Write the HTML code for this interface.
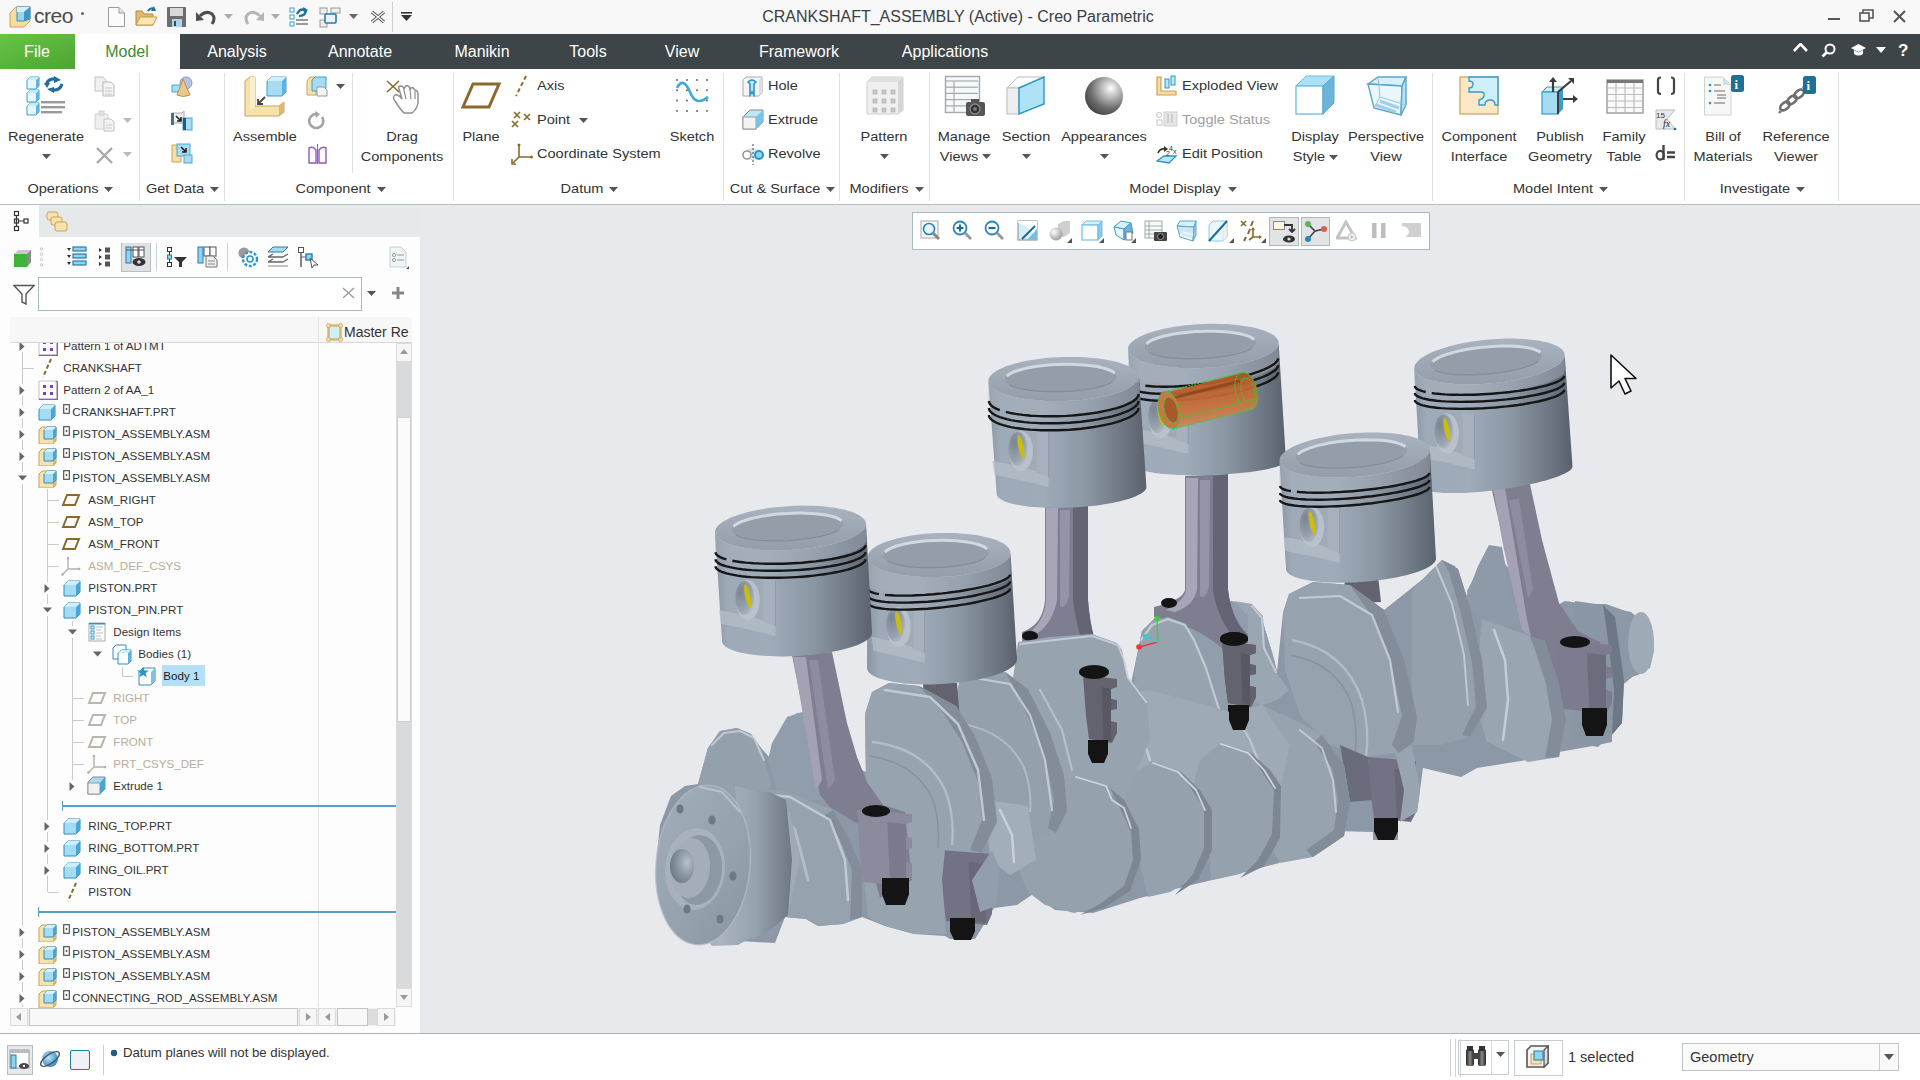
<!DOCTYPE html>
<html><head><meta charset="utf-8"><style>
html,body{margin:0;padding:0;width:1920px;height:1080px;overflow:hidden;background:#e8e9ed;font-family:"Liberation Sans", sans-serif;}
.t{position:absolute;white-space:nowrap;line-height:20px;font-family:"Liberation Sans", sans-serif;}
</style></head><body>
<div style="position:absolute;left:0px;top:0px;width:1920px;height:34px;background:#f8f8f8"></div><div style="position:absolute;left:0px;top:34px;width:1920px;height:35px;background:#3d4548"></div><div style="position:absolute;left:0px;top:34px;width:75px;height:35px;background:linear-gradient(160deg,#65c545,#4ea432)"></div><div style="position:absolute;left:75px;top:34px;width:105px;height:35px;background:#fff"></div><div style="position:absolute;left:0px;top:69px;width:1920px;height:135px;background:#fff"></div><div style="position:absolute;left:0px;top:204px;width:1920px;height:1px;background:#b3bfbf"></div><div style="position:absolute;left:0px;top:205px;width:420px;height:828px;background:#fdfdfd"></div><div style="position:absolute;left:0px;top:205px;width:420px;height:32px;background:#e6e9ea"></div><div style="position:absolute;left:0px;top:205px;width:39px;height:32px;background:#fdfdfd"></div><div style="position:absolute;left:420px;top:205px;width:1500px;height:828px;background:#e8e9ed"></div><div style="position:absolute;left:0px;top:1033px;width:1920px;height:1px;background:#a9b6b8"></div><div style="position:absolute;left:0px;top:1034px;width:1920px;height:46px;background:#fff"></div><svg style="position:absolute;left:9px;top:6px;" width="22" height="22" viewBox="0 0 22 22"><path d="M1,7 L7,1 L21,1 L21,15 L15,21 L1,21Z" fill="#f7dca0" stroke="#c9a25a" stroke-width="1"/><path d="M8,1 L21,1 L21,13 L15,15 L8,15Z" fill="#9bd3ef" stroke="#2f8fc0" stroke-width="1"/><path d="M8,1 L21,1 L15,6 L8,6Z" fill="#d4effa"/><path d="M15,6 L21,1 L21,13 L15,15Z" fill="#3b97c8"/></svg><div class="t" style="left:34px;top:2px;font-size:21px;line-height:28px;color:#4a4a4a;letter-spacing:-0.5px">creo</div><div style="position:absolute;left:81px;top:12px;width:3px;height:3px;border-radius:2px;background:#666"></div><svg style="position:absolute;left:107px;top:6px;" width="19" height="22" viewBox="0 0 19 22"><path d="M1.5,1.5 L12,1.5 L17.5,7 L17.5,20.5 L1.5,20.5Z" fill="#fbfbfb" stroke="#9a9a9a" stroke-width="1"/><path d="M12,1.5 L12,7 L17.5,7" fill="#dfe8ef" stroke="#9a9a9a" stroke-width="1"/></svg><svg style="position:absolute;left:135px;top:5px;" width="23" height="22" viewBox="0 0 23 22"><path d="M1,8 L1,20 L18,20 L18,9 L9,9 L7,6 L1,6Z" fill="#e3b96a" stroke="#b88a3a" stroke-width="1"/><path d="M1,20 L5,12 L22,12 L18,20Z" fill="#fbe6b8" stroke="#c8994a" stroke-width="1"/><path d="M13,6 Q16,2 19,4" fill="none" stroke="#1f6f9a" stroke-width="2"/><path d="M19,1 L21,6 L16,6Z" fill="#1f6f9a"/></svg><svg style="position:absolute;left:166px;top:6px;" width="21" height="22" viewBox="0 0 21 22"><rect x="1" y="1" width="19" height="20" rx="1" fill="#6d6d6d"/><rect x="4" y="2" width="13" height="8" fill="#d8d8d8"/><rect x="6" y="13" width="10" height="8" fill="#a9d6ee"/><rect x="8" y="15" width="2" height="5" fill="#444"/></svg><svg style="position:absolute;left:195px;top:9px;" width="22" height="17" viewBox="0 0 22 17"><path d="M5,7 Q11,1 17,5 Q21,9 17,15" fill="none" stroke="#4d4d4d" stroke-width="3"/><path d="M1,3 L9,11 L1,12Z" fill="#4d4d4d"/></svg><svg style="position:absolute;left:223.5px;top:13.5px;" width="9" height="5" viewBox="0 0 9 5"><path d="M0,0 L9,0 L4.5,5Z" fill="#aaa"/></svg><svg style="position:absolute;left:243px;top:9px;" width="22" height="17" viewBox="0 0 22 17"><path d="M17,7 Q11,1 5,5 Q1,9 5,15" fill="none" stroke="#b5b5b5" stroke-width="3"/><path d="M21,3 L13,11 L21,12Z" fill="#b5b5b5"/></svg><svg style="position:absolute;left:270.5px;top:13.5px;" width="9" height="5" viewBox="0 0 9 5"><path d="M0,0 L9,0 L4.5,5Z" fill="#aaa"/></svg><svg style="position:absolute;left:289px;top:6px;" width="21" height="21" viewBox="0 0 21 21"><rect x="1" y="2" width="4" height="4" fill="#fff" stroke="#3a9cc9"/><rect x="1" y="9" width="4" height="4" fill="#fff" stroke="#3a9cc9"/><rect x="1" y="16" width="4" height="4" fill="#fff" stroke="#3a9cc9"/><rect x="7" y="13" width="12" height="2" fill="#999"/><rect x="7" y="17" width="12" height="2" fill="#999"/><path d="M8,8 Q11,2 16,4" fill="none" stroke="#1f6f9a" stroke-width="2.2"/><path d="M14,1 L19,4 L15,7Z" fill="#1f6f9a"/><path d="M17,5 Q16,10 10,10" fill="none" stroke="#1f6f9a" stroke-width="2.2"/></svg><svg style="position:absolute;left:319px;top:7px;" width="23" height="21" viewBox="0 0 23 21"><rect x="1" y="1" width="7" height="6" fill="#eee" stroke="#999"/><rect x="12" y="1" width="9" height="5" fill="#eee" stroke="#999"/><rect x="1" y="13" width="7" height="7" fill="#eee" stroke="#999"/><rect x="6" y="7" width="11" height="9" rx="1" fill="#e9f2f8" stroke="#2a7aa8" stroke-width="1.6"/></svg><svg style="position:absolute;left:348.5px;top:13.5px;" width="9" height="5" viewBox="0 0 9 5"><path d="M0,0 L9,0 L4.5,5Z" fill="#666"/></svg><svg style="position:absolute;left:370px;top:10px;" width="16" height="14" viewBox="0 0 16 14"><path d="M2,2 L14,12 M14,2 L2,12" stroke="#555" stroke-width="3.2"/><path d="M2,2 L14,12 M14,2 L2,12" stroke="#fff" stroke-width="1.2"/></svg><div style="position:absolute;left:392px;top:2px;width:1px;height:30px;background:#cfcfcf"></div><svg style="position:absolute;left:401px;top:12px;" width="11" height="9" viewBox="0 0 11 9"><rect x="0" y="0" width="11" height="1.6" fill="#333"/><path d="M0,3 L11,3 L5.5,9Z" fill="#333"/></svg><div style="position:absolute;left:1828px;top:18px;width:12px;height:2px;background:#555"></div><svg style="position:absolute;left:1859px;top:9px;" width="15" height="13" viewBox="0 0 15 13"><rect x="1" y="4" width="9" height="8" fill="none" stroke="#555" stroke-width="1.6"/><path d="M4,4 L4,1 L14,1 L14,9 L10,9" fill="none" stroke="#555" stroke-width="1.6"/></svg><svg style="position:absolute;left:1893px;top:10px;" width="13" height="13" viewBox="0 0 13 13"><path d="M1,1 L12,12 M12,1 L1,12" stroke="#555" stroke-width="2"/></svg><svg style="position:absolute;left:1793px;top:43px;" width="15" height="9" viewBox="0 0 15 9"><path d="M1,8 L7.5,1 L14,8" fill="none" stroke="#fff" stroke-width="2.6"/></svg><svg style="position:absolute;left:1821px;top:43px;" width="15" height="15" viewBox="0 0 15 15"><circle cx="9" cy="6" r="4.5" fill="none" stroke="#fff" stroke-width="2"/><path d="M6,9 L1.5,13.5" stroke="#fff" stroke-width="2.6"/></svg><svg style="position:absolute;left:1850px;top:43px;" width="17" height="14" viewBox="0 0 17 14"><path d="M1,5 L8.5,1 L16,5 L8.5,9Z" fill="#fff"/><path d="M4,7 L4,11 Q8.5,14 13,11 L13,7 L8.5,9.5Z" fill="#fff"/></svg><svg style="position:absolute;left:1876.0px;top:47.0px;" width="10" height="6" viewBox="0 0 10 6"><path d="M0,0 L10,0 L5.0,6Z" fill="#fff"/></svg><div class="t" style="left:1898px;top:40px;font-size:17px;line-height:22px;color:#fff;font-weight:bold">?</div><svg style="position:absolute;left:26px;top:76px;" width="14" height="14" viewBox="0 0 14 14"><path d="M4,1 L13,1 L13,10 L10,13 L1,13 L1,4Z" fill="#e6f6fd" stroke="#39a0d0" stroke-width="1"/><path d="M10,4 L13,1 L13,10 L10,13Z" fill="#5eb6e0"/><path d="M1,4 L4,1 L13,1 L10,4Z" fill="#c5ebfa"/></svg><svg style="position:absolute;left:26px;top:89px;" width="14" height="14" viewBox="0 0 14 14"><path d="M4,1 L13,1 L13,10 L10,13 L1,13 L1,4Z" fill="#e6f6fd" stroke="#39a0d0" stroke-width="1"/><path d="M10,4 L13,1 L13,10 L10,13Z" fill="#5eb6e0"/><path d="M1,4 L4,1 L13,1 L10,4Z" fill="#c5ebfa"/></svg><svg style="position:absolute;left:26px;top:102px;" width="14" height="14" viewBox="0 0 14 14"><path d="M4,1 L13,1 L13,10 L10,13 L1,13 L1,4Z" fill="#e6f6fd" stroke="#39a0d0" stroke-width="1"/><path d="M10,4 L13,1 L13,10 L10,13Z" fill="#5eb6e0"/><path d="M1,4 L4,1 L13,1 L10,4Z" fill="#c5ebfa"/></svg><svg style="position:absolute;left:41px;top:100px;" width="25" height="14" viewBox="0 0 25 14"><rect x="0" y="1" width="24" height="2.4" fill="#9a9a9a"/><rect x="0" y="6" width="24" height="2.4" fill="#9a9a9a"/><rect x="0" y="11" width="21" height="2.4" fill="#9a9a9a"/></svg><svg style="position:absolute;left:43px;top:76px;" width="22" height="18" viewBox="0 0 22 18"><path d="M3,9 Q5,2 13,3" fill="none" stroke="#1d6e99" stroke-width="3"/><path d="M11,0 L18,4 L11,7Z" fill="#1d6e99"/><path d="M19,8 Q17,15 9,14" fill="none" stroke="#1d6e99" stroke-width="3"/><path d="M11,11 L4,13 L11,17Z" fill="#1d6e99"/><path d="M1,7 L7,7 L4,12Z" fill="#1d6e99"/></svg><svg style="position:absolute;left:41.5px;top:153.5px;" width="9" height="5" viewBox="0 0 9 5"><path d="M0,0 L9,0 L4.5,5Z" fill="#555"/></svg><svg style="position:absolute;left:94px;top:76px;" width="21" height="21" viewBox="0 0 21 21"><path d="M1,1 L9,1 L12,4 L12,15 L1,15Z" fill="#f0f0f0" stroke="#c2c2c2"/><path d="M9,6 L17,6 L20,9 L20,20 L9,20Z" fill="#f3f3f3" stroke="#b9b9b9"/><path d="M11,12 h7 M11,15 h7 M11,18 h7" stroke="#c9c9c9"/></svg><svg style="position:absolute;left:94px;top:110px;" width="21" height="22" viewBox="0 0 21 22"><rect x="1" y="4" width="13" height="15" rx="1" fill="#efefef" stroke="#cfcfcf"/><rect x="5" y="1" width="5" height="4" fill="#e5e5e5" stroke="#cfcfcf"/><path d="M10,9 L17,9 L20,12 L20,21 L10,21Z" fill="#f4f4f4" stroke="#c2c2c2"/><path d="M12,15 h6 M12,18 h6" stroke="#cbcbcb"/></svg><svg style="position:absolute;left:122.5px;top:117.5px;" width="9" height="5" viewBox="0 0 9 5"><path d="M0,0 L9,0 L4.5,5Z" fill="#bbb"/></svg><svg style="position:absolute;left:95px;top:146px;" width="19" height="19" viewBox="0 0 19 19"><path d="M2,2 L17,17 M17,2 L2,17" stroke="#a9a9a9" stroke-width="2.4"/></svg><svg style="position:absolute;left:122.5px;top:151.5px;" width="9" height="5" viewBox="0 0 9 5"><path d="M0,0 L9,0 L4.5,5Z" fill="#bbb"/></svg><svg style="position:absolute;left:171px;top:76px;" width="22" height="21" viewBox="0 0 22 21"><path d="M1,9 L10,9 L10,16 L1,16Z" fill="#a8dcf2" stroke="#4aa6d2"/><circle cx="15" cy="7" r="6" fill="#b9c2e8" stroke="#8894c8"/><path d="M12,3 L19,19 Q12,22 6,19Z" fill="#e8c98a" stroke="#b8934a"/></svg><svg style="position:absolute;left:171px;top:110px;" width="22" height="21" viewBox="0 0 22 21"><path d="M1,3 L11,3 L13,1 L13,13 L1,13Z" fill="#eeeeee" stroke="#aaa"/><rect x="0" y="3" width="3" height="12" fill="#4a6f86"/><path d="M5,6 L10,11 M10,7 L10,11 L6,11" stroke="#222" stroke-width="1.6" fill="none"/><rect x="12" y="8" width="9" height="12" fill="#a8dcf2" stroke="#4aa6d2"/><rect x="12" y="8" width="3" height="12" fill="#1d5f80"/></svg><svg style="position:absolute;left:171px;top:143px;" width="22" height="21" viewBox="0 0 22 21"><path d="M1,2 L10,2 L10,19 L1,19Z" fill="#f6dfa6" stroke="#c9a25a"/><rect x="6" y="1" width="13" height="12" fill="#a8dcf2" stroke="#4aa6d2"/><path d="M10,4 L15,9 M15,5 L15,9 L11,9" stroke="#222" stroke-width="1.6" fill="none"/><rect x="13" y="12" width="8" height="8" fill="#a8dcf2" stroke="#4aa6d2"/></svg><svg style="position:absolute;left:243px;top:75px;" width="44" height="43" viewBox="0 0 44 43"><path d="M2,6 L7,2 L12,2 L12,31 L36,31 L41,27 L41,37 L36,41 L2,41Z" fill="#f8e2ac" stroke="#c9a25a" stroke-width="1"/><path d="M7,2 L12,2 L12,31 L7,35Z" fill="#fcefcf"/><path d="M36,31 L41,27 L41,37 L36,41Z" fill="#d9b874"/><path d="M24,6 L28,2 L43,2 L43,17 L39,21 L24,21Z" fill="#a6dcf3" stroke="#3a9cc9"/><path d="M39,6 L43,2 L43,17 L39,21Z" fill="#5eb2dc"/><path d="M24,6 L28,2 L43,2 L39,6Z" fill="#d2f0fb"/><path d="M22,22 L15,29 M15,24 L15,29 L20,29" stroke="#444" stroke-width="1.8" fill="none"/></svg><svg style="position:absolute;left:306px;top:76px;" width="23" height="21" viewBox="0 0 23 21"><path d="M1,5 L4,1 L10,1 L10,19 L1,19Z" fill="#f8e2ac" stroke="#c9a25a"/><path d="M6,4 L9,1 L20,1 L20,12 L17,15 L6,15Z" fill="#a6dcf3" stroke="#3a9cc9"/><path d="M11,11 L18,11 L21,14 L21,20 L11,20Z" fill="#f4f4f4" stroke="#999"/></svg><svg style="position:absolute;left:335.5px;top:83.5px;" width="9" height="5" viewBox="0 0 9 5"><path d="M0,0 L9,0 L4.5,5Z" fill="#555"/></svg><svg style="position:absolute;left:308px;top:111px;" width="19" height="19" viewBox="0 0 19 19"><path d="M14,6 A7,7 0 1 1 9,3" fill="none" stroke="#a3a3a3" stroke-width="2.6"/><path d="M7,0 L12,3 L8,7Z" fill="#a3a3a3"/></svg><svg style="position:absolute;left:307px;top:144px;" width="21" height="20" viewBox="0 0 21 20"><path d="M2,19 L2,4 Q6,2 9,6 L9,19Z" fill="#fbf9fd" stroke="#8e5bbd" stroke-width="1.4"/><path d="M19,19 L19,4 Q15,2 12,6 L12,19Z" fill="#fbf9fd" stroke="#8e5bbd" stroke-width="1.4"/><rect x="10" y="0" width="1" height="20" fill="#777"/></svg><div style="position:absolute;left:352px;top:73px;width:1px;height:100px;background:#dde2e2"></div><svg style="position:absolute;left:384px;top:78px;" width="38" height="38" viewBox="0 0 38 38"><path d="M3,3 L15,14 M15,3 L3,14" stroke="#8a6a2a" stroke-width="1.6"/><path d="M11,23 Q8,19 11,17 Q14,16 18,21 L15,11 Q14,8 17,8 Q19,8 20,11 L21,9 Q22,7 24,8 Q26,9 26,11 L27,10 Q29,9 30,11 L31,12 Q33,12 34,15 L34,25 Q33,31 28,35 L20,35 Q16,31 11,23Z" fill="#fff" stroke="#8f8f8f" stroke-width="1.5"/><path d="M20,12 L22,21 M26,11 L27,21 M31,13 L31,21" stroke="#8f8f8f" stroke-width="1.2"/></svg><svg style="position:absolute;left:460px;top:81px;" width="42" height="29" viewBox="0 0 42 29"><path d="M3,26 L13,3 L39,3 L29,26Z" fill="none" stroke="#8a6a2a" stroke-width="3"/></svg><svg style="position:absolute;left:513px;top:75px;" width="16" height="22" viewBox="0 0 16 22"><path d="M13,1 L3,21" stroke="#8a6a2a" stroke-width="2" stroke-dasharray="4,3"/></svg><svg style="position:absolute;left:511px;top:110px;" width="22" height="19" viewBox="0 0 22 19"><path d="M3,2 l6,6 M9,2 l-6,6 M13,4 l6,6 M19,4 l-6,6 M1,11 l6,6 M7,11 l-6,6" stroke="#8a6a2a" stroke-width="1.6"/></svg><svg style="position:absolute;left:511px;top:143px;" width="23" height="22" viewBox="0 0 23 22"><path d="M8,2 L8,14 L20,14 M8,14 L2,20" fill="none" stroke="#8a6a2a" stroke-width="1.6"/><circle cx="8" cy="2" r="1.5" fill="#8a6a2a"/><circle cx="20.5" cy="14" r="1.5" fill="#8a6a2a"/><path d="M1,16 L1,21 L5,21" fill="none" stroke="#8a6a2a" stroke-width="1.6"/></svg><svg style="position:absolute;left:578.5px;top:117.5px;" width="9" height="5" viewBox="0 0 9 5"><path d="M0,0 L9,0 L4.5,5Z" fill="#555"/></svg><svg style="position:absolute;left:675px;top:78px;" width="36" height="35" viewBox="0 0 36 35"><circle cx="2" cy="2.0" r="1" fill="#666"/><circle cx="2" cy="12.3" r="1" fill="#666"/><circle cx="2" cy="22.6" r="1" fill="#666"/><circle cx="2" cy="32.900000000000006" r="1" fill="#666"/><circle cx="12" cy="2.0" r="1" fill="#666"/><circle cx="12" cy="12.3" r="1" fill="#666"/><circle cx="12" cy="22.6" r="1" fill="#666"/><circle cx="12" cy="32.900000000000006" r="1" fill="#666"/><circle cx="22" cy="2.0" r="1" fill="#666"/><circle cx="22" cy="12.3" r="1" fill="#666"/><circle cx="22" cy="22.6" r="1" fill="#666"/><circle cx="22" cy="32.900000000000006" r="1" fill="#666"/><circle cx="32" cy="2.0" r="1" fill="#666"/><circle cx="32" cy="12.3" r="1" fill="#666"/><circle cx="32" cy="22.6" r="1" fill="#666"/><circle cx="32" cy="32.900000000000006" r="1" fill="#666"/><path d="M2,10 Q8,-2 15,14 Q21,29 33,19" fill="none" stroke="#3aaadf" stroke-width="2.6"/></svg><svg style="position:absolute;left:742px;top:76px;" width="22" height="21" viewBox="0 0 22 21"><path d="M1,4 L4,1 L20,1 L20,17 L17,20 L1,20Z" fill="#f5f5f5" stroke="#aaa"/><path d="M17,4 L20,1 L20,17 L17,20Z" fill="#ddd"/><path d="M6,6 Q10,2 14,6 L12,8 L12,19 L10,16 L8,19 L8,8Z" fill="#bfe6f6" stroke="#2a95c8" stroke-width="1.6"/></svg><svg style="position:absolute;left:742px;top:109px;" width="22" height="21" viewBox="0 0 22 21"><path d="M1,8 L8,1 L21,1 L21,13 L14,20 L1,20Z" fill="#bfe6f6" stroke="#888"/><rect x="1" y="8" width="13" height="12" fill="#f3f3f3" stroke="#999"/><path d="M14,8 L21,1 L21,13 L14,20Z" fill="#7cc2e2"/></svg><svg style="position:absolute;left:742px;top:144px;" width="22" height="21" viewBox="0 0 22 21"><ellipse cx="11" cy="10" rx="9" ry="6" fill="#cfe9f6"/><circle cx="5" cy="11" r="4" fill="#fff" stroke="#999" stroke-width="1.6"/><circle cx="17" cy="11" r="4" fill="#8fd3f3" stroke="#2a95c8" stroke-width="2"/><path d="M11,0 L11,21" stroke="#444" stroke-width="1" stroke-dasharray="2,2"/></svg><svg style="position:absolute;left:865px;top:76px;" width="40" height="40" viewBox="0 0 40 40"><path d="M2,6 L7,1 L38,1 L38,34 L33,38 L2,38Z" fill="#efefef" stroke="#cfcfcf"/><path d="M33,6 L38,1 L38,34 L33,38Z" fill="#d6d6d6"/><path d="M2,6 L7,1 L38,1 L33,6Z" fill="#e0e0e0"/><rect x="8" y="14" width="4" height="4" fill="#c8c8c8" stroke="#aaa" stroke-width="0.6"/><rect x="8" y="23" width="4" height="4" fill="#c8c8c8" stroke="#aaa" stroke-width="0.6"/><rect x="8" y="32" width="4" height="4" fill="#c8c8c8" stroke="#aaa" stroke-width="0.6"/><rect x="17" y="14" width="4" height="4" fill="#c8c8c8" stroke="#aaa" stroke-width="0.6"/><rect x="17" y="23" width="4" height="4" fill="#c8c8c8" stroke="#aaa" stroke-width="0.6"/><rect x="17" y="32" width="4" height="4" fill="#c8c8c8" stroke="#aaa" stroke-width="0.6"/><rect x="26" y="14" width="4" height="4" fill="#c8c8c8" stroke="#aaa" stroke-width="0.6"/><rect x="26" y="23" width="4" height="4" fill="#c8c8c8" stroke="#aaa" stroke-width="0.6"/><rect x="26" y="32" width="4" height="4" fill="#c8c8c8" stroke="#aaa" stroke-width="0.6"/></svg><svg style="position:absolute;left:879.5px;top:153.5px;" width="9" height="5" viewBox="0 0 9 5"><path d="M0,0 L9,0 L4.5,5Z" fill="#555"/></svg><svg style="position:absolute;left:944px;top:75px;" width="42" height="42" viewBox="0 0 42 42"><rect x="1.5" y="1.5" width="34" height="36" fill="#f4f9fc" stroke="#a8a8a8" stroke-width="1.4"/><path d="M2,6.0 L34,6.0" stroke="#a8a8a8" stroke-width="1.2"/><path d="M2,12.2 L34,12.2" stroke="#a8a8a8" stroke-width="1.2"/><path d="M2,18.4 L34,18.4" stroke="#a8a8a8" stroke-width="1.2"/><path d="M2,24.6 L34,24.6" stroke="#a8a8a8" stroke-width="1.2"/><path d="M2,30.8 L34,30.8" stroke="#a8a8a8" stroke-width="1.2"/><path d="M10,6 L10,37" stroke="#a8a8a8" stroke-width="1.2"/><rect x="22" y="27" width="19" height="14" rx="2" fill="#555"/><rect x="27" y="24" width="8" height="4" fill="#555"/><circle cx="31" cy="34" r="5" fill="#333" stroke="#888" stroke-width="1.4"/><circle cx="31" cy="34" r="2" fill="#777"/></svg><svg style="position:absolute;left:1006px;top:76px;" width="40" height="40" viewBox="0 0 40 40"><path d="M1,12 L12,1 L38,1 L13,12Z" fill="#fff" stroke="#bbb"/><rect x="1" y="12" width="12" height="26" fill="#eeeeee" stroke="#bbb"/><path d="M13,12 L38,1 L38,28 L13,38Z" fill="#aee3f6" stroke="#2a95c8" stroke-width="1.4"/></svg><svg style="position:absolute;left:1084px;top:76px;" width="40" height="40" viewBox="0 0 40 40"><defs><radialGradient id="sph" cx="0.68" cy="0.3" r="0.75"><stop offset="0" stop-color="#ffffff"/><stop offset="0.25" stop-color="#c9c9c9"/><stop offset="0.7" stop-color="#6e6e6e"/><stop offset="1" stop-color="#474747"/></radialGradient></defs><circle cx="20" cy="20" r="19" fill="url(#sph)"/></svg><svg style="position:absolute;left:981.5px;top:154.0px;" width="9" height="5" viewBox="0 0 9 5"><path d="M0,0 L9,0 L4.5,5Z" fill="#555"/></svg><svg style="position:absolute;left:1021.5px;top:154.0px;" width="9" height="5" viewBox="0 0 9 5"><path d="M0,0 L9,0 L4.5,5Z" fill="#555"/></svg><svg style="position:absolute;left:1099.5px;top:154.0px;" width="9" height="5" viewBox="0 0 9 5"><path d="M0,0 L9,0 L4.5,5Z" fill="#555"/></svg><svg style="position:absolute;left:1156px;top:75px;" width="22" height="22" viewBox="0 0 22 22"><path d="M1,2 L5,2 L5,16 L20,16 L20,20 L1,20Z" fill="#f7dca0" stroke="#c9a25a" stroke-width="1.2"/><rect x="9" y="4" width="4" height="9" fill="#bfe6f6" stroke="#2a95c8"/><rect x="15" y="1" width="4" height="9" fill="#bfe6f6" stroke="#2a95c8"/></svg><svg style="position:absolute;left:1156px;top:111px;" width="22" height="17" viewBox="0 0 22 17"><circle cx="3" cy="4" r="2.5" fill="none" stroke="#c8c8c8"/><rect x="1" y="9" width="5" height="5" fill="none" stroke="#c8c8c8"/><rect x="8" y="1" width="13" height="14" fill="#e6e6e6" stroke="#cfcfcf"/><path d="M12,3 L12,12 M16,3 L16,12" stroke="#c4c4c4" stroke-width="1.4"/></svg><svg style="position:absolute;left:1156px;top:144px;" width="22" height="20" viewBox="0 0 22 20"><path d="M1,17 L8,12 L20,12 L13,19Z" fill="#bfe6f6" stroke="#2a95c8" stroke-width="1.4"/><path d="M2,9 Q4,4 9,5" fill="none" stroke="#333" stroke-width="1.6"/><path d="M8,2 L12,5 L8,8Z" fill="#333"/><text x="13" y="7" font-size="7" fill="#333" font-family="Liberation Sans">4</text><text x="17" y="10" font-size="7" fill="#333" font-family="Liberation Sans">x</text><text x="10" y="12" font-size="7" fill="#333" font-family="Liberation Sans">2</text></svg><svg style="position:absolute;left:1295px;top:75px;" width="40" height="41" viewBox="0 0 40 41"><path d="M1,11 L11,1 L39,1 L28,11Z" fill="#a9e2f6" stroke="#6fc0e2"/><rect x="1" y="11" width="27" height="28" fill="#fff" stroke="#6fc0e2" stroke-width="1.4"/><path d="M28,11 L39,1 L39,28 L28,39Z" fill="#6cb5d9" stroke="#5aa6cc"/></svg><svg style="position:absolute;left:1328.5px;top:154.5px;" width="9" height="5" viewBox="0 0 9 5"><path d="M0,0 L9,0 L4.5,5Z" fill="#555"/></svg><svg style="position:absolute;left:1366px;top:75px;" width="42" height="43" viewBox="0 0 42 43"><path d="M2,9 L12,2 L40,2 L36,11Z" fill="#d8f0fa" stroke="#5aa6cc" stroke-width="1.4"/><path d="M2,9 L36,11 L35,40 L8,33Z" fill="#eaf6fb" stroke="#5aa6cc" stroke-width="1.4"/><path d="M36,11 L40,2 L40,30 L35,40Z" fill="#b9e0f1" stroke="#5aa6cc" stroke-width="1.4"/><path d="M12,2 L14,22 L40,30 M14,22 L8,33" fill="none" stroke="#8cc6e0" stroke-width="1"/><path d="M10,30 L30,37 M14,26 L33,33" stroke="#9fd0e6" stroke-width="3"/></svg><svg style="position:absolute;left:1459px;top:76px;" width="41" height="40" viewBox="0 0 41 40"><rect x="1" y="1" width="38" height="37" fill="#fbe8c4" stroke="#c9a25a" stroke-width="1.2"/><path d="M10,1 L39,1 L39,29 L36,29 Q36,24 31,24 Q26,24 26,29 L20,29 L20,24 Q24,23 25,20 Q26,16 22,16 L11,16 L10,16 L10,12 Q14,12 14,8 Q14,5 10,5Z" fill="#cdeffb" stroke="#3a9cc9" stroke-width="1.4"/></svg><svg style="position:absolute;left:1541px;top:77px;" width="38" height="39" viewBox="0 0 38 39"><path d="M1,15 L6,10 L22,10 L17,15Z" fill="#cdeffb" stroke="#3a9cc9"/><rect x="1" y="15" width="16" height="22" fill="#a6dcf3" stroke="#3a9cc9" stroke-width="1.2"/><path d="M17,15 L22,10 L22,32 L17,37Z" fill="#3a9cc9"/><path d="M12,15 L12,3 M17,15 L30,4 M22,22 L34,22" stroke="#3c3c3c" stroke-width="2.2"/><path d="M8,5 L12,0 L16,5Z M27,1 L33,1 L33,7Z M32,18 L37,22 L32,26Z" fill="#3c3c3c"/><path d="M17,15 L17,37" stroke="#3c3c3c" stroke-width="2"/></svg><svg style="position:absolute;left:1606px;top:79px;" width="38" height="35" viewBox="0 0 38 35"><rect x="1" y="1" width="36" height="33" fill="#fafafa" stroke="#9a9a9a" stroke-width="1.4"/><rect x="1" y="1" width="36" height="3" fill="#777"/><path d="M1,9.0 L36,9.0" stroke="#bcbcbc" stroke-width="1.2"/><path d="M1,15.5 L36,15.5" stroke="#bcbcbc" stroke-width="1.2"/><path d="M1,22.0 L36,22.0" stroke="#bcbcbc" stroke-width="1.2"/><path d="M1,28.5 L36,28.5" stroke="#bcbcbc" stroke-width="1.2"/><path d="M10,4 L10,33" stroke="#bcbcbc" stroke-width="1.2"/><path d="M19,4 L19,33" stroke="#bcbcbc" stroke-width="1.2"/><path d="M28,4 L28,33" stroke="#bcbcbc" stroke-width="1.2"/></svg><svg style="position:absolute;left:1656px;top:76px;" width="20" height="20" viewBox="0 0 20 20"><path d="M5,1.5 Q2,1.5 2,4 L2,15.5 Q2,18 5,18 M15,1.5 Q18,1.5 18,4 L18,15.5 Q18,18 15,18" fill="none" stroke="#444" stroke-width="2.2"/></svg><svg style="position:absolute;left:1655px;top:109px;" width="22" height="22" viewBox="0 0 22 22"><path d="M1,1 L20,1 L12,10 L20,20 L1,20Z" fill="#e9e9e9" stroke="#bbb"/><text x="1" y="9" font-size="8" fill="#333" font-family="Liberation Sans">15</text><text x="8" y="18" font-size="10" font-style="italic" fill="#222" font-family="Liberation Serif">fx</text><circle cx="20" cy="20" r="1.3" fill="#1a6a9a"/></svg><svg style="position:absolute;left:1655px;top:144px;" width="22" height="18" viewBox="0 0 22 18"><path d="M8.5,1 V16" stroke="#444" stroke-width="2.4"/><ellipse cx="5.2" cy="11.2" rx="3.6" ry="4.4" fill="none" stroke="#444" stroke-width="2.2"/><path d="M12,8.5 H20 M12,13 H20" stroke="#444" stroke-width="2.4"/></svg><svg style="position:absolute;left:1703px;top:75px;" width="42" height="42" viewBox="0 0 42 42"><path d="M1.5,2 L20,2 L28,10 L28,40 L1.5,40Z" fill="#f7f7f7" stroke="#d0d0d0"/><path d="M20,2 L20,10 L28,10" fill="#cfe0ea"/><circle cx="7" cy="10" r="1.3" fill="#2a95c8"/><circle cx="7" cy="16" r="1.3" fill="#2a95c8"/><circle cx="7" cy="28" r="1.3" fill="#2a95c8"/><path d="M11,10 h7 M11,16 h11 M14,20 h9 M14,23 h9 M11,28 h11" stroke="#9a9a9a" stroke-width="1.3"/><rect x="28" y="0" width="13" height="17" rx="2.5" fill="#1f6f96"/><text x="31.5" y="14" font-size="13" font-weight="bold" fill="#fff" font-family="Liberation Serif">i</text></svg><svg style="position:absolute;left:1777px;top:76px;" width="41" height="40" viewBox="0 0 41 40"><g fill="none" stroke="#6e6e6e" stroke-width="2.6"><ellipse cx="8" cy="30" rx="5.5" ry="3.4" transform="rotate(-40 8 30)"/><ellipse cx="15" cy="24" rx="5.5" ry="3.4" transform="rotate(-40 15 24)"/><ellipse cx="22" cy="18" rx="5.5" ry="3.4" transform="rotate(-40 22 18)"/></g><path d="M2,37 L4,35 M26,12 Q28,9 30,8" stroke="#6e6e6e" stroke-width="2.4"/><rect x="26" y="0" width="13" height="18" rx="2.5" fill="#1f6f96"/><text x="29.5" y="14" font-size="13" font-weight="bold" fill="#fff" font-family="Liberation Serif">i</text></svg><div class="t" style="left:658px;top:7px;width:600px;text-align:center;font-size:16px;color:#3a4043;">CRANKSHAFT_ASSEMBLY (Active) - Creo Parametric</div><div class="t" style="left:-263px;top:42px;width:600px;text-align:center;font-size:16px;color:#fff;">File</div><div class="t" style="left:-173px;top:42px;width:600px;text-align:center;font-size:16px;color:#3c8c2a;">Model</div><div class="t" style="left:-63px;top:42px;width:600px;text-align:center;font-size:16px;color:#fff;">Analysis</div><div class="t" style="left:60px;top:42px;width:600px;text-align:center;font-size:16px;color:#fff;">Annotate</div><div class="t" style="left:182px;top:42px;width:600px;text-align:center;font-size:16px;color:#fff;">Manikin</div><div class="t" style="left:288px;top:42px;width:600px;text-align:center;font-size:16px;color:#fff;">Tools</div><div class="t" style="left:382px;top:42px;width:600px;text-align:center;font-size:16px;color:#fff;">View</div><div class="t" style="left:499px;top:42px;width:600px;text-align:center;font-size:16px;color:#fff;">Framework</div><div class="t" style="left:645px;top:42px;width:600px;text-align:center;font-size:16px;color:#fff;">Applications</div><div class="t" style="left:-254px;top:127.30000000000001px;width:600px;text-align:center;font-size:13.6px;color:#333;transform:scaleX(1.07);transform-origin:50% 50%">Regenerate</div><div class="t" style="left:-35px;top:127.30000000000001px;width:600px;text-align:center;font-size:13.6px;color:#333;transform:scaleX(1.07);transform-origin:50% 50%">Assemble</div><div class="t" style="left:102px;top:127.30000000000001px;width:600px;text-align:center;font-size:13.6px;color:#333;transform:scaleX(1.07);transform-origin:50% 50%">Drag</div><div class="t" style="left:181px;top:127.30000000000001px;width:600px;text-align:center;font-size:13.6px;color:#333;transform:scaleX(1.07);transform-origin:50% 50%">Plane</div><div class="t" style="left:392px;top:127.30000000000001px;width:600px;text-align:center;font-size:13.6px;color:#333;transform:scaleX(1.07);transform-origin:50% 50%">Sketch</div><div class="t" style="left:584px;top:127.30000000000001px;width:600px;text-align:center;font-size:13.6px;color:#333;transform:scaleX(1.07);transform-origin:50% 50%">Pattern</div><div class="t" style="left:664px;top:127.30000000000001px;width:600px;text-align:center;font-size:13.6px;color:#333;transform:scaleX(1.07);transform-origin:50% 50%">Manage</div><div class="t" style="left:726px;top:127.30000000000001px;width:600px;text-align:center;font-size:13.6px;color:#333;transform:scaleX(1.07);transform-origin:50% 50%">Section</div><div class="t" style="left:804px;top:127.30000000000001px;width:600px;text-align:center;font-size:13.6px;color:#333;transform:scaleX(1.07);transform-origin:50% 50%">Appearances</div><div class="t" style="left:1015px;top:127.30000000000001px;width:600px;text-align:center;font-size:13.6px;color:#333;transform:scaleX(1.07);transform-origin:50% 50%">Display</div><div class="t" style="left:1086px;top:127.30000000000001px;width:600px;text-align:center;font-size:13.6px;color:#333;transform:scaleX(1.07);transform-origin:50% 50%">Perspective</div><div class="t" style="left:1179px;top:127.30000000000001px;width:600px;text-align:center;font-size:13.6px;color:#333;transform:scaleX(1.07);transform-origin:50% 50%">Component</div><div class="t" style="left:1260px;top:127.30000000000001px;width:600px;text-align:center;font-size:13.6px;color:#333;transform:scaleX(1.07);transform-origin:50% 50%">Publish</div><div class="t" style="left:1324px;top:127.30000000000001px;width:600px;text-align:center;font-size:13.6px;color:#333;transform:scaleX(1.07);transform-origin:50% 50%">Family</div><div class="t" style="left:1423px;top:127.30000000000001px;width:600px;text-align:center;font-size:13.6px;color:#333;transform:scaleX(1.07);transform-origin:50% 50%">Bill of</div><div class="t" style="left:1496px;top:127.30000000000001px;width:600px;text-align:center;font-size:13.6px;color:#333;transform:scaleX(1.07);transform-origin:50% 50%">Reference</div><div class="t" style="left:102px;top:147.3px;width:600px;text-align:center;font-size:13.6px;color:#333;transform:scaleX(1.07);transform-origin:50% 50%">Components</div><div class="t" style="left:658.8px;top:147.3px;width:600px;text-align:center;font-size:13.6px;color:#333;transform:scaleX(1.07);transform-origin:50% 50%">Views</div><div class="t" style="left:1009px;top:147.3px;width:600px;text-align:center;font-size:13.6px;color:#333;transform:scaleX(1.07);transform-origin:50% 50%">Style</div><div class="t" style="left:1086px;top:147.3px;width:600px;text-align:center;font-size:13.6px;color:#333;transform:scaleX(1.07);transform-origin:50% 50%">View</div><div class="t" style="left:1179px;top:147.3px;width:600px;text-align:center;font-size:13.6px;color:#333;transform:scaleX(1.07);transform-origin:50% 50%">Interface</div><div class="t" style="left:1260px;top:147.3px;width:600px;text-align:center;font-size:13.6px;color:#333;transform:scaleX(1.07);transform-origin:50% 50%">Geometry</div><div class="t" style="left:1324px;top:147.3px;width:600px;text-align:center;font-size:13.6px;color:#333;transform:scaleX(1.07);transform-origin:50% 50%">Table</div><div class="t" style="left:1423px;top:147.3px;width:600px;text-align:center;font-size:13.6px;color:#333;transform:scaleX(1.07);transform-origin:50% 50%">Materials</div><div class="t" style="left:1496px;top:147.3px;width:600px;text-align:center;font-size:13.6px;color:#333;transform:scaleX(1.07);transform-origin:50% 50%">Viewer</div><div class="t" style="left:537px;top:76.3px;font-size:13.6px;color:#333;transform:scaleX(1.07);transform-origin:0 50%">Axis</div><div class="t" style="left:537px;top:110.3px;font-size:13.6px;color:#333;transform:scaleX(1.07);transform-origin:0 50%">Point</div><div class="t" style="left:537px;top:144.3px;font-size:13.6px;color:#333;transform:scaleX(1.07);transform-origin:0 50%">Coordinate System</div><div class="t" style="left:768px;top:76.3px;font-size:13.6px;color:#333;transform:scaleX(1.07);transform-origin:0 50%">Hole</div><div class="t" style="left:768px;top:110.3px;font-size:13.6px;color:#333;transform:scaleX(1.07);transform-origin:0 50%">Extrude</div><div class="t" style="left:768px;top:144.3px;font-size:13.6px;color:#333;transform:scaleX(1.07);transform-origin:0 50%">Revolve</div><div class="t" style="left:1182px;top:76.3px;font-size:13.6px;color:#333;transform:scaleX(1.07);transform-origin:0 50%">Exploded View</div><div class="t" style="left:1182px;top:110.3px;font-size:13.6px;color:#a0a0a0;transform:scaleX(1.07);transform-origin:0 50%">Toggle Status</div><div class="t" style="left:1182px;top:144.3px;font-size:13.6px;color:#333;transform:scaleX(1.07);transform-origin:0 50%">Edit Position</div><div class="t" style="left:-236.7px;top:178.8px;width:600px;text-align:center;font-size:13.6px;color:#333;transform:scaleX(1.07);transform-origin:50% 50%">Operations</div><svg style="position:absolute;left:103.5px;top:186.5px;" width="9" height="5" viewBox="0 0 9 5"><path d="M0,0 L9,0 L4.5,5Z" fill="#555"/></svg><div class="t" style="left:-124.69999999999999px;top:178.8px;width:600px;text-align:center;font-size:13.6px;color:#333;transform:scaleX(1.07);transform-origin:50% 50%">Get Data</div><svg style="position:absolute;left:209.5px;top:186.5px;" width="9" height="5" viewBox="0 0 9 5"><path d="M0,0 L9,0 L4.5,5Z" fill="#555"/></svg><div class="t" style="left:33px;top:178.8px;width:600px;text-align:center;font-size:13.6px;color:#333;transform:scaleX(1.07);transform-origin:50% 50%">Component</div><svg style="position:absolute;left:376.5px;top:186.5px;" width="9" height="5" viewBox="0 0 9 5"><path d="M0,0 L9,0 L4.5,5Z" fill="#555"/></svg><div class="t" style="left:282.29999999999995px;top:178.8px;width:600px;text-align:center;font-size:13.6px;color:#333;transform:scaleX(1.07);transform-origin:50% 50%">Datum</div><svg style="position:absolute;left:608.5px;top:186.5px;" width="9" height="5" viewBox="0 0 9 5"><path d="M0,0 L9,0 L4.5,5Z" fill="#555"/></svg><div class="t" style="left:475.4px;top:178.8px;width:600px;text-align:center;font-size:13.6px;color:#333;transform:scaleX(1.07);transform-origin:50% 50%">Cut &amp; Surface</div><svg style="position:absolute;left:825.5px;top:186.5px;" width="9" height="5" viewBox="0 0 9 5"><path d="M0,0 L9,0 L4.5,5Z" fill="#555"/></svg><div class="t" style="left:578.8px;top:178.8px;width:600px;text-align:center;font-size:13.6px;color:#333;transform:scaleX(1.07);transform-origin:50% 50%">Modifiers</div><svg style="position:absolute;left:914.5px;top:186.5px;" width="9" height="5" viewBox="0 0 9 5"><path d="M0,0 L9,0 L4.5,5Z" fill="#555"/></svg><div class="t" style="left:874.9000000000001px;top:178.8px;width:600px;text-align:center;font-size:13.6px;color:#333;transform:scaleX(1.07);transform-origin:50% 50%">Model Display</div><svg style="position:absolute;left:1227.5px;top:186.5px;" width="9" height="5" viewBox="0 0 9 5"><path d="M0,0 L9,0 L4.5,5Z" fill="#555"/></svg><div class="t" style="left:1252.6px;top:178.8px;width:600px;text-align:center;font-size:13.6px;color:#333;transform:scaleX(1.07);transform-origin:50% 50%">Model Intent</div><svg style="position:absolute;left:1598.5px;top:186.5px;" width="9" height="5" viewBox="0 0 9 5"><path d="M0,0 L9,0 L4.5,5Z" fill="#555"/></svg><div class="t" style="left:1454.9px;top:178.8px;width:600px;text-align:center;font-size:13.6px;color:#333;transform:scaleX(1.07);transform-origin:50% 50%">Investigate</div><svg style="position:absolute;left:1795.5px;top:186.5px;" width="9" height="5" viewBox="0 0 9 5"><path d="M0,0 L9,0 L4.5,5Z" fill="#555"/></svg><div style="position:absolute;left:139px;top:73px;width:1px;height:128px;background:#dde2e2"></div><div style="position:absolute;left:224px;top:73px;width:1px;height:128px;background:#dde2e2"></div><div style="position:absolute;left:453px;top:73px;width:1px;height:128px;background:#dde2e2"></div><div style="position:absolute;left:723px;top:73px;width:1px;height:128px;background:#dde2e2"></div><div style="position:absolute;left:839px;top:73px;width:1px;height:128px;background:#dde2e2"></div><div style="position:absolute;left:929px;top:73px;width:1px;height:128px;background:#dde2e2"></div><div style="position:absolute;left:1432px;top:73px;width:1px;height:128px;background:#dde2e2"></div><div style="position:absolute;left:1684px;top:73px;width:1px;height:128px;background:#dde2e2"></div><div style="position:absolute;left:1838px;top:73px;width:1px;height:128px;background:#dde2e2"></div><svg style="position:absolute;left:13px;top:210px;" width="17" height="22" viewBox="0 0 17 22"><rect x="1.5" y="1.5" width="4" height="4" fill="#fff" stroke="#333" stroke-width="1.2"/><rect x="1.5" y="9" width="4" height="4" fill="#fff" stroke="#333" stroke-width="1.2"/><rect x="1.5" y="16.5" width="4" height="4" fill="#fff" stroke="#333" stroke-width="1.2"/><rect x="11" y="9" width="4" height="4" fill="#fff" stroke="#333" stroke-width="1.2"/><path d="M3.5,5.5 V16.5 M5.5,11 H11" stroke="#333" stroke-width="1.2"/></svg><svg style="position:absolute;left:46px;top:210px;" width="23" height="22" viewBox="0 0 23 22"><rect x="1" y="2" width="11" height="8" rx="2" fill="#f8e2ac" stroke="#c9a25a"/><rect x="5" y="7" width="11" height="8" rx="2" fill="#f8e2ac" stroke="#c9a25a"/><rect x="9" y="12" width="12" height="9" rx="2" fill="#f8e2ac" stroke="#c9a25a"/></svg><svg style="position:absolute;left:13px;top:249px;" width="19" height="19" viewBox="0 0 19 19"><path d="M1,5 L5,1 L18,1 L18,13 L14,18 L1,18Z" fill="#c8c8c8"/><rect x="1" y="5" width="13" height="13" fill="#3db33a"/><path d="M14,5 L18,1 L18,13 L14,18Z" fill="#8a8a8a"/></svg><svg style="position:absolute;left:39px;top:247px;" width="5" height="21" viewBox="0 0 5 21"><circle cx="2.5" cy="2.0" r="1.2" fill="none" stroke="#bbb" stroke-width="0.8"/><circle cx="2.5" cy="7.3" r="1.2" fill="none" stroke="#bbb" stroke-width="0.8"/><circle cx="2.5" cy="12.6" r="1.2" fill="none" stroke="#bbb" stroke-width="0.8"/><circle cx="2.5" cy="17.9" r="1.2" fill="none" stroke="#bbb" stroke-width="0.8"/></svg><svg style="position:absolute;left:66px;top:246px;" width="21" height="21" viewBox="0 0 21 21"><path d="M1,2 L5,2 L3,5Z M1,9 L5,9 L3,12Z M1,16 L5,16 L3,19Z" fill="#333"/><rect x="7" y="1" width="13" height="4" fill="#8fd3f3" stroke="#2a7aa8" stroke-width="1.2"/><rect x="7" y="8" width="13" height="4" fill="#8fd3f3" stroke="#2a7aa8" stroke-width="1.2"/><rect x="7" y="15" width="13" height="4" fill="#8fd3f3" stroke="#2a7aa8" stroke-width="1.2"/></svg><svg style="position:absolute;left:98px;top:246px;" width="14" height="21" viewBox="0 0 14 21"><path d="M1,2 L4,4 L1,6Z M1,9 L4,11 L1,13Z M1,16 L4,18 L1,20Z" fill="#333"/><rect x="7" y="1.5" width="5" height="5" fill="#555"/><rect x="7" y="8.5" width="5" height="5" fill="#555"/><rect x="7" y="15.5" width="5" height="5" fill="#555"/></svg><div style="position:absolute;left:121px;top:242px;width:30px;height:30px;background:#dfe2e5;border:1px solid #b8bec2;box-sizing:border-box"></div><svg style="position:absolute;left:125px;top:246px;" width="22" height="22" viewBox="0 0 22 22"><rect x="1" y="1" width="5" height="16" fill="#8fd3f3" stroke="#2a7aa8"/><rect x="8" y="1" width="5" height="10" fill="#fff" stroke="#555"/><rect x="14" y="1" width="5" height="10" fill="#fff" stroke="#555"/><path d="M1,4 H19" stroke="#555"/><ellipse cx="14" cy="16" rx="6.5" ry="4" fill="#333"/><circle cx="14" cy="16" r="1.8" fill="#ddd"/></svg><div style="position:absolute;left:156px;top:243px;width:1px;height:28px;background:#c9cfd2"></div><svg style="position:absolute;left:166px;top:246px;" width="22" height="22" viewBox="0 0 22 22"><rect x="1.5" y="1.5" width="4" height="4" fill="#fff" stroke="#333"/><rect x="1.5" y="9" width="4" height="4" fill="#8fd3f3" stroke="#2a7aa8"/><rect x="1.5" y="16.5" width="4" height="4" fill="#fff" stroke="#333"/><path d="M3.5,5.5 V9 M3.5,13 V16.5" stroke="#333"/><path d="M8,11 L21,11 L16,16 L16,21 L13,21 L13,16Z" fill="#333"/></svg><svg style="position:absolute;left:197px;top:246px;" width="21" height="22" viewBox="0 0 21 22"><rect x="1" y="1" width="5" height="16" fill="#8fd3f3" stroke="#2a7aa8"/><rect x="7" y="1" width="6" height="9" fill="#fff" stroke="#555"/><rect x="13" y="1" width="6" height="9" fill="#fff" stroke="#555"/><path d="M9,10 L16,10 L20,14 L20,21 L9,21Z" fill="#eee" stroke="#777"/><path d="M11,15 h7 M11,18 h7" stroke="#888"/></svg><div style="position:absolute;left:227px;top:243px;width:1px;height:28px;background:#c9cfd2"></div><svg style="position:absolute;left:237px;top:246px;" width="22" height="22" viewBox="0 0 22 22"><circle cx="7" cy="7" r="5.5" fill="#9a9a9a"/><circle cx="13" cy="13" r="7" fill="#fff" stroke="#2a95c8" stroke-width="2.4" stroke-dasharray="3,1.6"/><circle cx="13" cy="13" r="3" fill="#fff" stroke="#2a95c8" stroke-width="1.6"/></svg><svg style="position:absolute;left:267px;top:246px;" width="22" height="22" viewBox="0 0 22 22"><path d="M1,6 L6,1 L21,1 L16,6Z" fill="#a6dcf3" stroke="#2a7aa8"/><path d="M1,11 L6,8 M16,11 L21,8 M1,11 H16" fill="none" stroke="#666" stroke-width="1.4"/><path d="M1,16 L6,13 M16,16 L21,13 M1,16 H16" fill="none" stroke="#666" stroke-width="1.4"/><path d="M1,20 L21,20" stroke="#888"/></svg><svg style="position:absolute;left:297px;top:246px;" width="22" height="23" viewBox="0 0 22 23"><rect x="1.5" y="1.5" width="5" height="5" fill="#fff" stroke="#555"/><path d="M4,6.5 V21" stroke="#666" stroke-width="1.6"/><path d="M4,11 H9" stroke="#666"/><rect x="9" y="8" width="6" height="6" fill="#8fd3f3" stroke="#2a7aa8" stroke-width="1.4"/><path d="M13,12 L21,19 L17,19 L15,22Z" fill="#fff" stroke="#555"/></svg><svg style="position:absolute;left:389px;top:246px;" width="21" height="24" viewBox="0 0 21 24"><path d="M1,1 L12,1 L17,6 L17,21 L1,21Z" fill="#f1f4f6" stroke="#c6cfd4"/><circle cx="5" cy="9" r="1.6" fill="none" stroke="#999"/><circle cx="5" cy="14" r="1.6" fill="none" stroke="#999"/><path d="M8,9 h7 M8,14 h7" stroke="#999"/><path d="M17,23 L20,20 L20,23Z" fill="#555"/></svg><svg style="position:absolute;left:13px;top:284px;" width="22" height="21" viewBox="0 0 22 21"><path d="M1,1.5 H21 L13,10 V20 L9,18 V10Z" fill="none" stroke="#555" stroke-width="1.4"/></svg><div style="position:absolute;left:38px;top:277px;width:324px;height:34px;background:#fff;border:1px solid #a9babd;box-sizing:border-box"></div><svg style="position:absolute;left:342px;top:287px;" width="13" height="12" viewBox="0 0 13 12"><path d="M1,1 L12,11 M12,1 L1,11" stroke="#999" stroke-width="1.3"/></svg><svg style="position:absolute;left:366.5px;top:290.5px;" width="9" height="5" viewBox="0 0 9 5"><path d="M0,0 L9,0 L4.5,5Z" fill="#555"/></svg><svg style="position:absolute;left:391px;top:286px;" width="14" height="14" viewBox="0 0 14 14"><path d="M7,1 V13 M1,7 H13" stroke="#888" stroke-width="3"/></svg><div style="position:absolute;left:10px;top:317px;width:402px;height:26px;background:#f7f7f7"></div><div style="position:absolute;left:10px;top:342px;width:402px;height:1px;background:#d5d9dc"></div><div style="position:absolute;left:318px;top:317px;width:1px;height:690px;background:#e3e6e8"></div><svg style="position:absolute;left:326px;top:323px;" width="17" height="19" viewBox="0 0 17 19"><rect x="2.5" y="2.5" width="12" height="14" fill="#cfeff9" stroke="#d9b46a" stroke-width="2.4"/><circle cx="2.5" cy="2.5" r="2" fill="#f6dfa6" stroke="#c9a25a" stroke-width="0.8"/><circle cx="14.5" cy="2.5" r="2" fill="#f6dfa6" stroke="#c9a25a" stroke-width="0.8"/><circle cx="2.5" cy="16.5" r="2" fill="#f6dfa6" stroke="#c9a25a" stroke-width="0.8"/><circle cx="14.5" cy="16.5" r="2" fill="#f6dfa6" stroke="#c9a25a" stroke-width="0.8"/></svg><div style="position:absolute;left:396px;top:343px;width:16px;height:664px;background:#d9dadc"></div><div style="position:absolute;left:396px;top:343px;width:16px;height:19px;background:#f6f6f6;border:1px solid #dcdcdc;box-sizing:border-box"></div><svg style="position:absolute;left:400px;top:349px;" width="8" height="5" viewBox="0 0 8 5"><path d="M0,5 L8,5 L4,0Z" fill="#999"/></svg><div style="position:absolute;left:397px;top:417px;width:14px;height:305px;background:#fafafa;border:1px solid #d0d0d0;box-sizing:border-box"></div><div style="position:absolute;left:396px;top:988px;width:16px;height:19px;background:#f6f6f6;border:1px solid #dcdcdc;box-sizing:border-box"></div><svg style="position:absolute;left:400px;top:995px;" width="8" height="5" viewBox="0 0 8 5"><path d="M0,0 L8,0 L4,5Z" fill="#999"/></svg><div style="position:absolute;left:10px;top:1008px;width:386px;height:18px;background:#f0f0f0"></div><div style="position:absolute;left:10px;top:1008px;width:18px;height:18px;background:#f6f6f6;border:1px solid #dadada;box-sizing:border-box"></div><div style="position:absolute;left:299px;top:1008px;width:18px;height:18px;background:#f6f6f6;border:1px solid #dadada;box-sizing:border-box"></div><div style="position:absolute;left:318px;top:1008px;width:18px;height:18px;background:#f6f6f6;border:1px solid #dadada;box-sizing:border-box"></div><div style="position:absolute;left:377px;top:1008px;width:18px;height:18px;background:#f6f6f6;border:1px solid #dadada;box-sizing:border-box"></div><div style="position:absolute;left:29px;top:1008px;width:269px;height:18px;background:#f8f8f8;border:1px solid #c4c4c4;box-sizing:border-box"></div><div style="position:absolute;left:337px;top:1008px;width:31px;height:18px;background:#f8f8f8;border:1px solid #c4c4c4;box-sizing:border-box"></div><div style="position:absolute;left:368px;top:1009px;width:9px;height:16px;background:#dcdcdc"></div><svg style="position:absolute;left:16px;top:1013px;" width="5" height="8" viewBox="0 0 5 8"><path d="M5,0 L5,8 L0,4Z" fill="#999"/></svg><svg style="position:absolute;left:306px;top:1013px;" width="5" height="8" viewBox="0 0 5 8"><path d="M0,0 L0,8 L5,4Z" fill="#999"/></svg><svg style="position:absolute;left:325px;top:1013px;" width="5" height="8" viewBox="0 0 5 8"><path d="M5,0 L5,8 L0,4Z" fill="#999"/></svg><svg style="position:absolute;left:384px;top:1013px;" width="5" height="8" viewBox="0 0 5 8"><path d="M0,0 L0,8 L5,4Z" fill="#999"/></svg><div style="position:absolute;left:22px;top:343px;width:1px;height:664px;background:#cbcbcb"></div><div style="position:absolute;left:47px;top:489px;width:1px;height:403px;background:#cbcbcb"></div><div style="position:absolute;left:72px;top:621px;width:1px;height:165px;background:#cbcbcb"></div><div style="position:absolute;left:23px;top:368px;width:11px;height:1px;background:#cbcbcb"></div><div style="position:absolute;left:48px;top:500px;width:11px;height:1px;background:#cbcbcb"></div><div style="position:absolute;left:48px;top:522px;width:11px;height:1px;background:#cbcbcb"></div><div style="position:absolute;left:48px;top:544px;width:11px;height:1px;background:#cbcbcb"></div><div style="position:absolute;left:48px;top:566px;width:11px;height:1px;background:#cbcbcb"></div><div style="position:absolute;left:48px;top:892px;width:11px;height:1px;background:#cbcbcb"></div><div style="position:absolute;left:73px;top:698px;width:11px;height:1px;background:#cbcbcb"></div><div style="position:absolute;left:73px;top:720px;width:11px;height:1px;background:#cbcbcb"></div><div style="position:absolute;left:73px;top:742px;width:11px;height:1px;background:#cbcbcb"></div><div style="position:absolute;left:73px;top:764px;width:11px;height:1px;background:#cbcbcb"></div><div style="position:absolute;left:122px;top:667px;width:1px;height:9px;background:#cbcbcb"></div><div style="position:absolute;left:122px;top:676px;width:11px;height:1px;background:#cbcbcb"></div><div style="position:absolute;left:17px;top:340px;width:11px;height:12px;background:#fdfdfd"></div><svg style="position:absolute;left:19px;top:341.5px;" width="6" height="9" viewBox="0 0 6 9"><path d="M0.5,0 L5.5,4.5 L0.5,9Z" fill="#666"/></svg><svg style="position:absolute;left:38px;top:336px;" width="20" height="20" viewBox="0 0 20 20"><path d="M1,1 L18,1 L19,19 L1,19Z" fill="#fff" stroke="#c4c4c4"/><path d="M18,1 L19.5,2 L19.5,19.5 L1.5,19.5 L1,19" fill="none" stroke="#8e5bbd" stroke-width="1.4"/><rect x="5" y="5" width="3" height="3" fill="#7b3fb8"/><rect x="12" y="5" width="3" height="3" fill="#7b3fb8"/><rect x="5" y="12" width="3" height="3" fill="#7b3fb8"/><rect x="12" y="12" width="3" height="3" fill="#7b3fb8"/></svg><svg style="position:absolute;left:41px;top:358px;" width="12" height="20" viewBox="0 0 12 20"><path d="M10,1 L2,19" stroke="#8a6a2a" stroke-width="2" stroke-dasharray="4,2.5"/></svg><div style="position:absolute;left:17px;top:384px;width:11px;height:12px;background:#fdfdfd"></div><svg style="position:absolute;left:19px;top:385.5px;" width="6" height="9" viewBox="0 0 6 9"><path d="M0.5,0 L5.5,4.5 L0.5,9Z" fill="#666"/></svg><svg style="position:absolute;left:38px;top:380px;" width="20" height="20" viewBox="0 0 20 20"><path d="M1,1 L18,1 L19,19 L1,19Z" fill="#fff" stroke="#c4c4c4"/><path d="M18,1 L19.5,2 L19.5,19.5 L1.5,19.5 L1,19" fill="none" stroke="#8e5bbd" stroke-width="1.4"/><rect x="5" y="5" width="3" height="3" fill="#7b3fb8"/><rect x="12" y="5" width="3" height="3" fill="#7b3fb8"/><rect x="5" y="12" width="3" height="3" fill="#7b3fb8"/><rect x="12" y="12" width="3" height="3" fill="#7b3fb8"/></svg><div style="position:absolute;left:17px;top:406px;width:11px;height:12px;background:#fdfdfd"></div><svg style="position:absolute;left:19px;top:407.5px;" width="6" height="9" viewBox="0 0 6 9"><path d="M0.5,0 L5.5,4.5 L0.5,9Z" fill="#666"/></svg><svg style="position:absolute;left:38px;top:404px;" width="18" height="17" viewBox="0 0 18 17"><path d="M1,5 L5,1 L17,1 L17,12 L13,16 L1,16Z" fill="#a6dcf3" stroke="#2a8fc4"/><path d="M13,5 L17,1 L17,12 L13,16Z" fill="#4aa6d2"/><path d="M1,5 L5,1 L17,1 L13,5Z" fill="#cdeffb"/></svg><svg style="position:absolute;left:63px;top:404px;" width="7" height="10" viewBox="0 0 7 10"><rect x="0.7" y="0.7" width="5.6" height="8.6" fill="#fff" stroke="#444" stroke-width="1.1"/><circle cx="3.5" cy="5" r="0.9" fill="#444"/></svg><div style="position:absolute;left:17px;top:428px;width:11px;height:12px;background:#fdfdfd"></div><svg style="position:absolute;left:19px;top:429.5px;" width="6" height="9" viewBox="0 0 6 9"><path d="M0.5,0 L5.5,4.5 L0.5,9Z" fill="#666"/></svg><svg style="position:absolute;left:38px;top:425px;" width="19" height="19" viewBox="0 0 19 19"><path d="M1,5 L4,2 L18,2 L18,16 L15,19 L1,19Z" fill="#f8e2ac" stroke="#c9a25a"/><path d="M15,5 L18,2 L18,16 L15,19Z" fill="#d9b874"/><path d="M6,5 L9,2 L18,2 L18,11 L15,14 L6,14Z" fill="#a6dcf3" stroke="#2a8fc4"/><path d="M15,5 L18,2 L18,11 L15,14Z" fill="#4aa6d2"/><path d="M6,5 L9,2 L18,2 L15,5Z" fill="#d5f1fb"/></svg><svg style="position:absolute;left:63px;top:426px;" width="7" height="10" viewBox="0 0 7 10"><rect x="0.7" y="0.7" width="5.6" height="8.6" fill="#fff" stroke="#444" stroke-width="1.1"/><circle cx="3.5" cy="5" r="0.9" fill="#444"/></svg><div style="position:absolute;left:17px;top:450px;width:11px;height:12px;background:#fdfdfd"></div><svg style="position:absolute;left:19px;top:451.5px;" width="6" height="9" viewBox="0 0 6 9"><path d="M0.5,0 L5.5,4.5 L0.5,9Z" fill="#666"/></svg><svg style="position:absolute;left:38px;top:447px;" width="19" height="19" viewBox="0 0 19 19"><path d="M1,5 L4,2 L18,2 L18,16 L15,19 L1,19Z" fill="#f8e2ac" stroke="#c9a25a"/><path d="M15,5 L18,2 L18,16 L15,19Z" fill="#d9b874"/><path d="M6,5 L9,2 L18,2 L18,11 L15,14 L6,14Z" fill="#a6dcf3" stroke="#2a8fc4"/><path d="M15,5 L18,2 L18,11 L15,14Z" fill="#4aa6d2"/><path d="M6,5 L9,2 L18,2 L15,5Z" fill="#d5f1fb"/></svg><svg style="position:absolute;left:63px;top:448px;" width="7" height="10" viewBox="0 0 7 10"><rect x="0.7" y="0.7" width="5.6" height="8.6" fill="#fff" stroke="#444" stroke-width="1.1"/><circle cx="3.5" cy="5" r="0.9" fill="#444"/></svg><div style="position:absolute;left:17px;top:472px;width:11px;height:12px;background:#fdfdfd"></div><svg style="position:absolute;left:17.5px;top:475px;" width="10" height="6" viewBox="0 0 10 6"><path d="M0,0.5 L9,0.5 L4.5,5.5Z" fill="#666"/></svg><svg style="position:absolute;left:38px;top:469px;" width="19" height="19" viewBox="0 0 19 19"><path d="M1,5 L4,2 L18,2 L18,16 L15,19 L1,19Z" fill="#f8e2ac" stroke="#c9a25a"/><path d="M15,5 L18,2 L18,16 L15,19Z" fill="#d9b874"/><path d="M6,5 L9,2 L18,2 L18,11 L15,14 L6,14Z" fill="#a6dcf3" stroke="#2a8fc4"/><path d="M15,5 L18,2 L18,11 L15,14Z" fill="#4aa6d2"/><path d="M6,5 L9,2 L18,2 L15,5Z" fill="#d5f1fb"/></svg><svg style="position:absolute;left:63px;top:470px;" width="7" height="10" viewBox="0 0 7 10"><rect x="0.7" y="0.7" width="5.6" height="8.6" fill="#fff" stroke="#444" stroke-width="1.1"/><circle cx="3.5" cy="5" r="0.9" fill="#444"/></svg><svg style="position:absolute;left:61px;top:493px;" width="20" height="14" viewBox="0 0 20 14"><path d="M2,12 L6,2 L18,2 L14,12Z" fill="none" stroke="#8a6a2a" stroke-width="2"/></svg><svg style="position:absolute;left:61px;top:515px;" width="20" height="14" viewBox="0 0 20 14"><path d="M2,12 L6,2 L18,2 L14,12Z" fill="none" stroke="#8a6a2a" stroke-width="2"/></svg><svg style="position:absolute;left:61px;top:537px;" width="20" height="14" viewBox="0 0 20 14"><path d="M2,12 L6,2 L18,2 L14,12Z" fill="none" stroke="#8a6a2a" stroke-width="2"/></svg><svg style="position:absolute;left:61px;top:556px;" width="20" height="20" viewBox="0 0 20 20"><path d="M7,2 L7,13 L18,13 M7,13 L1,19" fill="none" stroke="#b5b0a8" stroke-width="1.4"/><circle cx="7" cy="2" r="1.3" fill="#b5b0a8"/><circle cx="18" cy="13" r="1.3" fill="#b5b0a8"/><circle cx="1.5" cy="18.5" r="1.3" fill="#b5b0a8"/></svg><div style="position:absolute;left:42px;top:582px;width:11px;height:12px;background:#fdfdfd"></div><svg style="position:absolute;left:44px;top:583.5px;" width="6" height="9" viewBox="0 0 6 9"><path d="M0.5,0 L5.5,4.5 L0.5,9Z" fill="#666"/></svg><svg style="position:absolute;left:63px;top:580px;" width="18" height="17" viewBox="0 0 18 17"><path d="M1,5 L5,1 L17,1 L17,12 L13,16 L1,16Z" fill="#a6dcf3" stroke="#2a8fc4"/><path d="M13,5 L17,1 L17,12 L13,16Z" fill="#4aa6d2"/><path d="M1,5 L5,1 L17,1 L13,5Z" fill="#cdeffb"/></svg><div style="position:absolute;left:42px;top:604px;width:11px;height:12px;background:#fdfdfd"></div><svg style="position:absolute;left:42.5px;top:607px;" width="10" height="6" viewBox="0 0 10 6"><path d="M0,0.5 L9,0.5 L4.5,5.5Z" fill="#666"/></svg><svg style="position:absolute;left:63px;top:602px;" width="18" height="17" viewBox="0 0 18 17"><path d="M1,5 L5,1 L17,1 L17,12 L13,16 L1,16Z" fill="#a6dcf3" stroke="#2a8fc4"/><path d="M13,5 L17,1 L17,12 L13,16Z" fill="#4aa6d2"/><path d="M1,5 L5,1 L17,1 L13,5Z" fill="#cdeffb"/></svg><div style="position:absolute;left:67px;top:626px;width:11px;height:12px;background:#fdfdfd"></div><svg style="position:absolute;left:67.5px;top:629px;" width="10" height="6" viewBox="0 0 10 6"><path d="M0,0.5 L9,0.5 L4.5,5.5Z" fill="#666"/></svg><svg style="position:absolute;left:88px;top:622px;" width="18" height="20" viewBox="0 0 18 20"><rect x="1" y="1" width="16" height="18" fill="#fff" stroke="#aaa"/><rect x="1" y="1" width="16" height="1.5" fill="#2a95c8"/><rect x="3" y="4" width="3" height="3" fill="#fff" stroke="#2a95c8"/><rect x="3" y="9" width="3" height="3" fill="#fff" stroke="#2a95c8"/><rect x="3" y="14" width="3" height="3" fill="#fff" stroke="#2a95c8"/><path d="M8,5 h7 M8,8 h5 M8,11 h7 M8,14 h5 M8,17 h6" stroke="#bbb"/></svg><div style="position:absolute;left:92px;top:648px;width:11px;height:12px;background:#fdfdfd"></div><svg style="position:absolute;left:92.5px;top:651px;" width="10" height="6" viewBox="0 0 10 6"><path d="M0,0.5 L9,0.5 L4.5,5.5Z" fill="#666"/></svg><svg style="position:absolute;left:112px;top:644px;" width="21" height="21" viewBox="0 0 21 21"><path d="M1,4 L4,1 L14,1 L14,12 L11,15 L1,15Z" fill="#fff" stroke="#2a8fc4"/><path d="M6,9 L9,6 L19,6 L19,17 L16,20 L6,20Z" fill="#fff" stroke="#2a8fc4"/><path d="M16,9 L19,6 L19,17 L16,20Z" fill="#5eb2dc"/><path d="M6,9 L9,6 L19,6 L16,9Z" fill="#cdeffb"/></svg><svg style="position:absolute;left:137px;top:666px;" width="19" height="20" viewBox="0 0 19 20"><path d="M2,6 L6,2 L18,2 L18,15 L14,19 L2,19Z" fill="#fff" stroke="#2a8fc4"/><path d="M14,6 L18,2 L18,15 L14,19Z" fill="#7cc2e2"/><path d="M6,0.5 L7.6,4.5 L11.8,4.6 L8.5,7.2 L9.8,11.3 L6,9 L2.2,11.3 L3.5,7.2 L0.2,4.6 L4.4,4.5Z" fill="#2a95c8"/></svg><svg style="position:absolute;left:87px;top:691px;" width="20" height="14" viewBox="0 0 20 14"><path d="M2,12 L6,2 L18,2 L14,12Z" fill="none" stroke="#b9b4ac" stroke-width="2"/></svg><svg style="position:absolute;left:87px;top:713px;" width="20" height="14" viewBox="0 0 20 14"><path d="M2,12 L6,2 L18,2 L14,12Z" fill="none" stroke="#b9b4ac" stroke-width="2"/></svg><svg style="position:absolute;left:87px;top:735px;" width="20" height="14" viewBox="0 0 20 14"><path d="M2,12 L6,2 L18,2 L14,12Z" fill="none" stroke="#b9b4ac" stroke-width="2"/></svg><svg style="position:absolute;left:87px;top:754px;" width="20" height="20" viewBox="0 0 20 20"><path d="M7,2 L7,13 L18,13 M7,13 L1,19" fill="none" stroke="#b5b0a8" stroke-width="1.4"/><circle cx="7" cy="2" r="1.3" fill="#b5b0a8"/><circle cx="18" cy="13" r="1.3" fill="#b5b0a8"/><circle cx="1.5" cy="18.5" r="1.3" fill="#b5b0a8"/></svg><div style="position:absolute;left:67px;top:780px;width:11px;height:12px;background:#fdfdfd"></div><svg style="position:absolute;left:69px;top:781.5px;" width="6" height="9" viewBox="0 0 6 9"><path d="M0.5,0 L5.5,4.5 L0.5,9Z" fill="#666"/></svg><svg style="position:absolute;left:87px;top:776px;" width="19" height="20" viewBox="0 0 19 20"><path d="M1,6 L6,1 L18,1 L18,13 L13,18 L1,18Z" fill="#a6dcf3" stroke="#888"/><rect x="1" y="7" width="12" height="11" fill="#f1f1f1" stroke="#999"/><path d="M13,7 L18,1 L18,13 L13,18Z" fill="#4aa6d2"/></svg><div style="position:absolute;left:42px;top:820px;width:11px;height:12px;background:#fdfdfd"></div><svg style="position:absolute;left:44px;top:821.5px;" width="6" height="9" viewBox="0 0 6 9"><path d="M0.5,0 L5.5,4.5 L0.5,9Z" fill="#666"/></svg><svg style="position:absolute;left:63px;top:818px;" width="18" height="17" viewBox="0 0 18 17"><path d="M1,5 L5,1 L17,1 L17,12 L13,16 L1,16Z" fill="#a6dcf3" stroke="#2a8fc4"/><path d="M13,5 L17,1 L17,12 L13,16Z" fill="#4aa6d2"/><path d="M1,5 L5,1 L17,1 L13,5Z" fill="#cdeffb"/></svg><div style="position:absolute;left:42px;top:842px;width:11px;height:12px;background:#fdfdfd"></div><svg style="position:absolute;left:44px;top:843.5px;" width="6" height="9" viewBox="0 0 6 9"><path d="M0.5,0 L5.5,4.5 L0.5,9Z" fill="#666"/></svg><svg style="position:absolute;left:63px;top:840px;" width="18" height="17" viewBox="0 0 18 17"><path d="M1,5 L5,1 L17,1 L17,12 L13,16 L1,16Z" fill="#a6dcf3" stroke="#2a8fc4"/><path d="M13,5 L17,1 L17,12 L13,16Z" fill="#4aa6d2"/><path d="M1,5 L5,1 L17,1 L13,5Z" fill="#cdeffb"/></svg><div style="position:absolute;left:42px;top:864px;width:11px;height:12px;background:#fdfdfd"></div><svg style="position:absolute;left:44px;top:865.5px;" width="6" height="9" viewBox="0 0 6 9"><path d="M0.5,0 L5.5,4.5 L0.5,9Z" fill="#666"/></svg><svg style="position:absolute;left:63px;top:862px;" width="18" height="17" viewBox="0 0 18 17"><path d="M1,5 L5,1 L17,1 L17,12 L13,16 L1,16Z" fill="#a6dcf3" stroke="#2a8fc4"/><path d="M13,5 L17,1 L17,12 L13,16Z" fill="#4aa6d2"/><path d="M1,5 L5,1 L17,1 L13,5Z" fill="#cdeffb"/></svg><svg style="position:absolute;left:66px;top:882px;" width="12" height="20" viewBox="0 0 12 20"><path d="M10,1 L2,19" stroke="#8a6a2a" stroke-width="2" stroke-dasharray="4,2.5"/></svg><div style="position:absolute;left:17px;top:926px;width:11px;height:12px;background:#fdfdfd"></div><svg style="position:absolute;left:19px;top:927.5px;" width="6" height="9" viewBox="0 0 6 9"><path d="M0.5,0 L5.5,4.5 L0.5,9Z" fill="#666"/></svg><svg style="position:absolute;left:38px;top:923px;" width="19" height="19" viewBox="0 0 19 19"><path d="M1,5 L4,2 L18,2 L18,16 L15,19 L1,19Z" fill="#f8e2ac" stroke="#c9a25a"/><path d="M15,5 L18,2 L18,16 L15,19Z" fill="#d9b874"/><path d="M6,5 L9,2 L18,2 L18,11 L15,14 L6,14Z" fill="#a6dcf3" stroke="#2a8fc4"/><path d="M15,5 L18,2 L18,11 L15,14Z" fill="#4aa6d2"/><path d="M6,5 L9,2 L18,2 L15,5Z" fill="#d5f1fb"/></svg><svg style="position:absolute;left:63px;top:924px;" width="7" height="10" viewBox="0 0 7 10"><rect x="0.7" y="0.7" width="5.6" height="8.6" fill="#fff" stroke="#444" stroke-width="1.1"/><circle cx="3.5" cy="5" r="0.9" fill="#444"/></svg><div style="position:absolute;left:17px;top:948px;width:11px;height:12px;background:#fdfdfd"></div><svg style="position:absolute;left:19px;top:949.5px;" width="6" height="9" viewBox="0 0 6 9"><path d="M0.5,0 L5.5,4.5 L0.5,9Z" fill="#666"/></svg><svg style="position:absolute;left:38px;top:945px;" width="19" height="19" viewBox="0 0 19 19"><path d="M1,5 L4,2 L18,2 L18,16 L15,19 L1,19Z" fill="#f8e2ac" stroke="#c9a25a"/><path d="M15,5 L18,2 L18,16 L15,19Z" fill="#d9b874"/><path d="M6,5 L9,2 L18,2 L18,11 L15,14 L6,14Z" fill="#a6dcf3" stroke="#2a8fc4"/><path d="M15,5 L18,2 L18,11 L15,14Z" fill="#4aa6d2"/><path d="M6,5 L9,2 L18,2 L15,5Z" fill="#d5f1fb"/></svg><svg style="position:absolute;left:63px;top:946px;" width="7" height="10" viewBox="0 0 7 10"><rect x="0.7" y="0.7" width="5.6" height="8.6" fill="#fff" stroke="#444" stroke-width="1.1"/><circle cx="3.5" cy="5" r="0.9" fill="#444"/></svg><div style="position:absolute;left:17px;top:970px;width:11px;height:12px;background:#fdfdfd"></div><svg style="position:absolute;left:19px;top:971.5px;" width="6" height="9" viewBox="0 0 6 9"><path d="M0.5,0 L5.5,4.5 L0.5,9Z" fill="#666"/></svg><svg style="position:absolute;left:38px;top:967px;" width="19" height="19" viewBox="0 0 19 19"><path d="M1,5 L4,2 L18,2 L18,16 L15,19 L1,19Z" fill="#f8e2ac" stroke="#c9a25a"/><path d="M15,5 L18,2 L18,16 L15,19Z" fill="#d9b874"/><path d="M6,5 L9,2 L18,2 L18,11 L15,14 L6,14Z" fill="#a6dcf3" stroke="#2a8fc4"/><path d="M15,5 L18,2 L18,11 L15,14Z" fill="#4aa6d2"/><path d="M6,5 L9,2 L18,2 L15,5Z" fill="#d5f1fb"/></svg><svg style="position:absolute;left:63px;top:968px;" width="7" height="10" viewBox="0 0 7 10"><rect x="0.7" y="0.7" width="5.6" height="8.6" fill="#fff" stroke="#444" stroke-width="1.1"/><circle cx="3.5" cy="5" r="0.9" fill="#444"/></svg><div style="position:absolute;left:17px;top:992px;width:11px;height:12px;background:#fdfdfd"></div><svg style="position:absolute;left:19px;top:993.5px;" width="6" height="9" viewBox="0 0 6 9"><path d="M0.5,0 L5.5,4.5 L0.5,9Z" fill="#666"/></svg><svg style="position:absolute;left:38px;top:989px;" width="19" height="19" viewBox="0 0 19 19"><path d="M1,5 L4,2 L18,2 L18,16 L15,19 L1,19Z" fill="#f8e2ac" stroke="#c9a25a"/><path d="M15,5 L18,2 L18,16 L15,19Z" fill="#d9b874"/><path d="M6,5 L9,2 L18,2 L18,11 L15,14 L6,14Z" fill="#a6dcf3" stroke="#2a8fc4"/><path d="M15,5 L18,2 L18,11 L15,14Z" fill="#4aa6d2"/><path d="M6,5 L9,2 L18,2 L15,5Z" fill="#d5f1fb"/></svg><svg style="position:absolute;left:63px;top:990px;" width="7" height="10" viewBox="0 0 7 10"><rect x="0.7" y="0.7" width="5.6" height="8.6" fill="#fff" stroke="#444" stroke-width="1.1"/><circle cx="3.5" cy="5" r="0.9" fill="#444"/></svg><div style="position:absolute;left:162px;top:665px;width:43px;height:21px;background:#b3e0f7"></div><div style="position:absolute;left:62px;top:805px;width:334px;height:1.6px;background:#5aa0c2"></div><div style="position:absolute;left:62px;top:801px;width:1px;height:10px;background:#5aa0c2"></div><div style="position:absolute;left:38px;top:911px;width:358px;height:1.6px;background:#5aa0c2"></div><div style="position:absolute;left:38px;top:907px;width:1px;height:10px;background:#5aa0c2"></div><div style="position:absolute;left:10px;top:317px;width:386px;height:26px;background:#f7f7f7"></div><div style="position:absolute;left:10px;top:342px;width:386px;height:1px;background:#d5d9dc"></div><div style="position:absolute;left:318px;top:317px;width:1px;height:26px;background:#e3e6e8"></div><div style="position:absolute;left:912px;top:212px;width:518px;height:38px;background:#fff;border:1px solid #a9bcbf;box-sizing:border-box"></div><svg style="position:absolute;left:920px;top:220px;" width="22" height="22" viewBox="0 0 22 22"><rect x="1" y="1" width="17" height="17" fill="#f5f5f5" stroke="#b8b8b8" stroke-width="1.2"/><circle cx="9" cy="9" r="5.5" fill="#e8f6fc" stroke="#2a85b8" stroke-width="1.6"/><path d="M13,13 L19,19" stroke="#888" stroke-width="3"/></svg><svg style="position:absolute;left:952px;top:220px;" width="22" height="22" viewBox="0 0 22 22"><circle cx="8" cy="8" r="6.5" fill="#fff" stroke="#2a85b8" stroke-width="1.8"/><path d="M8,4.5 V11.5 M4.5,8 H11.5" stroke="#1a6a9a" stroke-width="2.2"/><path d="M13,13 L19,19" stroke="#999" stroke-width="3"/></svg><svg style="position:absolute;left:984px;top:220px;" width="22" height="22" viewBox="0 0 22 22"><circle cx="8" cy="8" r="6.5" fill="#fff" stroke="#2a85b8" stroke-width="1.8"/><path d="M4.5,8 H11.5" stroke="#1a6a9a" stroke-width="2.2"/><path d="M13,13 L19,19" stroke="#999" stroke-width="3"/></svg><svg style="position:absolute;left:1017px;top:220px;" width="21" height="22" viewBox="0 0 21 22"><rect x="1" y="1" width="19" height="19" fill="#d7eef8" stroke="#999" stroke-width="1.2"/><path d="M1,1 H20 V20 Q12,5 1,3Z" fill="#fff"/><path d="M5,19 Q9,15 18,6" stroke="#1a6a9a" stroke-width="2"/><path d="M10,20 L20,9 L20,20Z" fill="#7cbcdc"/></svg><svg style="position:absolute;left:1048px;top:220px;" width="26" height="24" viewBox="0 0 26 24"><defs><radialGradient id="vs1" cx="0.35" cy="0.35" r="0.7"><stop offset="0" stop-color="#fff"/><stop offset="1" stop-color="#9a9a9a"/></radialGradient></defs><path d="M10,4 L16,1 L22,1 L22,13 L16,17 L10,17Z" fill="#cfcfcf"/><circle cx="8" cy="14" r="6.5" fill="url(#vs1)"/></svg><svg style="position:absolute;left:1067px;top:238px;" width="5" height="5" viewBox="0 0 5 5"><path d="M5,0 L5,5 L0,5Z" fill="#555"/></svg><svg style="position:absolute;left:1081px;top:220px;" width="24" height="22" viewBox="0 0 24 22"><path d="M1,5 L5,1 L21,1 L17,5Z" fill="#d8f0fa" stroke="#6fc0e2"/><rect x="1" y="5" width="16" height="15" fill="#fff" stroke="#6fc0e2" stroke-width="1.2"/><path d="M17,5 L21,1 L21,16 L17,20Z" fill="#8fcbe6" stroke="#6fc0e2"/></svg><svg style="position:absolute;left:1099px;top:238px;" width="5" height="5" viewBox="0 0 5 5"><path d="M5,0 L5,5 L0,5Z" fill="#555"/></svg><svg style="position:absolute;left:1113px;top:220px;" width="24" height="22" viewBox="0 0 24 22"><path d="M1,7 L8,1 L18,3 L11,9Z" fill="#d8f0fa" stroke="#3a9cc9"/><path d="M1,7 L11,9 L11,20 L3,15Z" fill="#e9f7fc" stroke="#3a9cc9"/><path d="M11,9 L18,3 L20,13 L11,20Z" fill="#6cb5d9" stroke="#3a9cc9"/><rect x="13" y="12" width="6" height="8" fill="#fff" stroke="#777"/></svg><svg style="position:absolute;left:1131px;top:238px;" width="5" height="5" viewBox="0 0 5 5"><path d="M5,0 L5,5 L0,5Z" fill="#555"/></svg><svg style="position:absolute;left:1144px;top:220px;" width="24" height="22" viewBox="0 0 24 22"><rect x="1" y="1" width="17" height="17" fill="#f4f9fc" stroke="#aaa"/><path d="M1,6 H18 M1,10 H18 M1,14 H18 M5,1 V18" stroke="#aaa"/><rect x="10" y="12" width="13" height="9" rx="1" fill="#444"/><circle cx="16.5" cy="16.5" r="3" fill="#222" stroke="#999"/></svg><svg style="position:absolute;left:1176px;top:220px;" width="22" height="22" viewBox="0 0 22 22"><path d="M1,6 L4,1 L20,1 L18,7Z" fill="#d8f0fa" stroke="#5aa6cc"/><path d="M1,6 L18,7 L17,21 L4,17Z" fill="#c9e8f4" stroke="#5aa6cc"/><path d="M18,7 L20,1 L20,15 L17,21Z" fill="#9fd0e6" stroke="#5aa6cc"/><path d="M4,15 L16,19 M6,12 L17,15" stroke="#e9f7fc" stroke-width="2"/></svg><svg style="position:absolute;left:1208px;top:220px;" width="24" height="22" viewBox="0 0 24 22"><path d="M1,5 L5,1 L19,1 L19,17 L15,21 L1,21Z" fill="#e9f7fc" stroke="#8fcbe6"/><path d="M15,5 L19,1 L19,17 L15,21Z" fill="#f0f0f0" stroke="#ccc" stroke-dasharray="1,1"/><path d="M1,21 L19,1" stroke="#1a6a9a" stroke-width="2"/></svg><svg style="position:absolute;left:1229px;top:238px;" width="5" height="5" viewBox="0 0 5 5"><path d="M5,0 L5,5 L0,5Z" fill="#555"/></svg><svg style="position:absolute;left:1240px;top:220px;" width="24" height="22" viewBox="0 0 24 22"><path d="M1,1 L6,6 M6,1 L1,6" stroke="#8a6a2a" stroke-width="1.6"/><path d="M13,1 L11,6 M10,9 L8,14 M6,17 L4,21" stroke="#8a6a2a" stroke-width="2"/><path d="M13,9 L13,17 L20,17 M13,17 L9,20" fill="none" stroke="#8a6a2a" stroke-width="1.6"/><path d="M11,10 L13,7 L15,10Z M19,15 L22,17 L19,19Z" fill="#8a6a2a"/></svg><svg style="position:absolute;left:1261px;top:238px;" width="5" height="5" viewBox="0 0 5 5"><path d="M5,0 L5,5 L0,5Z" fill="#555"/></svg><div style="position:absolute;left:1269px;top:217px;width:30px;height:29px;background:#e1e3e5;border:1px solid #b5b8bb;box-sizing:border-box"></div><svg style="position:absolute;left:1272px;top:220px;" width="24" height="24" viewBox="0 0 24 24"><rect x="1.5" y="1.5" width="11" height="8" fill="#fdf6dc" stroke="#888"/><path d="M12,5 H20 V12 M17,9 L20,12 L23,9" fill="none" stroke="#333" stroke-width="1.8"/><ellipse cx="17" cy="19" rx="6" ry="3.6" fill="#333"/><circle cx="17" cy="19" r="1.6" fill="#ddd"/></svg><div style="position:absolute;left:1301px;top:217px;width:29px;height:29px;background:#e1e3e5;border:1px solid #b5b8bb;box-sizing:border-box"></div><svg style="position:absolute;left:1304px;top:220px;" width="24" height="24" viewBox="0 0 24 24"><path d="M4,4 L11,11 L20,9 M11,11 L4,19" stroke="#444" stroke-width="1.6" fill="none"/><circle cx="4" cy="4" r="3" fill="#5fb35f"/><circle cx="20" cy="9" r="3" fill="#e05a5a"/><circle cx="4" cy="19" r="3" fill="#2a85b8"/></svg><svg style="position:absolute;left:1336px;top:220px;" width="22" height="22" viewBox="0 0 22 22"><path d="M10,2 L19,18 L1,18Z" fill="none" stroke="#c4c4c4" stroke-width="3"/><circle cx="16" cy="17" r="4" fill="#ededed" stroke="#c8c8c8"/><path d="M14.5,15 L18,17 L14.5,19Z" fill="#c4c4c4"/></svg><svg style="position:absolute;left:1371px;top:222px;" width="16" height="17" viewBox="0 0 16 17"><rect x="1" y="1" width="4.5" height="15" fill="#bdbdbd"/><rect x="10" y="1" width="4.5" height="15" fill="#bdbdbd"/></svg><svg style="position:absolute;left:1401px;top:222px;" width="21" height="17" viewBox="0 0 21 17"><path d="M1,1 H20 V15 H4 Q10,11 7,7 Q5,4 1,4Z" fill="#d0d0d0"/></svg><div style="position:absolute;left:7px;top:1045px;width:26px;height:30px;background:#e6e8ea;border:1px solid #b8bec2;box-sizing:border-box"></div><svg style="position:absolute;left:9px;top:1049px;" width="22" height="22" viewBox="0 0 22 22"><rect x="1" y="1" width="19" height="18" fill="#fff" stroke="#999"/><rect x="1" y="1" width="19" height="3" fill="#bbb"/><rect x="2" y="6" width="5" height="13" fill="#8fd3f3" stroke="#2a7aa8"/><ellipse cx="15" cy="17" rx="5" ry="3" fill="#444"/><circle cx="15" cy="17" r="1.3" fill="#ddd"/></svg><svg style="position:absolute;left:39px;top:1049px;" width="22" height="21" viewBox="0 0 22 21"><defs><radialGradient id="gl" cx="0.4" cy="0.4" r="0.7"><stop offset="0" stop-color="#bfe6fb"/><stop offset="1" stop-color="#1f7fc0"/></radialGradient></defs><circle cx="11" cy="10" r="8" fill="url(#gl)"/><ellipse cx="11" cy="10" rx="11" ry="4.5" fill="none" stroke="#555" stroke-width="1.4" transform="rotate(-35 11 10)"/></svg><div style="position:absolute;left:70px;top:1050px;width:20px;height:20px;background:#eef2f4;border:1.5px solid #2a7aa8;box-sizing:border-box;border-radius:2px"></div><div style="position:absolute;left:103px;top:1045px;width:1px;height:30px;background:#c8cdd0"></div><svg style="position:absolute;left:110px;top:1049px;" width="8" height="8" viewBox="0 0 8 8"><circle cx="4" cy="4" r="3.2" fill="#1f5f86"/></svg><div style="position:absolute;left:1450px;top:1039px;width:1px;height:38px;background:#d0d3d5"></div><div style="position:absolute;left:1455px;top:1039px;width:1px;height:38px;background:#d0d3d5"></div><div style="position:absolute;left:1458px;top:1040px;width:51px;height:35px;background:#fff;border:1px solid #c8ccce;box-sizing:border-box"></div><div style="position:absolute;left:1491px;top:1041px;width:1px;height:33px;background:#d6d9db"></div><svg style="position:absolute;left:1464px;top:1045px;" width="24" height="22" viewBox="0 0 24 22"><defs><linearGradient id="bn" x1="0" y1="0" x2="1" y2="0"><stop offset="0" stop-color="#222"/><stop offset="0.5" stop-color="#888"/><stop offset="1" stop-color="#222"/></linearGradient></defs><rect x="2" y="4" width="8" height="17" rx="2" fill="url(#bn)"/><rect x="14" y="4" width="8" height="17" rx="2" fill="url(#bn)"/><rect x="3" y="1" width="6" height="5" fill="#333"/><rect x="15" y="1" width="6" height="5" fill="#333"/><rect x="9" y="8" width="6" height="6" fill="#444"/></svg><svg style="position:absolute;left:1495.5px;top:1051.5px;" width="9" height="5" viewBox="0 0 9 5"><path d="M0,0 L9,0 L4.5,5Z" fill="#555"/></svg><div style="position:absolute;left:1460px;top:1039px;width:1px;height:38px;background:#d0d3d5"></div><div style="position:absolute;left:1514px;top:1040px;width:49px;height:36px;background:#fff;border:1px solid #c8ccce;box-sizing:border-box"></div><svg style="position:absolute;left:1526px;top:1045px;" width="24" height="25" viewBox="0 0 24 25"><path d="M1,5 L5,1 L22,1 L22,18 L18,22 L1,22Z" fill="#f4f4f4" stroke="#555" stroke-width="1.6"/><path d="M18,5 L22,1 L22,18 L18,22Z" fill="#ddd" stroke="#555" stroke-width="1.2"/><rect x="5" y="9" width="10" height="10" fill="#f8e2ac" stroke="#c9a25a"/><rect x="8" y="6" width="9" height="9" fill="#8fd3f3" stroke="#2a7aa8"/></svg><div style="position:absolute;left:1682px;top:1043px;width:217px;height:28px;background:#fafafa;border:1px solid #bfc4c6;box-sizing:border-box"></div><div style="position:absolute;left:1879px;top:1044px;width:1px;height:26px;background:#c8ccce"></div><svg style="position:absolute;left:1884.0px;top:1054.0px;" width="10" height="6" viewBox="0 0 10 6"><path d="M0,0 L10,0 L5.0,6Z" fill="#555"/></svg><div class="t" style="left:63.3px;top:336px;font-size:11.6px;color:#333;">Pattern 1 of ADTMT</div><div class="t" style="left:63.3px;top:358px;font-size:11.6px;color:#333;">CRANKSHAFT</div><div class="t" style="left:63.3px;top:380px;font-size:11.6px;color:#333;">Pattern 2 of AA_1</div><div class="t" style="left:72.3px;top:402px;font-size:11.6px;color:#333;">CRANKSHAFT.PRT</div><div class="t" style="left:72.3px;top:424px;font-size:11.6px;color:#333;">PISTON_ASSEMBLY.ASM</div><div class="t" style="left:72.3px;top:446px;font-size:11.6px;color:#333;">PISTON_ASSEMBLY.ASM</div><div class="t" style="left:72.3px;top:468px;font-size:11.6px;color:#333;">PISTON_ASSEMBLY.ASM</div><div class="t" style="left:88.3px;top:490px;font-size:11.6px;color:#333;">ASM_RIGHT</div><div class="t" style="left:88.3px;top:512px;font-size:11.6px;color:#333;">ASM_TOP</div><div class="t" style="left:88.3px;top:534px;font-size:11.6px;color:#333;">ASM_FRONT</div><div class="t" style="left:88.3px;top:556px;font-size:11.6px;color:#b8ae98;">ASM_DEF_CSYS</div><div class="t" style="left:88.3px;top:578px;font-size:11.6px;color:#333;">PISTON.PRT</div><div class="t" style="left:88.3px;top:600px;font-size:11.6px;color:#333;">PISTON_PIN.PRT</div><div class="t" style="left:113.3px;top:622px;font-size:11.6px;color:#333;">Design Items</div><div class="t" style="left:138.3px;top:644px;font-size:11.6px;color:#333;">Bodies (1)</div><div class="t" style="left:163.3px;top:666px;font-size:11.6px;color:#1a1a1a;">Body 1</div><div class="t" style="left:113.3px;top:688px;font-size:11.6px;color:#b8ae98;">RIGHT</div><div class="t" style="left:113.3px;top:710px;font-size:11.6px;color:#b8ae98;">TOP</div><div class="t" style="left:113.3px;top:732px;font-size:11.6px;color:#b8ae98;">FRONT</div><div class="t" style="left:113.3px;top:754px;font-size:11.6px;color:#b8ae98;">PRT_CSYS_DEF</div><div class="t" style="left:113.3px;top:776px;font-size:11.6px;color:#333;">Extrude 1</div><div class="t" style="left:88.3px;top:816px;font-size:11.6px;color:#333;">RING_TOP.PRT</div><div class="t" style="left:88.3px;top:838px;font-size:11.6px;color:#333;">RING_BOTTOM.PRT</div><div class="t" style="left:88.3px;top:860px;font-size:11.6px;color:#333;">RING_OIL.PRT</div><div class="t" style="left:88.3px;top:882px;font-size:11.6px;color:#333;">PISTON</div><div class="t" style="left:72.3px;top:922px;font-size:11.6px;color:#333;">PISTON_ASSEMBLY.ASM</div><div class="t" style="left:72.3px;top:944px;font-size:11.6px;color:#333;">PISTON_ASSEMBLY.ASM</div><div class="t" style="left:72.3px;top:966px;font-size:11.6px;color:#333;">PISTON_ASSEMBLY.ASM</div><div class="t" style="left:72.3px;top:988px;font-size:11.6px;color:#333;">CONNECTING_ROD_ASSEMBLY.ASM</div><div class="t" style="left:1568px;top:1047px;font-size:14.5px;color:#333;">1 selected</div><div class="t" style="left:123px;top:1043px;font-size:13.2px;color:#333;">Datum planes will not be displayed.</div><div class="t" style="left:1690px;top:1047px;font-size:14.5px;color:#333;">Geometry</div><div style="position:absolute;left:10px;top:317px;width:386px;height:26px;background:#f7f7f7"></div><div style="position:absolute;left:10px;top:342px;width:386px;height:1px;background:#d5d9dc"></div><div style="position:absolute;left:318px;top:317px;width:1px;height:26px;background:#e3e6e8"></div><svg style="position:absolute;left:326px;top:323px;" width="17" height="19" viewBox="0 0 17 19"><rect x="2.5" y="2.5" width="12" height="14" fill="#cfeff9" stroke="#d9b46a" stroke-width="2.4"/><circle cx="2.5" cy="2.5" r="2" fill="#f6dfa6" stroke="#c9a25a" stroke-width="0.8"/><circle cx="14.5" cy="2.5" r="2" fill="#f6dfa6" stroke="#c9a25a" stroke-width="0.8"/><circle cx="2.5" cy="16.5" r="2" fill="#f6dfa6" stroke="#c9a25a" stroke-width="0.8"/><circle cx="14.5" cy="16.5" r="2" fill="#f6dfa6" stroke="#c9a25a" stroke-width="0.8"/></svg><div style="position:absolute;left:343px;top:317px;width:68px;height:26px;overflow:hidden"><div class="t" style="left:1px;top:5px;font-size:14px;color:#333">Master Re</div></div><div style="position:absolute;left:10px;top:237px;width:402px;height:6px;background:#fdfdfd"></div><svg style="position:absolute;left:0;top:0" width="1920" height="1080"><defs><linearGradient id="flF" x1="0" y1="0" x2="1" y2="1"><stop offset="0" stop-color="#a2adba"/><stop offset="0.6" stop-color="#96a1ae"/><stop offset="1" stop-color="#8a95a2"/></linearGradient><radialGradient id="flH" cx="0.7" cy="0.4" r="0.7"><stop offset="0" stop-color="#b9c3ce"/><stop offset="0.5" stop-color="#8f9aa7"/><stop offset="1" stop-color="#6f7a87"/></radialGradient><linearGradient id="flR" x1="720" y1="0" x2="790" y2="0" gradientUnits="userSpaceOnUse"><stop offset="0" stop-color="#a9b4c0"/><stop offset="0.5" stop-color="#97a2af"/><stop offset="1" stop-color="#707a86"/></linearGradient><linearGradient id="ps1" x1="1414" y1="0" x2="1571" y2="0" gradientUnits="userSpaceOnUse"><stop offset="0" stop-color="#8c97a4"/><stop offset="0.08" stop-color="#9eaab7"/><stop offset="0.35" stop-color="#9fabb8"/><stop offset="0.62" stop-color="#8c97a4"/><stop offset="0.85" stop-color="#6f7986"/><stop offset="1" stop-color="#5a626d"/></linearGradient><linearGradient id="pt1" x1="0" y1="340" x2="0" y2="384" gradientUnits="userSpaceOnUse"><stop offset="0" stop-color="#a9b3bf"/><stop offset="0.5" stop-color="#9ea8b4"/><stop offset="1" stop-color="#949eaa"/></linearGradient><radialGradient id="hole" cx="0.3" cy="0.3" r="0.8"><stop offset="0" stop-color="#7b8592"/><stop offset="0.7" stop-color="#9aa4b0"/><stop offset="1" stop-color="#b3bcc7"/></radialGradient><linearGradient id="ps2" x1="1128" y1="0" x2="1285" y2="0" gradientUnits="userSpaceOnUse"><stop offset="0" stop-color="#8c97a4"/><stop offset="0.08" stop-color="#9eaab7"/><stop offset="0.35" stop-color="#9fabb8"/><stop offset="0.62" stop-color="#8c97a4"/><stop offset="0.85" stop-color="#6f7986"/><stop offset="1" stop-color="#5a626d"/></linearGradient><linearGradient id="pt2" x1="0" y1="324" x2="0" y2="368" gradientUnits="userSpaceOnUse"><stop offset="0" stop-color="#a9b3bf"/><stop offset="0.5" stop-color="#9ea8b4"/><stop offset="1" stop-color="#949eaa"/></linearGradient><linearGradient id="ps3" x1="868" y1="0" x2="1016" y2="0" gradientUnits="userSpaceOnUse"><stop offset="0" stop-color="#8c97a4"/><stop offset="0.08" stop-color="#9eaab7"/><stop offset="0.35" stop-color="#9fabb8"/><stop offset="0.62" stop-color="#8c97a4"/><stop offset="0.85" stop-color="#6f7986"/><stop offset="1" stop-color="#5a626d"/></linearGradient><linearGradient id="pt3" x1="0" y1="533" x2="0" y2="577" gradientUnits="userSpaceOnUse"><stop offset="0" stop-color="#a9b3bf"/><stop offset="0.5" stop-color="#9ea8b4"/><stop offset="1" stop-color="#949eaa"/></linearGradient><linearGradient id="ps4" x1="1280" y1="0" x2="1436" y2="0" gradientUnits="userSpaceOnUse"><stop offset="0" stop-color="#8c97a4"/><stop offset="0.08" stop-color="#9eaab7"/><stop offset="0.35" stop-color="#9fabb8"/><stop offset="0.62" stop-color="#8c97a4"/><stop offset="0.85" stop-color="#6f7986"/><stop offset="1" stop-color="#5a626d"/></linearGradient><linearGradient id="pt4" x1="0" y1="433" x2="0" y2="477" gradientUnits="userSpaceOnUse"><stop offset="0" stop-color="#a9b3bf"/><stop offset="0.5" stop-color="#9ea8b4"/><stop offset="1" stop-color="#949eaa"/></linearGradient><linearGradient id="ps5" x1="988" y1="0" x2="1145" y2="0" gradientUnits="userSpaceOnUse"><stop offset="0" stop-color="#8c97a4"/><stop offset="0.08" stop-color="#9eaab7"/><stop offset="0.35" stop-color="#9fabb8"/><stop offset="0.62" stop-color="#8c97a4"/><stop offset="0.85" stop-color="#6f7986"/><stop offset="1" stop-color="#5a626d"/></linearGradient><linearGradient id="pt5" x1="0" y1="357" x2="0" y2="401" gradientUnits="userSpaceOnUse"><stop offset="0" stop-color="#a9b3bf"/><stop offset="0.5" stop-color="#9ea8b4"/><stop offset="1" stop-color="#949eaa"/></linearGradient><linearGradient id="ps6" x1="715" y1="0" x2="872" y2="0" gradientUnits="userSpaceOnUse"><stop offset="0" stop-color="#8c97a4"/><stop offset="0.08" stop-color="#9eaab7"/><stop offset="0.35" stop-color="#9fabb8"/><stop offset="0.62" stop-color="#8c97a4"/><stop offset="0.85" stop-color="#6f7986"/><stop offset="1" stop-color="#5a626d"/></linearGradient><linearGradient id="pt6" x1="0" y1="506" x2="0" y2="550" gradientUnits="userSpaceOnUse"><stop offset="0" stop-color="#a9b3bf"/><stop offset="0.5" stop-color="#9ea8b4"/><stop offset="1" stop-color="#949eaa"/></linearGradient></defs><path d="M657,854 L660,825 L671,796 L685,786 L698,784 L708,748 L720,731 L737,728 L751,734 L761,748 L770,758 L785,724 L797,713 L809,714 L835,745 L855,767 L866,772 L865,714 L872,692 L889,683 L919,686 L955,705 L961,675 L1005,672 L1028,689 L1042,656 L1052,634 L1074,633 L1112,648 L1131,683 L1135,665 L1142,631 L1157,616 L1188,613 L1231,601 L1252,607 L1261,616 L1274,659 L1277,671 L1283,613 L1289,594 L1313,582 L1350,585 L1384,610 L1423,579 L1442,560 L1455,566 L1470,604 L1467,591 L1480,566 L1502,560 L1543,613 L1565,601 L1587,604 L1606,604 L1631,613 L1648,630 L1654,650 L1650,668 L1637,673 L1625,683 L1612,692 L1612,742 L1593,746 L1559,752 L1521,761 L1477,768 L1461,777 L1423,768 L1417,812 L1398,821 L1398,840 L1373,840 L1373,832 L1335,831 L1310,837 L1279,863 L1234,875 L1191,885 L1140,898 L1093,913 L1055,910 L1033,894 L1017,905 L994,908 L975,939 L950,939 L945,936 L914,934 L885,926 L862,917 L843,924 L818,926 L806,919 L785,917 L775,943 L739,941 L722,943 L681,917 L660,883Z" fill="#8d98a6" /><path d="M1575,601 L1603,605 L1615,617 L1624,680 L1622,723 L1598,747 L1572,742Z" fill="#8a96a3" /><path d="M1600,606 L1631,612 L1645,624 L1653,645 L1650,667 L1638,675 L1622,680 L1612,660Z" fill="#8d98a6" /><ellipse cx="1641" cy="643" rx="13" ry="31" fill="#9eaab6"/><path d="M1603,605 L1615,617 L1624,680 L1622,723 L1612,735 L1614,690 L1608,640Z" fill="#6e7884" /><path d="M1465,600 L1478,566 L1489,545 L1502,547 L1512,600 L1525,625 L1482,625Z" fill="#8f9aa8" /><path d="M1491,486 L1530,484 L1542,540 L1559,603 L1578,631 L1600,642 L1596,700 L1560,700 L1530,636 L1523,619 L1503,540Z" fill="#7f7e90" /><path d="M1493,488 L1505,488 L1527,619 L1531,637 L1522,630 L1503,545Z" fill="#a3a1b3" /><path d="M1509,500 L1519,499 L1533,590 L1528,598Z" fill="#8e8ca0" /><path d="M1556,641 L1612,645 L1612,653 L1606,655 L1606,666.2 L1612,667.64 L1612,677.0 L1606,678.44 L1606,689.96 L1612,691.4 L1612,702.2 L1607,713 L1562,709 L1559,684.2Z" fill="#7d7c8f" /><path d="M1586.8,653 L1606,655 L1606,711 L1589.6,709Z" fill="#5d5e6d" opacity="0.55"/><ellipse cx="1575" cy="642" rx="15" ry="6" fill="#141414"/><path d="M1582,708 h25 v16.8 l-4,11.200000000000001 h-17 l-4,-11.200000000000001Z" fill="#141414"/><path d="M1482,619 L1530,636 L1555,690 L1566,720 L1559,757 L1528,762 L1487,742 L1474,700Z" fill="#9aa5b2" /><path d="M1494,630 L1505,660 L1508,700 L1503,740" fill="none" stroke="#c9d2dc" stroke-width="2.5" stroke-linejoin="round" stroke-linecap="round" opacity="0.9"/><path d="M1530,636 L1545,641 L1559,684 L1566,720 L1559,757 L1545,758 L1552,720 L1546,684 L1535,650Z" fill="#838d9a" /><path d="M1412,590 L1423,579 L1442,560 L1458,569 L1470,607 L1482,660 L1487,708 L1470,737 L1440,745 L1412,745Z" fill="#95a0ad" /><path d="M1442,560 L1458,569 L1470,607 L1482,660 L1487,708 L1470,737 L1462,735 L1476,706 L1472,662 L1460,610 L1449,572Z" fill="#838d9a" /><path d="M1436,566 L1452,604 L1464,655 L1468,705" fill="none" stroke="#c9d2dc" stroke-width="2" stroke-linejoin="round" stroke-linecap="round" opacity="0.8"/><path d="M1345,578 L1378,576 L1381,602 L1343,604Z" fill="#62636f" /><path d="M1368,757 L1416,761 L1416,769 L1410,771 L1410,779.75 L1416,781.05 L1416,789.5 L1410,790.8 L1410,801.2 L1416,802.5 L1416,812.25 L1411,822 L1374,818 L1371,796.0Z" fill="#737284" /><path d="M1394.4,769 L1410,771 L1410,820 L1396.8,818Z" fill="#5d5e6d" opacity="0.55"/><path d="M1374,818 h24 v13.2 l-4,8.8 h-16 l-4,-8.8Z" fill="#141414"/><path d="M1395,752 L1412,745 L1420,790 L1417,812 L1400,822 L1404,790Z" fill="#99a4b1" /><path d="M1283,613 L1289,594 L1313,582 L1350,585 L1384,610 L1405,662 L1417,717 L1414,741 L1399,753 L1365,757 L1330,745 L1300,715 L1285,670Z" fill="#97a2af" /><path d="M1350,585 L1384,610 L1405,662 L1417,717 L1414,741 L1399,753 L1392,745 L1402,716 L1391,664 L1371,615Z" fill="#838d9a" /><path d="M1300,598 L1340,596 L1372,615 L1390,660 L1398,712" fill="none" stroke="#c9d2dc" stroke-width="2.2" stroke-linejoin="round" stroke-linecap="round" opacity="0.85"/><path d="M1292,640 Q1345,650 1362,700 Q1370,730 1366,757" fill="none" stroke="#b9c3ce" stroke-width="2.4" opacity="0.8"/><path d="M1290,655 Q1338,664 1352,705 Q1358,730 1355,757" fill="none" stroke="#7f8996" stroke-width="1.5" opacity="0.6"/><path d="M1340,745 L1368,757 L1372,800 L1350,802Z" fill="#6a6b7b" /><path d="M1262,705 L1301,723 L1322,735 L1344,765 L1350,802 L1344,836 L1313,857 L1280,863 L1262,830Z" fill="#98a3b0" /><path d="M1322,735 L1344,765 L1350,802 L1344,836 L1313,857 L1306,850 L1334,830 L1338,800 L1332,768 L1314,742Z" fill="#838d9a" /><path d="M1300,730 L1322,748 L1333,780 L1336,812" fill="none" stroke="#c9d2dc" stroke-width="2" stroke-linejoin="round" stroke-linecap="round" opacity="0.8"/><path d="M1134,700 L1135,665 L1142,631 L1157,616 L1188,613 L1231,601 L1252,607 L1261,616 L1274,659 L1277,690 L1262,705 L1262,830 L1246,753 L1200,760 L1150,760Z" fill="#929dab" /><path d="M1185,476 L1228,474 L1228,590 Q1232,625 1256,641 L1222,648 Q1195,625 1154,617 L1154,607 Q1183,600 1185,590Z" fill="#7f7e90"/><path d="M1186,478 L1198,478 L1197,590 Q1193,606 1175,612 L1166,610 Q1185,600 1186,590Z" fill="#a7a5b7"/><path d="M1200,480 L1210,480 L1209,586 Q1206,600 1200,596Z" fill="#9593a6"/><path d="M1213,476 L1228,474 L1228,590 Q1232,622 1250,638 L1238,642 Q1218,622 1213,590Z" fill="#636474"/><ellipse cx="1169" cy="603" rx="8" ry="5" fill="#141414"/><path d="M1134.6,669 L1141,638 L1150,623 L1167,617 L1184,623 L1191,634 L1200,656 L1210,680 L1219,712 L1226,732 L1234,745 L1200,760 L1150,760 L1134,720Z" fill="#98a3b0" /><path d="M1141,640 L1152,625 L1168,619 L1185,625 L1194,640 L1206,668 L1216,700 L1226,730" fill="none" stroke="#c9d2dc" stroke-width="2.2" stroke-linejoin="round" stroke-linecap="round" opacity="0.85"/><path d="M1234,601 L1252,604 L1263,616 L1265,649 L1278,675 L1289,690 L1277,700 L1262,705 L1248,700 L1248,616Z" fill="#9ba6b3" /><path d="M1252,606 L1262,618 L1264,648 L1276,672" fill="none" stroke="#c9d2dc" stroke-width="2" stroke-linejoin="round" stroke-linecap="round" opacity="0.8"/><path d="M1222,641 L1256,645 L1256,653 L1250,655 L1250,664.1 L1256,665.42 L1256,674.0 L1250,675.32 L1250,685.88 L1256,687.2 L1256,697.1 L1251,707 L1228,703 L1225,680.6Z" fill="#62636f" /><path d="M1240.7,653 L1250,655 L1250,705 L1242.4,703Z" fill="#50515c" opacity="0.55"/><ellipse cx="1234" cy="639" rx="14" ry="7" fill="#141414"/><path d="M1228,705 h20 v15.0 l-4,10.0 h-12 l-4,-10.0Z" fill="#141414"/><path d="M1090,700 L1150,690 L1230,712 L1262,705 L1290,745 L1281,786 L1192,790 L1124,800 L1100,790 L1080,760Z" fill="#9eaab6" /><path d="M1120,700 L1140,730 L1150,760" fill="none" stroke="#c9d2dc" stroke-width="2.5" stroke-linejoin="round" stroke-linecap="round" opacity="0.8"/><path d="M1236,716 L1250,740 L1258,760" fill="none" stroke="#c9d2dc" stroke-width="2.2" stroke-linejoin="round" stroke-linecap="round" opacity="0.7"/><path d="M1222,641 L1256,645 L1256,653 L1250,655 L1250,664.1 L1256,665.42 L1256,674.0 L1250,675.32 L1250,685.88 L1256,687.2 L1256,697.1 L1251,707 L1228,703 L1225,680.6Z" fill="#62636f" /><path d="M1240.7,653 L1250,655 L1250,705 L1242.4,703Z" fill="#50515c" opacity="0.55"/><ellipse cx="1234" cy="639" rx="14" ry="7" fill="#141414"/><path d="M1229,705 h20 v15.0 l-4,10.0 h-12 l-4,-10.0Z" fill="#141414"/><path d="M1192,790 L1200,760 L1221,743 L1250,752 L1266,768 L1279,786 L1277,836 L1262,862 L1240,874 L1211,880 L1209,848 L1209,805Z" fill="#96a1ae" /><path d="M1250,752 L1270,770 L1281,786 L1280,838 L1264,866 L1240,878 L1258,860 L1272,834 L1274,790 L1262,772Z" fill="#7d8794" /><path d="M1221,744 L1248,753 L1264,770 L1275,788" fill="none" stroke="#d3dbe4" stroke-width="1.8" stroke-linejoin="round" stroke-linecap="round" opacity="0.9"/><path d="M1124,800 L1130,775 L1153,762 L1180,771 L1195,785 L1209,805 L1209,848 L1196,877 L1170,892 L1148,897 L1139,860 L1138,829Z" fill="#96a1ae" /><path d="M1180,771 L1200,790 L1212,810 L1212,850 L1198,880 L1175,895 L1193,874 L1204,848 L1204,808 L1192,790Z" fill="#7d8794" /><path d="M1153,763 L1178,772 L1196,790 L1205,810" fill="none" stroke="#d3dbe4" stroke-width="1.8" stroke-linejoin="round" stroke-linecap="round" opacity="0.9"/><path d="M1045,506 L1088,504 L1088,600 Q1092,650 1110,668 L1083,682 Q1060,655 1022,641 L1022,632 Q1043,625 1045,600Z" fill="#7f7e90"/><path d="M1046,508 L1058,508 L1057,600 Q1053,622 1038,633 L1029,633 Q1045,620 1046,600Z" fill="#a7a5b7"/><path d="M1060,510 L1070,510 L1069,596 Q1066,610 1060,606Z" fill="#9593a6"/><path d="M1073,506 L1088,504 L1088,600 Q1091,642 1106,666 L1094,670 Q1078,640 1073,600Z" fill="#636474"/><ellipse cx="1030" cy="636" rx="8" ry="5" fill="#141414"/><path d="M1018,642 L1050,637 L1092,634 L1117,643 L1122,650 L1127,677 L1147,703 L1150,740 L1124,800 L1076,776 L1040,790 L1018,820 L1010,700Z" fill="#98a3b0" /><path d="M1020,644 L1055,640 L1092,636 L1118,645 L1124,660 L1128,678 L1146,702" fill="none" stroke="#c9d2dc" stroke-width="2" stroke-linejoin="round" stroke-linecap="round" opacity="0.85"/><path d="M1040,690 L1062,730 L1072,770" fill="none" stroke="#c9d2dc" stroke-width="2.2" stroke-linejoin="round" stroke-linecap="round" opacity="0.6"/><path d="M1018,868 L1022,820 L1040,790 L1076,776 L1106,786 L1112,800 L1128,810 L1137,829 L1139,860 L1128,889 L1100,906 L1074,913 L1045,905 L1028,892Z" fill="#96a1ae" /><path d="M1110,788 L1124,800 L1139,829 L1141,860 L1130,891 L1104,908 L1080,915 L1100,904 L1124,886 L1133,860 L1131,832 L1120,808Z" fill="#7d8794" /><path d="M1076,777 L1106,786 L1112,800 L1124,808 L1131,828" fill="none" stroke="#d3dbe4" stroke-width="1.8" stroke-linejoin="round" stroke-linecap="round" opacity="0.9"/><path d="M1083,675 L1117,679 L1117,687 L1111,689 L1111,698.8 L1117,700.16 L1117,709.0 L1111,710.36 L1111,721.24 L1117,722.6 L1117,732.8 L1112,743 L1089,739 L1086,715.8Z" fill="#62636f" /><path d="M1101.7,687 L1111,689 L1111,741 L1103.4,739Z" fill="#50515c" opacity="0.55"/><ellipse cx="1094" cy="672" rx="15" ry="7" fill="#141414"/><path d="M1088,740 h20 v13.799999999999999 l-4,9.200000000000001 h-12 l-4,-9.200000000000001Z" fill="#141414"/><path d="M955,700 L961,675 L1005,672 L1028,689 L1050,733 L1064,775 L1067,811 L1056,833 L1033,839 L1000,830 L970,780Z" fill="#95a0ad" /><path d="M1005,672 L1028,689 L1050,733 L1064,775 L1067,811 L1056,833 L1048,828 L1054,800 L1048,770 L1036,735 L1018,695Z" fill="#838d9a" /><path d="M975,678 L1010,684 L1030,715 L1045,760 L1052,810" fill="none" stroke="#c9d2dc" stroke-width="2.2" stroke-linejoin="round" stroke-linecap="round" opacity="0.85"/><path d="M968,725 Q1010,735 1025,770 Q1032,792 1030,812" fill="none" stroke="#b9c3ce" stroke-width="2.2" opacity="0.7"/><path d="M985,800 L1028,806 L1036,860 L1010,875 L990,860Z" fill="#a3aebb" /><path d="M1000,810 L1012,835 L1014,862" fill="none" stroke="#cdd4dd" stroke-width="2.5" stroke-linejoin="round" stroke-linecap="round" opacity="0.9"/><path d="M923,683 L957,683 L960,720 L925,720Z" fill="#62636f" /><path d="M940,850 L992,854 L992,862 L986,864 L986,876.25 L992,877.75 L992,887.5 L986,889.0 L986,901.0 L992,902.5 L992,913.75 L987,925 L946,921 L943,895.0Z" fill="#737284" /><path d="M968.6,862 L986,864 L986,923 L971.2,921Z" fill="#5d5e6d" opacity="0.55"/><path d="M950,918 h25 v13.2 l-4,8.8 h-17 l-4,-8.8Z" fill="#141414"/><path d="M865,714 L872,692 L889,683 L919,686 L956,706 L975,736 L992,778 L997,822 L981,853 L945,850 L942,880 L946,934 L914,934 L885,926 L868,917 L862,860 L866,790Z" fill="#98a3b0" /><path d="M919,686 L956,706 L975,736 L992,778 L997,822 L981,853 L970,850 L982,820 L978,782 L962,742 L944,714Z" fill="#838d9a" /><path d="M885,690 L930,697 L958,724 L978,770 L984,820" fill="none" stroke="#c9d2dc" stroke-width="2.5" stroke-linejoin="round" stroke-linecap="round" opacity="0.85"/><path d="M872,742 Q925,748 945,790 Q955,815 952,845" fill="none" stroke="#b9c3ce" stroke-width="2.4" opacity="0.8"/><path d="M870,756 Q916,763 933,800 Q940,822 938,848" fill="none" stroke="#7f8996" stroke-width="1.5" opacity="0.6"/><path d="M992,850 L1000,870 L996,906 L980,912 L972,880Z" fill="#939eac" /><path d="M768,760 L772,743 L787,717 L802,712 L830,720 L858,762 L866,780 L850,800 L780,800Z" fill="#929dab" /><path d="M792,655 L832,652 L847,723 L857,757 L867,782 L883,805 L905,812 L912,880 L880,898 L860,825 L830,807 L820,795Z" fill="#7f7e90" /><path d="M793,657 L806,657 L822,780 L816,790Z" fill="#a3a1b3" /><path d="M809,660 L818,660 L835,780 L828,790Z" fill="#8e8ca0" /><path d="M857,810 L912,814 L912,822 L906,824 L906,836.6 L912,838.12 L912,848.0 L906,849.52 L906,861.6800000000001 L912,863.2 L912,874.6 L907,886 L863,882 L860,855.6Z" fill="#8c8b9d" /><path d="M887.25,822 L906,824 L906,884 L890.0,882Z" fill="#6e6e80" opacity="0.55"/><ellipse cx="876" cy="811" rx="14" ry="6" fill="#141414"/><path d="M882,878 h27 v16.2 l-4,10.8 h-19 l-4,-10.8Z" fill="#141414"/><path d="M734,787 L785,791 L833,810 L847,835 L862,868 L862,917 L843,924 L818,926 L806,919 L785,917 L765,929 L745,900 L730,830Z" fill="#97a2af" /><path d="M833,810 L847,835 L862,868 L862,917 L850,920 L852,870 L840,840 L825,815Z" fill="#838d9a" /><path d="M742,792 L790,797 L830,820 L845,860 L848,900" fill="none" stroke="#c9d2dc" stroke-width="2.5" stroke-linejoin="round" stroke-linecap="round" opacity="0.85"/><path d="M770,800 L795,830 L808,880" fill="none" stroke="#c0c8d2" stroke-width="3" stroke-linejoin="round" stroke-linecap="round" opacity="0.7"/><path d="M698,784 L708,748 L720,731 L737,728 L751,734 L761,748 L772,787 L740,800Z" fill="#95a0ad" /><path d="M712,745 L724,733 L740,731 L754,738 L764,760" fill="none" stroke="#c9d2dc" stroke-width="2" stroke-linejoin="round" stroke-linecap="round" opacity="0.8"/><path d="M739,925 L775,935 L785,917 L760,905Z" fill="#8f9aa8" /><path d="M745,800 L790,812 L800,860 L790,905 L760,915 L748,860Z" fill="#9eaab6" /><path d="M735,786 L752,790 L762,815 L767,860 L766,905 L756,935 L738,945 L712,946 L700,930 L740,850Z" fill="url(#flR)" /><path d="M745,790 L770,792 L786,800 L792,860 L788,915 L770,930 L752,940 L760,860Z" fill="url(#flR)" /><ellipse cx="703" cy="865" rx="47" ry="80" fill="url(#flF)" transform="rotate(5 703 865)"/><ellipse cx="703" cy="865" rx="47" ry="80" fill="none" stroke="#b3bdc8" stroke-width="1.5" opacity="0.7" transform="rotate(5 703 865)"/><ellipse cx="695" cy="869" rx="30" ry="41" fill="#a7b2be" transform="rotate(5 695 869)"/><ellipse cx="698" cy="870" rx="24" ry="35" fill="#8d98a5" transform="rotate(5 698 870)"/><ellipse cx="690" cy="868" rx="20" ry="30" fill="#a3aeba" transform="rotate(5 690 868)"/><ellipse cx="682" cy="866" rx="12" ry="17" fill="url(#flH)"/><ellipse cx="680" cy="809" rx="3.6" ry="4.6" fill="#6f7985"/><ellipse cx="712" cy="820" rx="3.6" ry="4.6" fill="#6f7985"/><ellipse cx="733" cy="876" rx="3.6" ry="4.6" fill="#6f7985"/><ellipse cx="720" cy="919" rx="3.6" ry="4.6" fill="#6f7985"/><ellipse cx="687" cy="909" rx="3.6" ry="4.6" fill="#6f7985"/><path d="M700,787 L722,792 L740,812" fill="none" stroke="#c9d2dc" stroke-width="2" stroke-linejoin="round" stroke-linecap="round" opacity="0.6"/><path d="M1414.3,368.0 L1420.8,486.0 L1421.0,487.0 L1421.7,488.0 L1422.9,488.9 L1424.5,489.8 L1426.6,490.5 L1429.1,491.2 L1432.0,491.7 L1435.3,492.2 L1439.0,492.6 L1443.0,492.9 L1447.4,493.0 L1452.1,493.1 L1457.0,493.1 L1462.2,492.9 L1467.6,492.7 L1473.2,492.3 L1478.9,491.9 L1484.8,491.4 L1490.7,490.7 L1496.7,490.0 L1502.6,489.2 L1508.5,488.3 L1514.4,487.3 L1520.1,486.3 L1525.7,485.2 L1531.1,484.1 L1536.3,482.9 L1541.2,481.6 L1545.9,480.4 L1550.3,479.1 L1554.3,477.8 L1558.0,476.4 L1561.3,475.1 L1564.2,473.8 L1566.7,472.5 L1568.8,471.2 L1570.4,470.0 L1571.6,468.8 L1572.3,467.6 L1572.5,466.5 L1564.7,355.0 L1564.5,356.8 L1563.8,358.6 L1562.6,360.3 L1561.0,362.1 L1559.0,363.9 L1556.5,365.7 L1553.6,367.5 L1550.3,369.2 L1546.7,370.9 L1542.7,372.5 L1538.3,374.0 L1533.7,375.5 L1528.8,376.9 L1523.6,378.2 L1518.3,379.4 L1512.7,380.4 L1507.1,381.4 L1501.3,382.2 L1495.4,382.9 L1489.5,383.5 L1483.6,383.9 L1477.7,384.2 L1471.9,384.4 L1466.3,384.4 L1460.7,384.3 L1455.4,384.0 L1450.2,383.6 L1445.3,383.1 L1440.7,382.4 L1436.3,381.6 L1432.3,380.7 L1428.7,379.7 L1425.4,378.5 L1422.5,377.3 L1420.0,375.9 L1418.0,374.4 L1416.4,372.9 L1415.2,371.3 L1414.5,369.7 L1414.3,368.0Z" fill="url(#ps1)"/><path d="M1564.7,355.0 L1564.5,356.8 L1563.8,358.6 L1562.6,360.3 L1561.0,362.1 L1559.0,363.9 L1556.5,365.7 L1553.6,367.5 L1550.3,369.2 L1546.7,370.9 L1542.7,372.5 L1538.3,374.0 L1533.7,375.5 L1528.8,376.9 L1523.6,378.2 L1518.3,379.4 L1512.7,380.4 L1507.1,381.4 L1501.3,382.2 L1495.4,382.9 L1489.5,383.5 L1483.6,383.9 L1477.7,384.2 L1471.9,384.4 L1466.3,384.4 L1460.7,384.3 L1455.4,384.0 L1450.2,383.6 L1445.3,383.1 L1440.7,382.4 L1436.3,381.6 L1432.3,380.7 L1428.7,379.7 L1425.4,378.5 L1422.5,377.3 L1420.0,375.9 L1418.0,374.4 L1416.4,372.9 L1415.2,371.3 L1414.5,369.7 L1414.3,368.0 L1414.3,386.9 L1414.5,388.0 L1415.2,389.1 L1416.4,390.2 L1418.0,391.1 L1420.0,392.0 L1422.5,392.8 L1425.4,393.5 L1428.7,394.2 L1432.3,394.7 L1436.3,395.1 L1440.7,395.5 L1445.3,395.7 L1450.2,395.9 L1455.4,395.9 L1460.7,395.8 L1466.3,395.6 L1471.9,395.3 L1477.7,395.0 L1483.6,394.5 L1489.5,393.9 L1495.4,393.2 L1501.3,392.5 L1507.1,391.6 L1512.7,390.7 L1518.3,389.7 L1523.6,388.6 L1528.8,387.5 L1533.7,386.3 L1538.3,385.1 L1542.7,383.9 L1546.7,382.6 L1550.3,381.3 L1553.6,379.9 L1556.5,378.6 L1559.0,377.3 L1561.0,376.0 L1562.6,374.7 L1563.8,373.4 L1564.5,372.1 L1564.7,370.9Z" fill="#a9b2bd" opacity="0.45"/><path d="M1418.3,443.5 Q1455.7,449.5 1474.5,459.5 L1474.5,469.5 Q1451.9,463.5 1420.3,457.5Z" fill="#b4bdc8" opacity="0.75"/><path d="M1462.4,412.5 L1474.5,414.5 L1474.5,459.5 L1462.4,455.5Z" fill="#a7b1bd"/><path d="M1474.5,414.5 L1474.5,459.5" stroke="#8a94a0" stroke-width="1" opacity="0.7"/><ellipse cx="1446.9" cy="433.5" rx="12" ry="20" fill="#b9c2cc"/><ellipse cx="1443.9" cy="431.5" rx="9.5" ry="17" fill="url(#hole)"/><ellipse cx="1446.9" cy="429.5" rx="2.6" ry="12" fill="#c8bd10" transform="rotate(-12 1446.9 429.5)"/><path d="M1564.7,355.0 L1564.5,356.8 L1563.8,358.6 L1562.6,360.3 L1561.0,362.1 L1559.0,363.9 L1556.5,365.7 L1553.6,367.5 L1550.3,369.2 L1546.7,370.9 L1542.7,372.5 L1538.3,374.0 L1533.7,375.5 L1528.8,376.9 L1523.6,378.2 L1518.3,379.4 L1512.7,380.4 L1507.1,381.4 L1501.3,382.2 L1495.4,382.9 L1489.5,383.5 L1483.6,383.9 L1477.7,384.2 L1471.9,384.4 L1466.3,384.4 L1460.7,384.3 L1455.4,384.0 L1450.2,383.6 L1445.3,383.1 L1440.7,382.4 L1436.3,381.6 L1432.3,380.7 L1428.7,379.7 L1425.4,378.5 L1422.5,377.3 L1420.0,375.9 L1418.0,374.4 L1416.4,372.9 L1415.2,371.3 L1414.5,369.7 L1414.3,368.0 L1414.5,366.2 L1415.2,364.4 L1416.4,362.7 L1418.0,360.9 L1420.0,359.1 L1422.5,357.3 L1425.4,355.5 L1428.7,353.8 L1432.3,352.1 L1436.3,350.5 L1440.7,349.0 L1445.3,347.5 L1450.2,346.1 L1455.4,344.8 L1460.7,343.6 L1466.3,342.6 L1471.9,341.6 L1477.7,340.8 L1483.6,340.1 L1489.5,339.5 L1495.4,339.1 L1501.3,338.8 L1507.1,338.6 L1512.7,338.6 L1518.3,338.7 L1523.6,339.0 L1528.8,339.4 L1533.7,339.9 L1538.3,340.6 L1542.7,341.4 L1546.7,342.3 L1550.3,343.3 L1553.6,344.5 L1556.5,345.7 L1559.0,347.1 L1561.0,348.6 L1562.6,350.1 L1563.8,351.7 L1564.5,353.3 L1564.7,355.0Z" fill="url(#pt1)"/><path d="M1542.1,355.7 L1541.8,357.2 L1540.9,358.7 L1539.4,360.2 L1537.3,361.7 L1534.7,363.2 L1531.5,364.6 L1527.9,366.1 L1523.7,367.4 L1519.2,368.7 L1514.3,369.9 L1509.1,371.0 L1503.7,372.0 L1498.1,372.8 L1492.3,373.6 L1486.5,374.1 L1480.7,374.6 L1474.9,374.8 L1469.3,375.0 L1463.9,374.9 L1458.7,374.7 L1453.8,374.3 L1449.3,373.8 L1445.1,373.2 L1441.5,372.4 L1438.3,371.5 L1435.7,370.4 L1433.6,369.3 L1432.1,368.0 L1431.2,366.7 L1430.9,365.3 L1431.2,363.8 L1432.1,362.3 L1433.6,360.8 L1435.7,359.3 L1438.3,357.8 L1441.5,356.4 L1445.1,354.9 L1449.3,353.6 L1453.8,352.3 L1458.7,351.1 L1463.9,350.0 L1469.3,349.0 L1474.9,348.2 L1480.7,347.4 L1486.5,346.9 L1492.3,346.4 L1498.1,346.2 L1503.7,346.0 L1509.1,346.1 L1514.3,346.3 L1519.2,346.7 L1523.7,347.2 L1527.9,347.8 L1531.5,348.6 L1534.7,349.5 L1537.3,350.6 L1539.4,351.7 L1540.9,353.0 L1541.8,354.3 L1542.1,355.7Z" fill="#949eaa"/><path d="M1432.6,361.7 L1434.0,360.5 L1435.9,359.2 L1438.1,357.9 L1440.7,356.7 L1443.6,355.5 L1446.9,354.3 L1450.5,353.2 L1454.4,352.1 L1458.5,351.1 L1462.8,350.2 L1467.3,349.3 L1472.0,348.6 L1476.8,347.9 L1481.6,347.3 L1486.5,346.9 L1491.4,346.5 L1496.2,346.2 L1501.0,346.1 L1505.7,346.0 L1510.2,346.1 L1514.5,346.3 L1518.6,346.6 L1522.5,347.0 L1526.1,347.5 L1529.4,348.1 L1532.3,348.8 L1534.9,349.6 L1537.1,350.5 L1539.0,351.4 L1540.4,352.5" fill="none" stroke="#d0d8e1" stroke-width="3"/><path d="M1538.0,361.3 L1536.4,362.4 L1534.5,363.5 L1532.2,364.6 L1529.6,365.6 L1526.7,366.6 L1523.6,367.6 L1520.1,368.6 L1516.5,369.5 L1512.6,370.4 L1508.5,371.2 L1504.3,371.9 L1500.0,372.6 L1495.5,373.2 L1491.0,373.7 L1486.5,374.1 L1482.0,374.4 L1477.5,374.7 L1473.0,374.9 L1468.7,375.0 L1464.5,374.9 L1460.4,374.8 L1456.5,374.7 L1452.9,374.4 L1449.4,374.0 L1446.3,373.6 L1443.4,373.0 L1440.8,372.4 L1438.5,371.7 L1436.6,371.0 L1435.0,370.2" fill="none" stroke="#7b8490" stroke-width="1.2" opacity="0.7"/><path d="M1414.8,386.0 L1415.0,386.9 L1415.5,387.7 L1416.4,388.5 L1417.6,389.3 L1419.1,390.0 L1421.0,390.7 L1423.2,391.4 L1425.7,392.0" fill="none" stroke="#161616" stroke-width="2.4"/><path d="M1431.7,393.1 L1434.7,393.5 L1437.9,393.8 L1441.3,394.1 L1444.9,394.4 L1448.7,394.6 L1452.6,394.7 L1456.7,394.8 L1460.8,394.9 L1465.1,394.8 L1469.5,394.8 L1474.0,394.7 L1478.5,394.5 L1483.0,394.3 L1487.6,394.0 L1492.2,393.7 L1496.8,393.3 L1501.3,392.9 L1505.8,392.5 L1510.3,392.0 L1514.6,391.4 L1518.9,390.9 L1523.0,390.2 L1527.1,389.6 L1531.0,388.9 L1534.7,388.2 L1538.3,387.4 L1541.6,386.7 L1544.8,385.9 L1547.8,385.1 L1550.6,384.2 L1553.1,383.4 L1555.4,382.6 L1557.4,381.7 L1559.2,380.8 L1560.7,380.0 L1562.0,379.1 L1562.9,378.3 L1563.6,377.5 L1564.1,376.6 L1564.2,375.8" fill="none" stroke="#161616" stroke-width="2.4"/><path d="M1414.8,393.0 L1415.0,394.0 L1415.7,395.0 L1416.9,395.9 L1418.5,396.7 L1420.5,397.6 L1422.9,398.3 L1425.8,399.0 L1429.1,399.7 L1432.7,400.2 L1436.7,400.7 L1441.0,401.1 L1445.6,401.4 L1450.5,401.6 L1455.6,401.8 L1460.9,401.9 L1466.4,401.8 L1472.1,401.7 L1477.8,401.5 L1483.6,401.3 L1489.5,400.9 L1495.4,400.5 L1501.2,399.9 L1506.9,399.4 L1512.6,398.7 L1518.1,398.0 L1523.4,397.2 L1528.5,396.3 L1533.4,395.4 L1538.0,394.5 L1542.3,393.5 L1546.3,392.5 L1549.9,391.4 L1553.2,390.4 L1556.1,389.3 L1558.5,388.2 L1560.5,387.1 L1562.1,386.0 L1563.3,384.9 L1564.0,383.9 L1564.2,382.8" fill="none" stroke="#161616" stroke-width="2.4"/><path d="M1414.8,400.0 L1415.0,401.0 L1415.7,402.0 L1416.9,402.9 L1418.5,403.7 L1420.5,404.6 L1422.9,405.3 L1425.8,406.0 L1429.1,406.7 L1432.7,407.2 L1436.7,407.7 L1441.0,408.1 L1445.6,408.4 L1450.5,408.6 L1455.6,408.8 L1460.9,408.9 L1466.4,408.8 L1472.1,408.7 L1477.8,408.5 L1483.6,408.3 L1489.5,407.9 L1495.4,407.5 L1501.2,406.9 L1506.9,406.4 L1512.6,405.7 L1518.1,405.0 L1523.4,404.2 L1528.5,403.3 L1533.4,402.4 L1538.0,401.5 L1542.3,400.5 L1546.3,399.5 L1549.9,398.4 L1553.2,397.4 L1556.1,396.3 L1558.5,395.2 L1560.5,394.1 L1562.1,393.0 L1563.3,391.9 L1564.0,390.9 L1564.2,389.8" fill="none" stroke="#161616" stroke-width="2.4"/><path d="M1128.0,349.0 L1137.0,466.0 L1137.2,466.9 L1137.9,467.8 L1139.1,468.6 L1140.6,469.5 L1142.7,470.2 L1145.1,471.0 L1148.0,471.7 L1151.2,472.3 L1154.8,472.9 L1158.8,473.4 L1163.1,473.9 L1167.7,474.3 L1172.6,474.6 L1177.7,474.9 L1183.0,475.1 L1188.5,475.2 L1194.1,475.3 L1199.8,475.3 L1205.7,475.2 L1211.5,475.0 L1217.3,474.8 L1223.2,474.5 L1228.9,474.1 L1234.5,473.6 L1240.0,473.1 L1245.3,472.6 L1250.4,471.9 L1255.3,471.3 L1259.9,470.5 L1264.2,469.8 L1268.2,469.0 L1271.8,468.1 L1275.0,467.2 L1277.9,466.3 L1280.3,465.4 L1282.4,464.5 L1283.9,463.6 L1285.1,462.6 L1285.8,461.7 L1286.0,460.8 L1278.6,343.0 L1278.4,344.7 L1277.7,346.5 L1276.5,348.2 L1274.9,349.9 L1272.9,351.6 L1270.4,353.3 L1267.5,354.9 L1264.2,356.5 L1260.6,358.0 L1256.5,359.4 L1252.2,360.8 L1247.6,362.0 L1242.6,363.2 L1237.5,364.2 L1232.1,365.2 L1226.6,366.0 L1220.9,366.7 L1215.1,367.3 L1209.2,367.7 L1203.3,368.0 L1197.4,368.2 L1191.5,368.2 L1185.7,368.1 L1180.0,367.9 L1174.5,367.5 L1169.1,367.0 L1164.0,366.3 L1159.0,365.6 L1154.4,364.7 L1150.1,363.7 L1146.0,362.6 L1142.4,361.4 L1139.1,360.1 L1136.2,358.7 L1133.7,357.2 L1131.7,355.7 L1130.1,354.1 L1128.9,352.4 L1128.2,350.7 L1128.0,349.0Z" fill="url(#ps2)"/><path d="M1278.6,343.0 L1278.4,344.7 L1277.7,346.5 L1276.5,348.2 L1274.9,349.9 L1272.9,351.6 L1270.4,353.3 L1267.5,354.9 L1264.2,356.5 L1260.6,358.0 L1256.5,359.4 L1252.2,360.8 L1247.6,362.0 L1242.6,363.2 L1237.5,364.2 L1232.1,365.2 L1226.6,366.0 L1220.9,366.7 L1215.1,367.3 L1209.2,367.7 L1203.3,368.0 L1197.4,368.2 L1191.5,368.2 L1185.7,368.1 L1180.0,367.9 L1174.5,367.5 L1169.1,367.0 L1164.0,366.3 L1159.0,365.6 L1154.4,364.7 L1150.1,363.7 L1146.0,362.6 L1142.4,361.4 L1139.1,360.1 L1136.2,358.7 L1133.7,357.2 L1131.7,355.7 L1130.1,354.1 L1128.9,352.4 L1128.2,350.7 L1128.0,349.0 L1128.0,370.5 L1128.2,371.9 L1128.9,373.3 L1130.1,374.6 L1131.7,375.9 L1133.7,377.1 L1136.2,378.2 L1139.1,379.3 L1142.4,380.2 L1146.0,381.1 L1150.1,381.9 L1154.4,382.6 L1159.0,383.2 L1164.0,383.7 L1169.1,384.1 L1174.5,384.4 L1180.0,384.5 L1185.7,384.6 L1191.5,384.5 L1197.4,384.3 L1203.3,384.0 L1209.2,383.6 L1215.1,383.1 L1220.9,382.4 L1226.6,381.7 L1232.1,380.9 L1237.5,380.0 L1242.6,379.0 L1247.6,377.9 L1252.2,376.8 L1256.5,375.5 L1260.6,374.3 L1264.2,372.9 L1267.5,371.6 L1270.4,370.1 L1272.9,368.7 L1274.9,367.3 L1276.5,365.8 L1277.7,364.4 L1278.4,362.9 L1278.6,361.5Z" fill="#a9b2bd" opacity="0.45"/><path d="M1132.0,428.0 Q1169.4,434.0 1188.2,444.0 L1188.2,454.0 Q1165.6,448.0 1134.0,442.0Z" fill="#b4bdc8" opacity="0.75"/><path d="M1176.2,397.0 L1188.2,399.0 L1188.2,444.0 L1176.2,440.0Z" fill="#a7b1bd"/><path d="M1188.2,399.0 L1188.2,444.0" stroke="#8a94a0" stroke-width="1" opacity="0.7"/><ellipse cx="1160.6" cy="418.0" rx="12" ry="20" fill="#b9c2cc"/><ellipse cx="1157.6" cy="416.0" rx="9.5" ry="17" fill="url(#hole)"/><ellipse cx="1160.6" cy="414.0" rx="2.6" ry="12" fill="#c8bd10" transform="rotate(-12 1160.6 414.0)"/><path d="M1278.6,343.0 L1278.4,344.7 L1277.7,346.5 L1276.5,348.2 L1274.9,349.9 L1272.9,351.6 L1270.4,353.3 L1267.5,354.9 L1264.2,356.5 L1260.6,358.0 L1256.5,359.4 L1252.2,360.8 L1247.6,362.0 L1242.6,363.2 L1237.5,364.2 L1232.1,365.2 L1226.6,366.0 L1220.9,366.7 L1215.1,367.3 L1209.2,367.7 L1203.3,368.0 L1197.4,368.2 L1191.5,368.2 L1185.7,368.1 L1180.0,367.9 L1174.5,367.5 L1169.1,367.0 L1164.0,366.3 L1159.0,365.6 L1154.4,364.7 L1150.1,363.7 L1146.0,362.6 L1142.4,361.4 L1139.1,360.1 L1136.2,358.7 L1133.7,357.2 L1131.7,355.7 L1130.1,354.1 L1128.9,352.4 L1128.2,350.7 L1128.0,349.0 L1128.2,347.3 L1128.9,345.5 L1130.1,343.8 L1131.7,342.1 L1133.7,340.4 L1136.2,338.7 L1139.1,337.1 L1142.4,335.5 L1146.0,334.0 L1150.1,332.6 L1154.4,331.2 L1159.0,330.0 L1164.0,328.8 L1169.1,327.8 L1174.5,326.8 L1180.0,326.0 L1185.7,325.3 L1191.5,324.7 L1197.4,324.3 L1203.3,324.0 L1209.2,323.8 L1215.1,323.8 L1220.9,323.9 L1226.6,324.1 L1232.1,324.5 L1237.5,325.0 L1242.6,325.7 L1247.6,326.4 L1252.2,327.3 L1256.5,328.3 L1260.6,329.4 L1264.2,330.6 L1267.5,331.9 L1270.4,333.3 L1272.9,334.8 L1274.9,336.3 L1276.5,337.9 L1277.7,339.6 L1278.4,341.3 L1278.6,343.0Z" fill="url(#pt2)"/><path d="M1256.0,342.8 L1255.7,344.2 L1254.8,345.7 L1253.3,347.1 L1251.2,348.5 L1248.6,349.9 L1245.4,351.2 L1241.7,352.5 L1237.6,353.6 L1233.1,354.7 L1228.2,355.7 L1223.0,356.6 L1217.5,357.3 L1211.9,357.9 L1206.1,358.3 L1200.3,358.6 L1194.5,358.8 L1188.7,358.8 L1183.1,358.7 L1177.6,358.4 L1172.4,357.9 L1167.5,357.3 L1163.0,356.6 L1158.9,355.8 L1155.2,354.8 L1152.0,353.8 L1149.4,352.6 L1147.3,351.3 L1145.8,350.0 L1144.9,348.6 L1144.6,347.2 L1144.9,345.8 L1145.8,344.3 L1147.3,342.9 L1149.4,341.5 L1152.0,340.1 L1155.2,338.8 L1158.9,337.5 L1163.0,336.4 L1167.5,335.3 L1172.4,334.3 L1177.6,333.4 L1183.1,332.7 L1188.7,332.1 L1194.5,331.7 L1200.3,331.4 L1206.1,331.2 L1211.9,331.2 L1217.5,331.3 L1223.0,331.6 L1228.2,332.1 L1233.1,332.7 L1237.6,333.4 L1241.7,334.2 L1245.4,335.2 L1248.6,336.2 L1251.2,337.4 L1253.3,338.7 L1254.8,340.0 L1255.7,341.4 L1256.0,342.8Z" fill="#949eaa"/><path d="M1146.3,343.8 L1147.8,342.6 L1149.6,341.4 L1151.8,340.2 L1154.4,339.1 L1157.4,338.0 L1160.7,337.0 L1164.2,336.0 L1168.1,335.2 L1172.2,334.3 L1176.6,333.6 L1181.1,333.0 L1185.8,332.4 L1190.5,332.0 L1195.4,331.6 L1200.3,331.4 L1205.2,331.2 L1210.1,331.2 L1214.8,331.3 L1219.5,331.4 L1224.0,331.7 L1228.4,332.1 L1232.5,332.6 L1236.4,333.2 L1239.9,333.8 L1243.2,334.6 L1246.2,335.4 L1248.8,336.3 L1251.0,337.3 L1252.8,338.4 L1254.3,339.4" fill="none" stroke="#d0d8e1" stroke-width="3"/><path d="M1251.9,348.2 L1250.3,349.2 L1248.3,350.2 L1246.1,351.2 L1243.5,352.1 L1240.6,353.0 L1237.4,353.8 L1234.0,354.6 L1230.3,355.4 L1226.4,356.1 L1222.4,356.7 L1218.1,357.2 L1213.8,357.7 L1209.3,358.1 L1204.8,358.4 L1200.3,358.6 L1195.8,358.7 L1191.3,358.8 L1186.8,358.8 L1182.5,358.6 L1178.2,358.4 L1174.2,358.1 L1170.3,357.8 L1166.6,357.3 L1163.2,356.8 L1160.0,356.2 L1157.1,355.5 L1154.5,354.8 L1152.3,354.0 L1150.3,353.2 L1148.7,352.3" fill="none" stroke="#7b8490" stroke-width="1.2" opacity="0.7"/><path d="M1128.5,377.7 L1128.7,378.8 L1129.2,379.8 L1130.1,380.8 L1131.3,381.7 L1132.8,382.5 L1134.7,383.3 L1136.9,384.0 L1139.4,384.6" fill="none" stroke="#161616" stroke-width="2.4"/><path d="M1145.4,385.7 L1148.4,386.0 L1151.6,386.3 L1155.0,386.5 L1158.6,386.6 L1162.4,386.7 L1166.3,386.7 L1170.4,386.6 L1174.6,386.5 L1178.9,386.3 L1183.2,386.0 L1187.7,385.7 L1192.2,385.3 L1196.8,384.8 L1201.4,384.2 L1206.0,383.6 L1210.5,383.0 L1215.1,382.3 L1219.6,381.5 L1224.1,380.7 L1228.4,379.8 L1232.7,378.9 L1236.9,377.9 L1240.9,376.9 L1244.8,375.9 L1248.5,374.9 L1252.1,373.8 L1255.5,372.7 L1258.7,371.6 L1261.7,370.4 L1264.4,369.3 L1267.0,368.1 L1269.3,367.0 L1271.3,365.8 L1273.1,364.7 L1274.6,363.6 L1275.9,362.5 L1276.8,361.4 L1277.5,360.3 L1278.0,359.3 L1278.1,358.3" fill="none" stroke="#161616" stroke-width="2.4"/><path d="M1128.5,384.7 L1128.7,385.9 L1129.4,387.1 L1130.6,388.2 L1132.2,389.2 L1134.2,390.1 L1136.7,390.9 L1139.5,391.7 L1142.8,392.3 L1146.4,392.8 L1150.4,393.2 L1154.7,393.5 L1159.3,393.7 L1164.2,393.7 L1169.3,393.7 L1174.7,393.5 L1180.2,393.2 L1185.8,392.8 L1191.6,392.3 L1197.4,391.7 L1203.3,391.0 L1209.2,390.2 L1215.0,389.3 L1220.8,388.3 L1226.4,387.2 L1231.9,386.1 L1237.3,384.8 L1242.4,383.6 L1247.3,382.2 L1251.9,380.9 L1256.2,379.4 L1260.2,378.0 L1263.8,376.5 L1267.1,375.1 L1269.9,373.6 L1272.4,372.1 L1274.4,370.7 L1276.0,369.3 L1277.2,367.9 L1277.9,366.6 L1278.1,365.3" fill="none" stroke="#161616" stroke-width="2.4"/><path d="M1128.5,391.7 L1128.7,392.9 L1129.4,394.1 L1130.6,395.2 L1132.2,396.2 L1134.2,397.1 L1136.7,397.9 L1139.5,398.7 L1142.8,399.3 L1146.4,399.8 L1150.4,400.2 L1154.7,400.5 L1159.3,400.7 L1164.2,400.7 L1169.3,400.7 L1174.7,400.5 L1180.2,400.2 L1185.8,399.8 L1191.6,399.3 L1197.4,398.7 L1203.3,398.0 L1209.2,397.2 L1215.0,396.3 L1220.8,395.3 L1226.4,394.2 L1231.9,393.1 L1237.3,391.8 L1242.4,390.6 L1247.3,389.2 L1251.9,387.9 L1256.2,386.4 L1260.2,385.0 L1263.8,383.5 L1267.1,382.1 L1269.9,380.6 L1272.4,379.1 L1274.4,377.7 L1276.0,376.3 L1277.2,374.9 L1277.9,373.6 L1278.1,372.3" fill="none" stroke="#161616" stroke-width="2.4"/><path d="M867.5,557.1 L867.0,668.0 L867.2,669.6 L867.9,671.1 L869.1,672.6 L870.7,674.0 L872.7,675.4 L875.2,676.7 L878.1,678.0 L881.3,679.1 L885.0,680.1 L889.0,681.1 L893.3,681.9 L897.9,682.6 L902.8,683.2 L908.0,683.7 L913.3,684.1 L918.8,684.3 L924.5,684.4 L930.3,684.4 L936.1,684.3 L942.0,684.0 L947.9,683.6 L953.7,683.1 L959.5,682.4 L965.2,681.7 L970.7,680.8 L976.0,679.9 L981.2,678.8 L986.1,677.6 L990.7,676.4 L995.0,675.1 L999.0,673.7 L1002.7,672.2 L1005.9,670.7 L1008.8,669.2 L1011.3,667.6 L1013.3,666.0 L1014.9,664.3 L1016.1,662.7 L1016.8,661.1 L1017.0,659.5 L1010.5,552.9 L1010.3,554.6 L1009.6,556.3 L1008.5,558.1 L1007.0,559.8 L1005.1,561.4 L1002.7,563.1 L1000.0,564.7 L996.8,566.2 L993.4,567.7 L989.6,569.0 L985.4,570.3 L981.0,571.5 L976.4,572.6 L971.5,573.6 L966.4,574.5 L961.1,575.3 L955.7,575.9 L950.2,576.4 L944.6,576.8 L939.0,577.0 L933.4,577.1 L927.8,577.1 L922.3,576.9 L916.9,576.6 L911.6,576.1 L906.5,575.6 L901.6,574.9 L897.0,574.1 L892.6,573.1 L888.4,572.1 L884.6,570.9 L881.2,569.7 L878.0,568.3 L875.3,566.9 L872.9,565.4 L871.0,563.8 L869.5,562.2 L868.4,560.6 L867.7,558.9 L867.5,557.1Z" fill="url(#ps3)"/><path d="M1010.5,552.9 L1010.3,554.6 L1009.6,556.3 L1008.5,558.1 L1007.0,559.8 L1005.1,561.4 L1002.7,563.1 L1000.0,564.7 L996.8,566.2 L993.4,567.7 L989.6,569.0 L985.4,570.3 L981.0,571.5 L976.4,572.6 L971.5,573.6 L966.4,574.5 L961.1,575.3 L955.7,575.9 L950.2,576.4 L944.6,576.8 L939.0,577.0 L933.4,577.1 L927.8,577.1 L922.3,576.9 L916.9,576.6 L911.6,576.1 L906.5,575.6 L901.6,574.9 L897.0,574.1 L892.6,573.1 L888.4,572.1 L884.6,570.9 L881.2,569.7 L878.0,568.3 L875.3,566.9 L872.9,565.4 L871.0,563.8 L869.5,562.2 L868.4,560.6 L867.7,558.9 L867.5,557.1 L867.5,583.3 L867.7,584.4 L868.4,585.4 L869.5,586.4 L871.0,587.4 L872.9,588.4 L875.3,589.2 L878.0,590.1 L881.2,590.8 L884.6,591.5 L888.4,592.1 L892.6,592.7 L897.0,593.1 L901.6,593.5 L906.5,593.8 L911.6,594.0 L916.9,594.1 L922.3,594.1 L927.8,594.1 L933.4,593.9 L939.0,593.7 L944.6,593.4 L950.2,593.0 L955.7,592.5 L961.1,591.9 L966.4,591.3 L971.5,590.6 L976.4,589.8 L981.0,588.9 L985.4,588.0 L989.6,587.1 L993.4,586.1 L996.8,585.0 L1000.0,584.0 L1002.7,582.9 L1005.1,581.8 L1007.0,580.6 L1008.5,579.5 L1009.6,578.4 L1010.3,577.2 L1010.5,576.1Z" fill="#a9b2bd" opacity="0.45"/><path d="M871.5,637.0 Q906.8,643.0 924.7,653.0 L924.7,663.0 Q903.2,657.0 873.5,651.0Z" fill="#b4bdc8" opacity="0.75"/><path d="M913.3,606.0 L924.7,608.0 L924.7,653.0 L913.3,649.0Z" fill="#a7b1bd"/><path d="M924.7,608.0 L924.7,653.0" stroke="#8a94a0" stroke-width="1" opacity="0.7"/><ellipse cx="898.7" cy="627.0" rx="12" ry="20" fill="#b9c2cc"/><ellipse cx="895.7" cy="625.0" rx="9.5" ry="17" fill="url(#hole)"/><ellipse cx="898.7" cy="623.0" rx="2.6" ry="12" fill="#c8bd10" transform="rotate(-12 898.7 623.0)"/><path d="M1010.5,552.9 L1010.3,554.6 L1009.6,556.3 L1008.5,558.1 L1007.0,559.8 L1005.1,561.4 L1002.7,563.1 L1000.0,564.7 L996.8,566.2 L993.4,567.7 L989.6,569.0 L985.4,570.3 L981.0,571.5 L976.4,572.6 L971.5,573.6 L966.4,574.5 L961.1,575.3 L955.7,575.9 L950.2,576.4 L944.6,576.8 L939.0,577.0 L933.4,577.1 L927.8,577.1 L922.3,576.9 L916.9,576.6 L911.6,576.1 L906.5,575.6 L901.6,574.9 L897.0,574.1 L892.6,573.1 L888.4,572.1 L884.6,570.9 L881.2,569.7 L878.0,568.3 L875.3,566.9 L872.9,565.4 L871.0,563.8 L869.5,562.2 L868.4,560.6 L867.7,558.9 L867.5,557.1 L867.7,555.4 L868.4,553.7 L869.5,551.9 L871.0,550.2 L872.9,548.6 L875.3,546.9 L878.0,545.3 L881.2,543.8 L884.6,542.3 L888.4,541.0 L892.6,539.7 L897.0,538.5 L901.6,537.4 L906.5,536.4 L911.6,535.5 L916.9,534.7 L922.3,534.1 L927.8,533.6 L933.4,533.2 L939.0,533.0 L944.6,532.9 L950.2,532.9 L955.7,533.1 L961.1,533.4 L966.4,533.9 L971.5,534.4 L976.4,535.1 L981.0,535.9 L985.4,536.9 L989.6,537.9 L993.4,539.1 L996.8,540.3 L1000.0,541.7 L1002.7,543.1 L1005.1,544.6 L1007.0,546.2 L1008.5,547.8 L1009.6,549.4 L1010.3,551.1 L1010.5,552.9Z" fill="url(#pt3)"/><path d="M988.9,552.4 L988.6,553.8 L987.8,555.3 L986.3,556.7 L984.3,558.1 L981.8,559.4 L978.8,560.7 L975.3,561.9 L971.4,563.1 L967.1,564.1 L962.5,565.0 L957.5,565.8 L952.4,566.5 L947.0,567.0 L941.5,567.4 L936.0,567.6 L930.5,567.7 L925.0,567.7 L919.6,567.5 L914.5,567.1 L909.5,566.6 L904.9,566.0 L900.6,565.2 L896.7,564.3 L893.2,563.3 L890.2,562.2 L887.7,561.0 L885.7,559.7 L884.2,558.4 L883.4,557.0 L883.1,555.6 L883.4,554.2 L884.2,552.7 L885.7,551.3 L887.7,549.9 L890.2,548.6 L893.2,547.3 L896.7,546.1 L900.6,544.9 L904.9,543.9 L909.5,543.0 L914.5,542.2 L919.6,541.5 L925.0,541.0 L930.5,540.6 L936.0,540.4 L941.5,540.3 L947.0,540.3 L952.4,540.5 L957.5,540.9 L962.5,541.4 L967.1,542.0 L971.4,542.8 L975.3,543.7 L978.8,544.7 L981.8,545.8 L984.3,547.0 L986.3,548.3 L987.8,549.6 L988.6,551.0 L988.9,552.4Z" fill="#949eaa"/><path d="M884.8,552.1 L886.1,551.0 L887.8,549.8 L890.0,548.7 L892.4,547.6 L895.2,546.5 L898.4,545.5 L901.8,544.6 L905.4,543.8 L909.4,543.0 L913.5,542.3 L917.8,541.7 L922.2,541.2 L926.7,540.8 L931.4,540.6 L936.0,540.4 L940.6,540.3 L945.3,540.3 L949.8,540.4 L954.2,540.6 L958.5,541.0 L962.6,541.4 L966.6,541.9 L970.2,542.6 L973.6,543.3 L976.8,544.1 L979.6,545.0 L982.0,545.9 L984.2,546.9 L985.9,548.0 L987.2,549.1" fill="none" stroke="#d0d8e1" stroke-width="3"/><path d="M985.0,557.8 L983.5,558.8 L981.6,559.7 L979.5,560.7 L977.0,561.6 L974.3,562.4 L971.2,563.3 L968.0,564.0 L964.5,564.7 L960.8,565.4 L956.9,565.9 L952.9,566.4 L948.8,566.8 L944.6,567.2 L940.3,567.4 L936.0,567.6 L931.7,567.7 L927.4,567.7 L923.2,567.6 L919.1,567.4 L915.1,567.2 L911.2,566.8 L907.5,566.4 L904.0,565.9 L900.8,565.4 L897.7,564.7 L895.0,564.0 L892.5,563.3 L890.4,562.5 L888.5,561.6 L887.0,560.7" fill="none" stroke="#7b8490" stroke-width="1.2" opacity="0.7"/><path d="M868.0,588.8 L868.2,589.6 L868.7,590.4 L869.6,591.2 L870.8,591.8 L872.3,592.5 L874.2,593.1 L876.4,593.6 L878.9,594.1" fill="none" stroke="#161616" stroke-width="2.4"/><path d="M884.9,594.9 L887.8,595.1 L890.9,595.3 L894.1,595.5 L897.6,595.6 L901.2,595.6 L904.9,595.6 L908.7,595.6 L912.7,595.5 L916.8,595.3 L920.9,595.1 L925.1,594.9 L929.4,594.5 L933.7,594.2 L938.0,593.8 L942.4,593.4 L946.7,592.9 L951.0,592.3 L955.2,591.8 L959.4,591.2 L963.5,590.5 L967.5,589.8 L971.4,589.1 L975.2,588.4 L978.8,587.6 L982.3,586.9 L985.7,586.1 L988.9,585.3 L991.8,584.4 L994.6,583.6 L997.2,582.7 L999.6,581.9 L1001.7,581.0 L1003.6,580.2 L1005.3,579.4 L1006.7,578.5 L1007.9,577.7 L1008.8,576.9 L1009.5,576.1 L1009.9,575.3 L1010.0,574.6" fill="none" stroke="#161616" stroke-width="2.4"/><path d="M868.0,595.8 L868.2,596.7 L868.9,597.6 L870.0,598.4 L871.5,599.2 L873.4,599.9 L875.7,600.5 L878.5,601.0 L881.6,601.5 L885.0,601.9 L888.8,602.2 L892.9,602.4 L897.3,602.6 L901.9,602.6 L906.8,602.6 L911.8,602.5 L917.1,602.3 L922.4,602.0 L927.9,601.7 L933.4,601.2 L939.0,600.7 L944.6,600.1 L950.1,599.4 L955.6,598.7 L960.9,597.9 L966.2,597.1 L971.2,596.2 L976.1,595.2 L980.7,594.2 L985.1,593.2 L989.2,592.2 L993.0,591.1 L996.4,590.0 L999.5,588.9 L1002.3,587.8 L1004.6,586.7 L1006.5,585.7 L1008.0,584.6 L1009.1,583.6 L1009.8,582.6 L1010.0,581.6" fill="none" stroke="#161616" stroke-width="2.4"/><path d="M868.0,602.8 L868.2,603.7 L868.9,604.6 L870.0,605.4 L871.5,606.2 L873.4,606.9 L875.7,607.5 L878.5,608.0 L881.6,608.5 L885.0,608.9 L888.8,609.2 L892.9,609.4 L897.3,609.6 L901.9,609.6 L906.8,609.6 L911.8,609.5 L917.1,609.3 L922.4,609.0 L927.9,608.7 L933.4,608.2 L939.0,607.7 L944.6,607.1 L950.1,606.4 L955.6,605.7 L960.9,604.9 L966.2,604.1 L971.2,603.2 L976.1,602.2 L980.7,601.2 L985.1,600.2 L989.2,599.2 L993.0,598.1 L996.4,597.0 L999.5,595.9 L1002.3,594.8 L1004.6,593.7 L1006.5,592.7 L1008.0,591.6 L1009.1,590.6 L1009.8,589.6 L1010.0,588.6" fill="none" stroke="#161616" stroke-width="2.4"/><path d="M1279.5,460.3 L1286.0,569.0 L1286.2,570.4 L1286.9,571.8 L1288.1,573.1 L1289.7,574.4 L1291.7,575.6 L1294.2,576.7 L1297.1,577.7 L1300.3,578.7 L1304.0,579.6 L1308.0,580.3 L1312.3,581.0 L1316.9,581.6 L1321.8,582.0 L1327.0,582.4 L1332.3,582.6 L1337.8,582.7 L1343.5,582.7 L1349.3,582.6 L1355.1,582.4 L1361.0,582.0 L1366.9,581.5 L1372.7,581.0 L1378.5,580.3 L1384.2,579.5 L1389.7,578.6 L1395.0,577.7 L1400.2,576.6 L1405.1,575.5 L1409.7,574.3 L1414.0,573.0 L1418.0,571.7 L1421.7,570.3 L1424.9,568.9 L1427.8,567.4 L1430.3,566.0 L1432.3,564.5 L1433.9,563.0 L1435.1,561.5 L1435.8,560.0 L1436.0,558.6 L1429.9,449.7 L1429.7,451.5 L1429.0,453.2 L1427.8,455.0 L1426.2,456.8 L1424.2,458.6 L1421.7,460.3 L1418.8,462.0 L1415.5,463.7 L1411.9,465.3 L1407.9,466.8 L1403.5,468.3 L1398.9,469.7 L1394.0,471.0 L1388.8,472.2 L1383.5,473.3 L1377.9,474.3 L1372.3,475.2 L1366.5,475.9 L1360.6,476.5 L1354.7,477.0 L1348.8,477.3 L1342.9,477.6 L1337.1,477.6 L1331.5,477.5 L1325.9,477.3 L1320.6,477.0 L1315.4,476.5 L1310.5,475.9 L1305.9,475.1 L1301.5,474.3 L1297.5,473.3 L1293.9,472.2 L1290.6,471.0 L1287.7,469.7 L1285.2,468.3 L1283.2,466.8 L1281.6,465.3 L1280.4,463.6 L1279.7,462.0 L1279.5,460.3Z" fill="url(#ps4)"/><path d="M1429.9,449.7 L1429.7,451.5 L1429.0,453.2 L1427.8,455.0 L1426.2,456.8 L1424.2,458.6 L1421.7,460.3 L1418.8,462.0 L1415.5,463.7 L1411.9,465.3 L1407.9,466.8 L1403.5,468.3 L1398.9,469.7 L1394.0,471.0 L1388.8,472.2 L1383.5,473.3 L1377.9,474.3 L1372.3,475.2 L1366.5,475.9 L1360.6,476.5 L1354.7,477.0 L1348.8,477.3 L1342.9,477.6 L1337.1,477.6 L1331.5,477.5 L1325.9,477.3 L1320.6,477.0 L1315.4,476.5 L1310.5,475.9 L1305.9,475.1 L1301.5,474.3 L1297.5,473.3 L1293.9,472.2 L1290.6,471.0 L1287.7,469.7 L1285.2,468.3 L1283.2,466.8 L1281.6,465.3 L1280.4,463.6 L1279.7,462.0 L1279.5,460.3 L1279.5,484.3 L1279.7,485.3 L1280.4,486.3 L1281.6,487.2 L1283.2,488.1 L1285.2,488.9 L1287.7,489.7 L1290.6,490.3 L1293.9,490.9 L1297.5,491.4 L1301.5,491.8 L1305.9,492.2 L1310.5,492.4 L1315.4,492.5 L1320.6,492.6 L1325.9,492.6 L1331.5,492.4 L1337.1,492.2 L1342.9,491.9 L1348.8,491.5 L1354.7,491.0 L1360.6,490.4 L1366.5,489.8 L1372.3,489.0 L1377.9,488.2 L1383.5,487.4 L1388.8,486.5 L1394.0,485.5 L1398.9,484.4 L1403.5,483.4 L1407.9,482.3 L1411.9,481.1 L1415.5,480.0 L1418.8,478.8 L1421.7,477.6 L1424.2,476.4 L1426.2,475.2 L1427.8,474.1 L1429.0,472.9 L1429.7,471.8 L1429.9,470.7Z" fill="#a9b2bd" opacity="0.45"/><path d="M1283.5,537.0 Q1320.9,543.0 1339.7,553.0 L1339.7,563.0 Q1317.1,557.0 1285.5,551.0Z" fill="#b4bdc8" opacity="0.75"/><path d="M1327.6,506.0 L1339.7,508.0 L1339.7,553.0 L1327.6,549.0Z" fill="#a7b1bd"/><path d="M1339.7,508.0 L1339.7,553.0" stroke="#8a94a0" stroke-width="1" opacity="0.7"/><ellipse cx="1312.1" cy="527.0" rx="12" ry="20" fill="#b9c2cc"/><ellipse cx="1309.1" cy="525.0" rx="9.5" ry="17" fill="url(#hole)"/><ellipse cx="1312.1" cy="523.0" rx="2.6" ry="12" fill="#c8bd10" transform="rotate(-12 1312.1 523.0)"/><path d="M1429.9,449.7 L1429.7,451.5 L1429.0,453.2 L1427.8,455.0 L1426.2,456.8 L1424.2,458.6 L1421.7,460.3 L1418.8,462.0 L1415.5,463.7 L1411.9,465.3 L1407.9,466.8 L1403.5,468.3 L1398.9,469.7 L1394.0,471.0 L1388.8,472.2 L1383.5,473.3 L1377.9,474.3 L1372.3,475.2 L1366.5,475.9 L1360.6,476.5 L1354.7,477.0 L1348.8,477.3 L1342.9,477.6 L1337.1,477.6 L1331.5,477.5 L1325.9,477.3 L1320.6,477.0 L1315.4,476.5 L1310.5,475.9 L1305.9,475.1 L1301.5,474.3 L1297.5,473.3 L1293.9,472.2 L1290.6,471.0 L1287.7,469.7 L1285.2,468.3 L1283.2,466.8 L1281.6,465.3 L1280.4,463.6 L1279.7,462.0 L1279.5,460.3 L1279.7,458.5 L1280.4,456.8 L1281.6,455.0 L1283.2,453.2 L1285.2,451.4 L1287.7,449.7 L1290.6,448.0 L1293.9,446.3 L1297.5,444.7 L1301.5,443.2 L1305.9,441.7 L1310.5,440.3 L1315.4,439.0 L1320.6,437.8 L1325.9,436.7 L1331.5,435.7 L1337.1,434.8 L1342.9,434.1 L1348.8,433.5 L1354.7,433.0 L1360.6,432.7 L1366.5,432.4 L1372.3,432.4 L1377.9,432.5 L1383.5,432.7 L1388.8,433.0 L1394.0,433.5 L1398.9,434.1 L1403.5,434.9 L1407.9,435.7 L1411.9,436.7 L1415.5,437.8 L1418.8,439.0 L1421.7,440.3 L1424.2,441.7 L1426.2,443.2 L1427.8,444.7 L1429.0,446.4 L1429.7,448.0 L1429.9,449.7Z" fill="url(#pt4)"/><path d="M1407.3,450.1 L1407.0,451.6 L1406.1,453.0 L1404.6,454.5 L1402.5,456.0 L1399.9,457.4 L1396.7,458.9 L1393.1,460.2 L1388.9,461.5 L1384.4,462.7 L1379.5,463.9 L1374.3,464.9 L1368.9,465.8 L1363.3,466.5 L1357.5,467.2 L1351.7,467.6 L1345.9,468.0 L1340.1,468.2 L1334.5,468.2 L1329.1,468.0 L1323.9,467.8 L1319.0,467.3 L1314.5,466.7 L1310.3,466.0 L1306.7,465.2 L1303.5,464.2 L1300.9,463.1 L1298.8,461.9 L1297.3,460.6 L1296.4,459.3 L1296.1,457.9 L1296.4,456.4 L1297.3,455.0 L1298.8,453.5 L1300.9,452.0 L1303.5,450.6 L1306.7,449.1 L1310.3,447.8 L1314.5,446.5 L1319.0,445.3 L1323.9,444.1 L1329.1,443.1 L1334.5,442.2 L1340.1,441.5 L1345.9,440.8 L1351.7,440.4 L1357.5,440.0 L1363.3,439.8 L1368.9,439.8 L1374.3,440.0 L1379.5,440.2 L1384.4,440.7 L1388.9,441.3 L1393.1,442.0 L1396.7,442.8 L1399.9,443.8 L1402.5,444.9 L1404.6,446.1 L1406.1,447.4 L1407.0,448.7 L1407.3,450.1Z" fill="#949eaa"/><path d="M1297.8,454.4 L1299.2,453.1 L1301.1,451.9 L1303.3,450.7 L1305.9,449.5 L1308.8,448.3 L1312.1,447.2 L1315.7,446.1 L1319.6,445.1 L1323.7,444.2 L1328.0,443.3 L1332.5,442.5 L1337.2,441.8 L1342.0,441.3 L1346.8,440.8 L1351.7,440.4 L1356.6,440.1 L1361.4,439.9 L1366.2,439.8 L1370.9,439.9 L1375.4,440.0 L1379.7,440.3 L1383.8,440.6 L1387.7,441.1 L1391.3,441.6 L1394.6,442.3 L1397.5,443.1 L1400.1,443.9 L1402.3,444.8 L1404.2,445.8 L1405.6,446.8" fill="none" stroke="#d0d8e1" stroke-width="3"/><path d="M1403.2,455.6 L1401.6,456.7 L1399.7,457.7 L1397.4,458.8 L1394.8,459.8 L1391.9,460.8 L1388.8,461.7 L1385.3,462.6 L1381.7,463.5 L1377.8,464.3 L1373.7,465.0 L1369.5,465.7 L1365.2,466.3 L1360.7,466.8 L1356.2,467.2 L1351.7,467.6 L1347.2,467.9 L1342.7,468.1 L1338.2,468.2 L1333.9,468.2 L1329.7,468.1 L1325.6,467.9 L1321.7,467.7 L1318.1,467.3 L1314.6,466.9 L1311.5,466.4 L1308.6,465.8 L1306.0,465.2 L1303.7,464.5 L1301.8,463.7 L1300.2,462.8" fill="none" stroke="#7b8490" stroke-width="1.2" opacity="0.7"/><path d="M1280.0,486.0 L1280.2,486.8 L1280.7,487.5 L1281.6,488.2 L1282.8,488.9 L1284.3,489.5 L1286.2,490.1 L1288.4,490.6 L1290.9,491.0" fill="none" stroke="#161616" stroke-width="2.4"/><path d="M1296.9,491.8 L1299.9,492.1 L1303.1,492.3 L1306.5,492.5 L1310.1,492.6 L1313.9,492.7 L1317.8,492.7 L1321.9,492.7 L1326.0,492.6 L1330.3,492.5 L1334.7,492.3 L1339.2,492.1 L1343.7,491.8 L1348.2,491.5 L1352.8,491.2 L1357.4,490.8 L1362.0,490.3 L1366.5,489.8 L1371.0,489.3 L1375.5,488.7 L1379.8,488.1 L1384.1,487.5 L1388.2,486.9 L1392.3,486.2 L1396.2,485.5 L1399.9,484.7 L1403.5,484.0 L1406.8,483.2 L1410.0,482.4 L1413.0,481.6 L1415.8,480.8 L1418.3,480.0 L1420.6,479.2 L1422.6,478.4 L1424.4,477.6 L1425.9,476.8 L1427.2,476.0 L1428.1,475.2 L1428.8,474.5 L1429.3,473.7 L1429.4,473.0" fill="none" stroke="#161616" stroke-width="2.4"/><path d="M1280.0,493.0 L1280.2,493.9 L1280.9,494.7 L1282.1,495.5 L1283.7,496.2 L1285.7,496.9 L1288.1,497.5 L1291.0,498.0 L1294.3,498.5 L1297.9,498.9 L1301.9,499.2 L1306.2,499.5 L1310.8,499.6 L1315.7,499.7 L1320.8,499.7 L1326.1,499.6 L1331.6,499.4 L1337.3,499.2 L1343.0,498.9 L1348.8,498.5 L1354.7,498.0 L1360.6,497.5 L1366.4,496.8 L1372.1,496.2 L1377.8,495.4 L1383.3,494.6 L1388.6,493.8 L1393.7,492.9 L1398.6,492.0 L1403.2,491.0 L1407.5,490.0 L1411.5,489.0 L1415.1,488.0 L1418.4,487.0 L1421.3,485.9 L1423.7,484.9 L1425.7,483.9 L1427.3,482.9 L1428.5,481.9 L1429.2,480.9 L1429.4,480.0" fill="none" stroke="#161616" stroke-width="2.4"/><path d="M1280.0,500.0 L1280.2,500.9 L1280.9,501.7 L1282.1,502.5 L1283.7,503.2 L1285.7,503.9 L1288.1,504.5 L1291.0,505.0 L1294.3,505.5 L1297.9,505.9 L1301.9,506.2 L1306.2,506.5 L1310.8,506.6 L1315.7,506.7 L1320.8,506.7 L1326.1,506.6 L1331.6,506.4 L1337.3,506.2 L1343.0,505.9 L1348.8,505.5 L1354.7,505.0 L1360.6,504.5 L1366.4,503.8 L1372.1,503.2 L1377.8,502.4 L1383.3,501.6 L1388.6,500.8 L1393.7,499.9 L1398.6,499.0 L1403.2,498.0 L1407.5,497.0 L1411.5,496.0 L1415.1,495.0 L1418.4,494.0 L1421.3,492.9 L1423.7,491.9 L1425.7,490.9 L1427.3,489.9 L1428.5,488.9 L1429.2,487.9 L1429.4,487.0" fill="none" stroke="#161616" stroke-width="2.4"/><path d="M988.4,381.0 L996.7,494.0 L996.9,495.3 L997.6,496.6 L998.8,497.9 L1000.4,499.1 L1002.4,500.3 L1004.9,501.4 L1007.7,502.4 L1011.0,503.4 L1014.6,504.3 L1018.6,505.1 L1022.9,505.8 L1027.6,506.4 L1032.4,506.9 L1037.6,507.3 L1042.9,507.6 L1048.4,507.8 L1054.1,507.9 L1059.8,507.9 L1065.7,507.8 L1071.6,507.6 L1077.4,507.3 L1083.3,506.8 L1089.0,506.3 L1094.7,505.7 L1100.2,505.0 L1105.5,504.1 L1110.7,503.3 L1115.5,502.3 L1120.2,501.2 L1124.5,500.1 L1128.5,498.9 L1132.1,497.7 L1135.4,496.5 L1138.2,495.1 L1140.7,493.8 L1142.7,492.5 L1144.3,491.1 L1145.5,489.7 L1146.2,488.4 L1146.4,487.0 L1139.0,377.0 L1138.8,378.7 L1138.1,380.4 L1136.9,382.2 L1135.3,383.9 L1133.3,385.5 L1130.8,387.2 L1127.9,388.8 L1124.6,390.3 L1121.0,391.7 L1116.9,393.1 L1112.6,394.4 L1108.0,395.6 L1103.0,396.7 L1097.9,397.7 L1092.5,398.5 L1087.0,399.3 L1081.3,399.9 L1075.5,400.4 L1069.6,400.8 L1063.7,401.0 L1057.8,401.1 L1051.9,401.0 L1046.1,400.9 L1040.4,400.6 L1034.9,400.1 L1029.5,399.5 L1024.4,398.8 L1019.4,398.0 L1014.8,397.0 L1010.5,396.0 L1006.4,394.8 L1002.8,393.6 L999.5,392.2 L996.6,390.8 L994.1,389.3 L992.1,387.7 L990.5,386.1 L989.3,384.4 L988.6,382.8 L988.4,381.0Z" fill="url(#ps5)"/><path d="M1139.0,377.0 L1138.8,378.7 L1138.1,380.4 L1136.9,382.2 L1135.3,383.9 L1133.3,385.5 L1130.8,387.2 L1127.9,388.8 L1124.6,390.3 L1121.0,391.7 L1116.9,393.1 L1112.6,394.4 L1108.0,395.6 L1103.0,396.7 L1097.9,397.7 L1092.5,398.5 L1087.0,399.3 L1081.3,399.9 L1075.5,400.4 L1069.6,400.8 L1063.7,401.0 L1057.8,401.1 L1051.9,401.0 L1046.1,400.9 L1040.4,400.6 L1034.9,400.1 L1029.5,399.5 L1024.4,398.8 L1019.4,398.0 L1014.8,397.0 L1010.5,396.0 L1006.4,394.8 L1002.8,393.6 L999.5,392.2 L996.6,390.8 L994.1,389.3 L992.1,387.7 L990.5,386.1 L989.3,384.4 L988.6,382.8 L988.4,381.0 L988.4,399.0 L988.6,400.6 L989.3,402.2 L990.5,403.7 L992.1,405.2 L994.1,406.6 L996.6,408.0 L999.5,409.2 L1002.8,410.4 L1006.4,411.5 L1010.5,412.5 L1014.8,413.4 L1019.4,414.2 L1024.4,414.8 L1029.5,415.4 L1034.9,415.8 L1040.4,416.1 L1046.1,416.3 L1051.9,416.3 L1057.8,416.2 L1063.7,416.0 L1069.6,415.7 L1075.5,415.2 L1081.3,414.6 L1087.0,413.9 L1092.5,413.1 L1097.9,412.2 L1103.0,411.1 L1108.0,410.0 L1112.6,408.8 L1116.9,407.5 L1121.0,406.1 L1124.6,404.7 L1127.9,403.2 L1130.8,401.7 L1133.3,400.1 L1135.3,398.5 L1136.9,396.8 L1138.1,395.2 L1138.8,393.6 L1139.0,392.0Z" fill="#a9b2bd" opacity="0.45"/><path d="M992.4,461.0 Q1029.8,467.0 1048.6,477.0 L1048.6,487.0 Q1026.0,481.0 994.4,475.0Z" fill="#b4bdc8" opacity="0.75"/><path d="M1036.6,430.0 L1048.6,432.0 L1048.6,477.0 L1036.6,473.0Z" fill="#a7b1bd"/><path d="M1048.6,432.0 L1048.6,477.0" stroke="#8a94a0" stroke-width="1" opacity="0.7"/><ellipse cx="1021.0" cy="451.0" rx="12" ry="20" fill="#b9c2cc"/><ellipse cx="1018.0" cy="449.0" rx="9.5" ry="17" fill="url(#hole)"/><ellipse cx="1021.0" cy="447.0" rx="2.6" ry="12" fill="#c8bd10" transform="rotate(-12 1021.0 447.0)"/><path d="M1139.0,377.0 L1138.8,378.7 L1138.1,380.4 L1136.9,382.2 L1135.3,383.9 L1133.3,385.5 L1130.8,387.2 L1127.9,388.8 L1124.6,390.3 L1121.0,391.7 L1116.9,393.1 L1112.6,394.4 L1108.0,395.6 L1103.0,396.7 L1097.9,397.7 L1092.5,398.5 L1087.0,399.3 L1081.3,399.9 L1075.5,400.4 L1069.6,400.8 L1063.7,401.0 L1057.8,401.1 L1051.9,401.0 L1046.1,400.9 L1040.4,400.6 L1034.9,400.1 L1029.5,399.5 L1024.4,398.8 L1019.4,398.0 L1014.8,397.0 L1010.5,396.0 L1006.4,394.8 L1002.8,393.6 L999.5,392.2 L996.6,390.8 L994.1,389.3 L992.1,387.7 L990.5,386.1 L989.3,384.4 L988.6,382.8 L988.4,381.0 L988.6,379.3 L989.3,377.6 L990.5,375.8 L992.1,374.1 L994.1,372.5 L996.6,370.8 L999.5,369.2 L1002.8,367.7 L1006.4,366.3 L1010.5,364.9 L1014.8,363.6 L1019.4,362.4 L1024.4,361.3 L1029.5,360.3 L1034.9,359.5 L1040.4,358.7 L1046.1,358.1 L1051.9,357.6 L1057.8,357.2 L1063.7,357.0 L1069.6,356.9 L1075.5,357.0 L1081.3,357.1 L1087.0,357.4 L1092.5,357.9 L1097.9,358.5 L1103.0,359.2 L1108.0,360.0 L1112.6,361.0 L1116.9,362.0 L1121.0,363.2 L1124.6,364.4 L1127.9,365.8 L1130.8,367.2 L1133.3,368.7 L1135.3,370.3 L1136.9,371.9 L1138.1,373.6 L1138.8,375.2 L1139.0,377.0Z" fill="url(#pt5)"/><path d="M1116.4,376.5 L1116.1,377.9 L1115.2,379.4 L1113.7,380.8 L1111.6,382.2 L1109.0,383.5 L1105.8,384.8 L1102.1,386.0 L1098.0,387.1 L1093.5,388.2 L1088.6,389.1 L1083.4,389.8 L1077.9,390.5 L1072.3,391.0 L1066.5,391.4 L1060.7,391.6 L1054.9,391.7 L1049.1,391.7 L1043.5,391.4 L1038.0,391.1 L1032.8,390.6 L1027.9,389.9 L1023.4,389.1 L1019.3,388.2 L1015.6,387.2 L1012.4,386.1 L1009.8,384.9 L1007.7,383.6 L1006.2,382.3 L1005.3,380.9 L1005.0,379.5 L1005.3,378.1 L1006.2,376.6 L1007.7,375.2 L1009.8,373.8 L1012.4,372.5 L1015.6,371.2 L1019.3,370.0 L1023.4,368.9 L1027.9,367.8 L1032.8,366.9 L1038.0,366.2 L1043.5,365.5 L1049.1,365.0 L1054.9,364.6 L1060.7,364.4 L1066.5,364.3 L1072.3,364.3 L1077.9,364.6 L1083.4,364.9 L1088.6,365.4 L1093.5,366.1 L1098.0,366.9 L1102.1,367.8 L1105.8,368.8 L1109.0,369.9 L1111.6,371.1 L1113.7,372.4 L1115.2,373.7 L1116.1,375.1 L1116.4,376.5Z" fill="#949eaa"/><path d="M1006.7,376.1 L1008.2,374.9 L1010.0,373.7 L1012.2,372.6 L1014.8,371.5 L1017.8,370.5 L1021.1,369.5 L1024.6,368.6 L1028.5,367.7 L1032.6,367.0 L1037.0,366.3 L1041.5,365.7 L1046.2,365.2 L1050.9,364.8 L1055.8,364.5 L1060.7,364.4 L1065.6,364.3 L1070.5,364.3 L1075.2,364.4 L1079.9,364.7 L1084.4,365.0 L1088.8,365.5 L1092.9,366.0 L1096.8,366.6 L1100.3,367.3 L1103.6,368.1 L1106.6,369.0 L1109.2,370.0 L1111.4,371.0 L1113.2,372.0 L1114.7,373.2" fill="none" stroke="#d0d8e1" stroke-width="3"/><path d="M1112.3,381.8 L1110.7,382.8 L1108.7,383.8 L1106.5,384.7 L1103.9,385.6 L1101.0,386.5 L1097.8,387.3 L1094.4,388.1 L1090.7,388.8 L1086.8,389.4 L1082.8,390.0 L1078.5,390.4 L1074.2,390.9 L1069.7,391.2 L1065.2,391.4 L1060.7,391.6 L1056.2,391.7 L1051.7,391.7 L1047.2,391.6 L1042.9,391.4 L1038.6,391.1 L1034.6,390.8 L1030.7,390.4 L1027.0,389.9 L1023.6,389.3 L1020.4,388.7 L1017.5,388.0 L1014.9,387.2 L1012.7,386.4 L1010.7,385.5 L1009.1,384.6" fill="none" stroke="#7b8490" stroke-width="1.2" opacity="0.7"/><path d="M988.9,401.0 L989.1,402.3 L989.6,403.5 L990.5,404.7 L991.7,405.9 L993.2,407.0 L995.1,408.1 L997.3,409.1 L999.8,410.1" fill="none" stroke="#161616" stroke-width="2.4"/><path d="M1005.8,411.9 L1008.8,412.6 L1012.0,413.3 L1015.4,413.9 L1019.0,414.4 L1022.8,414.9 L1026.7,415.3 L1030.8,415.7 L1035.0,415.9 L1039.3,416.1 L1043.6,416.3 L1048.1,416.3 L1052.6,416.3 L1057.2,416.2 L1061.8,416.1 L1066.4,415.9 L1070.9,415.6 L1075.5,415.2 L1080.0,414.8 L1084.5,414.3 L1088.8,413.7 L1093.1,413.1 L1097.3,412.5 L1101.3,411.7 L1105.2,410.9 L1108.9,410.1 L1112.5,409.2 L1115.9,408.3 L1119.1,407.3 L1122.1,406.3 L1124.8,405.3 L1127.4,404.2 L1129.7,403.1 L1131.7,402.0 L1133.5,400.9 L1135.0,399.7 L1136.3,398.6 L1137.2,397.4 L1137.9,396.3 L1138.4,395.1 L1138.5,394.0" fill="none" stroke="#161616" stroke-width="2.4"/><path d="M988.9,408.0 L989.1,409.5 L989.8,410.9 L991.0,412.2 L992.6,413.6 L994.6,414.8 L997.1,416.0 L999.9,417.2 L1003.2,418.2 L1006.8,419.2 L1010.8,420.1 L1015.1,420.9 L1019.7,421.5 L1024.6,422.1 L1029.7,422.6 L1035.1,422.9 L1040.6,423.2 L1046.2,423.3 L1052.0,423.3 L1057.8,423.2 L1063.7,423.0 L1069.6,422.7 L1075.4,422.2 L1081.2,421.7 L1086.8,421.0 L1092.3,420.2 L1097.7,419.4 L1102.8,418.4 L1107.7,417.4 L1112.3,416.3 L1116.6,415.1 L1120.6,413.8 L1124.2,412.5 L1127.5,411.2 L1130.3,409.8 L1132.8,408.3 L1134.8,406.9 L1136.4,405.4 L1137.6,403.9 L1138.3,402.4 L1138.5,401.0" fill="none" stroke="#161616" stroke-width="2.4"/><path d="M988.9,415.0 L989.1,416.5 L989.8,417.9 L991.0,419.2 L992.6,420.6 L994.6,421.8 L997.1,423.0 L999.9,424.2 L1003.2,425.2 L1006.8,426.2 L1010.8,427.1 L1015.1,427.9 L1019.7,428.5 L1024.6,429.1 L1029.7,429.6 L1035.1,429.9 L1040.6,430.2 L1046.2,430.3 L1052.0,430.3 L1057.8,430.2 L1063.7,430.0 L1069.6,429.7 L1075.4,429.2 L1081.2,428.7 L1086.8,428.0 L1092.3,427.2 L1097.7,426.4 L1102.8,425.4 L1107.7,424.4 L1112.3,423.3 L1116.6,422.1 L1120.6,420.8 L1124.2,419.5 L1127.5,418.2 L1130.3,416.8 L1132.8,415.3 L1134.8,413.9 L1136.4,412.4 L1137.6,410.9 L1138.3,409.4 L1138.5,408.0" fill="none" stroke="#161616" stroke-width="2.4"/><path d="M715.0,532.0 L722.0,641.0 L722.2,642.5 L722.9,643.9 L724.1,645.3 L725.7,646.7 L727.7,648.0 L730.2,649.2 L733.1,650.3 L736.3,651.4 L740.0,652.4 L744.0,653.3 L748.3,654.0 L752.9,654.7 L757.8,655.3 L763.0,655.7 L768.3,656.1 L773.8,656.3 L779.5,656.4 L785.3,656.4 L791.1,656.3 L797.0,656.0 L802.9,655.6 L808.7,655.1 L814.5,654.5 L820.2,653.8 L825.7,653.0 L831.0,652.1 L836.2,651.1 L841.1,650.0 L845.7,648.8 L850.0,647.6 L854.0,646.3 L857.7,644.9 L860.9,643.5 L863.8,642.1 L866.3,640.6 L868.3,639.1 L869.9,637.5 L871.1,636.0 L871.8,634.5 L872.0,633.0 L866.0,524.0 L865.8,525.7 L865.1,527.5 L863.9,529.2 L862.3,531.0 L860.3,532.7 L857.8,534.4 L854.9,536.1 L851.6,537.7 L847.9,539.2 L843.9,540.7 L839.5,542.1 L834.9,543.4 L829.9,544.7 L824.8,545.8 L819.4,546.8 L813.8,547.7 L808.1,548.5 L802.3,549.1 L796.4,549.6 L790.5,550.0 L784.6,550.2 L778.7,550.4 L772.9,550.3 L767.2,550.2 L761.6,549.9 L756.2,549.4 L751.1,548.8 L746.1,548.2 L741.5,547.3 L737.1,546.4 L733.1,545.3 L729.4,544.2 L726.1,542.9 L723.2,541.6 L720.7,540.1 L718.7,538.6 L717.1,537.0 L715.9,535.4 L715.2,533.7 L715.0,532.0Z" fill="url(#ps6)"/><path d="M866.0,524.0 L865.8,525.7 L865.1,527.5 L863.9,529.2 L862.3,531.0 L860.3,532.7 L857.8,534.4 L854.9,536.1 L851.6,537.7 L847.9,539.2 L843.9,540.7 L839.5,542.1 L834.9,543.4 L829.9,544.7 L824.8,545.8 L819.4,546.8 L813.8,547.7 L808.1,548.5 L802.3,549.1 L796.4,549.6 L790.5,550.0 L784.6,550.2 L778.7,550.4 L772.9,550.3 L767.2,550.2 L761.6,549.9 L756.2,549.4 L751.1,548.8 L746.1,548.2 L741.5,547.3 L737.1,546.4 L733.1,545.3 L729.4,544.2 L726.1,542.9 L723.2,541.6 L720.7,540.1 L718.7,538.6 L717.1,537.0 L715.9,535.4 L715.2,533.7 L715.0,532.0 L715.0,552.2 L715.2,553.5 L715.9,554.8 L717.1,556.0 L718.7,557.1 L720.7,558.2 L723.2,559.2 L726.1,560.1 L729.4,561.0 L733.1,561.7 L737.1,562.4 L741.5,563.0 L746.1,563.5 L751.1,563.8 L756.2,564.1 L761.6,564.2 L767.2,564.3 L772.9,564.2 L778.7,564.1 L784.6,563.8 L790.5,563.4 L796.4,562.9 L802.3,562.3 L808.1,561.7 L813.8,560.9 L819.4,560.0 L824.8,559.1 L829.9,558.1 L834.9,557.0 L839.5,555.8 L843.9,554.6 L847.9,553.4 L851.6,552.1 L854.9,550.7 L857.8,549.4 L860.3,548.0 L862.3,546.6 L863.9,545.2 L865.1,543.9 L865.8,542.5 L866.0,541.2Z" fill="#a9b2bd" opacity="0.45"/><path d="M719.0,610.0 Q756.5,616.0 775.4,626.0 L775.4,636.0 Q752.8,630.0 721.0,624.0Z" fill="#b4bdc8" opacity="0.75"/><path d="M763.3,579.0 L775.4,581.0 L775.4,626.0 L763.3,622.0Z" fill="#a7b1bd"/><path d="M775.4,581.0 L775.4,626.0" stroke="#8a94a0" stroke-width="1" opacity="0.7"/><ellipse cx="747.7" cy="600.0" rx="12" ry="20" fill="#b9c2cc"/><ellipse cx="744.7" cy="598.0" rx="9.5" ry="17" fill="url(#hole)"/><ellipse cx="747.7" cy="596.0" rx="2.6" ry="12" fill="#c8bd10" transform="rotate(-12 747.7 596.0)"/><path d="M866.0,524.0 L865.8,525.7 L865.1,527.5 L863.9,529.2 L862.3,531.0 L860.3,532.7 L857.8,534.4 L854.9,536.1 L851.6,537.7 L847.9,539.2 L843.9,540.7 L839.5,542.1 L834.9,543.4 L829.9,544.7 L824.8,545.8 L819.4,546.8 L813.8,547.7 L808.1,548.5 L802.3,549.1 L796.4,549.6 L790.5,550.0 L784.6,550.2 L778.7,550.4 L772.9,550.3 L767.2,550.2 L761.6,549.9 L756.2,549.4 L751.1,548.8 L746.1,548.2 L741.5,547.3 L737.1,546.4 L733.1,545.3 L729.4,544.2 L726.1,542.9 L723.2,541.6 L720.7,540.1 L718.7,538.6 L717.1,537.0 L715.9,535.4 L715.2,533.7 L715.0,532.0 L715.2,530.3 L715.9,528.5 L717.1,526.8 L718.7,525.0 L720.7,523.3 L723.2,521.6 L726.1,519.9 L729.4,518.3 L733.1,516.8 L737.1,515.3 L741.5,513.9 L746.1,512.6 L751.1,511.3 L756.2,510.2 L761.6,509.2 L767.2,508.3 L772.9,507.5 L778.7,506.9 L784.6,506.4 L790.5,506.0 L796.4,505.8 L802.3,505.6 L808.1,505.7 L813.8,505.8 L819.4,506.1 L824.8,506.6 L829.9,507.2 L834.9,507.8 L839.5,508.7 L843.9,509.6 L847.9,510.7 L851.6,511.8 L854.9,513.1 L857.8,514.4 L860.3,515.9 L862.3,517.4 L863.9,519.0 L865.1,520.6 L865.8,522.3 L866.0,524.0Z" fill="url(#pt6)"/><path d="M843.4,524.0 L843.1,525.5 L842.1,526.9 L840.6,528.4 L838.5,529.8 L835.9,531.3 L832.7,532.6 L829.0,533.9 L824.9,535.2 L820.3,536.3 L815.4,537.3 L810.2,538.3 L804.8,539.1 L799.1,539.7 L793.3,540.3 L787.5,540.6 L781.7,540.9 L775.9,541.0 L770.2,540.9 L764.8,540.7 L759.6,540.3 L754.7,539.8 L750.1,539.1 L746.0,538.3 L742.3,537.4 L739.1,536.4 L736.5,535.3 L734.4,534.0 L732.9,532.7 L731.9,531.4 L731.6,530.0 L731.9,528.5 L732.9,527.1 L734.4,525.6 L736.5,524.2 L739.1,522.7 L742.3,521.4 L746.0,520.1 L750.1,518.8 L754.7,517.7 L759.6,516.7 L764.8,515.7 L770.2,514.9 L775.9,514.3 L781.7,513.7 L787.5,513.4 L793.3,513.1 L799.1,513.0 L804.8,513.1 L810.2,513.3 L815.4,513.7 L820.3,514.2 L824.9,514.9 L829.0,515.7 L832.7,516.6 L835.9,517.6 L838.5,518.7 L840.6,520.0 L842.1,521.3 L843.1,522.6 L843.4,524.0Z" fill="#949eaa"/><path d="M733.4,526.5 L734.8,525.3 L736.7,524.0 L738.9,522.9 L741.5,521.7 L744.5,520.6 L747.7,519.5 L751.3,518.5 L755.2,517.6 L759.4,516.7 L763.7,515.9 L768.2,515.2 L772.9,514.6 L777.7,514.1 L782.6,513.7 L787.5,513.4 L792.4,513.2 L797.3,513.1 L802.1,513.1 L806.8,513.2 L811.3,513.4 L815.6,513.7 L819.8,514.2 L823.7,514.7 L827.3,515.3 L830.5,516.0 L833.5,516.8 L836.1,517.7 L838.3,518.7 L840.2,519.7 L841.6,520.7" fill="none" stroke="#d0d8e1" stroke-width="3"/><path d="M839.2,529.5 L837.6,530.5 L835.7,531.6 L833.4,532.6 L830.8,533.5 L827.9,534.5 L824.7,535.3 L821.3,536.2 L817.6,537.0 L813.7,537.7 L809.6,538.4 L805.4,539.0 L801.0,539.5 L796.6,540.0 L792.0,540.3 L787.5,540.6 L783.0,540.8 L778.4,540.9 L774.0,540.9 L769.6,540.9 L765.4,540.7 L761.3,540.5 L757.4,540.2 L753.7,539.8 L750.3,539.3 L747.1,538.7 L744.2,538.1 L741.6,537.4 L739.3,536.7 L737.4,535.8 L735.8,535.0" fill="none" stroke="#7b8490" stroke-width="1.2" opacity="0.7"/><path d="M715.5,552.2 L715.7,553.2 L716.2,554.2 L717.1,555.1 L718.3,556.1 L719.8,556.9 L721.7,557.8 L723.9,558.6 L726.4,559.4" fill="none" stroke="#161616" stroke-width="2.4"/><path d="M732.4,560.7 L735.4,561.3 L738.6,561.8 L742.1,562.2 L745.7,562.6 L749.4,562.9 L753.4,563.2 L757.4,563.4 L761.6,563.6 L765.9,563.7 L770.3,563.8 L774.8,563.8 L779.3,563.8 L783.9,563.7 L788.5,563.5 L793.1,563.3 L797.7,563.0 L802.3,562.7 L806.8,562.3 L811.3,561.8 L815.7,561.4 L820.0,560.8 L824.1,560.3 L828.2,559.6 L832.1,559.0 L835.8,558.3 L839.4,557.5 L842.8,556.8 L846.0,556.0 L849.0,555.1 L851.8,554.3 L854.3,553.4 L856.6,552.5 L858.7,551.6 L860.5,550.7 L862.0,549.8 L863.2,548.9 L864.2,547.9 L864.9,547.0 L865.4,546.1 L865.5,545.2" fill="none" stroke="#161616" stroke-width="2.4"/><path d="M715.5,559.2 L715.7,560.4 L716.4,561.5 L717.6,562.6 L719.2,563.6 L721.2,564.6 L723.7,565.5 L726.6,566.4 L729.8,567.2 L733.5,567.9 L737.5,568.6 L741.8,569.2 L746.4,569.7 L751.3,570.1 L756.5,570.4 L761.8,570.6 L767.3,570.8 L773.0,570.8 L778.8,570.8 L784.6,570.6 L790.5,570.4 L796.4,570.1 L802.2,569.7 L808.0,569.2 L813.7,568.6 L819.2,567.9 L824.5,567.2 L829.7,566.4 L834.6,565.5 L839.2,564.6 L843.5,563.6 L847.5,562.6 L851.2,561.5 L854.4,560.4 L857.3,559.2 L859.8,558.1 L861.8,556.9 L863.4,555.7 L864.6,554.5 L865.3,553.3 L865.5,552.2" fill="none" stroke="#161616" stroke-width="2.4"/><path d="M715.5,566.2 L715.7,567.4 L716.4,568.5 L717.6,569.6 L719.2,570.6 L721.2,571.6 L723.7,572.5 L726.6,573.4 L729.8,574.2 L733.5,574.9 L737.5,575.6 L741.8,576.2 L746.4,576.7 L751.3,577.1 L756.5,577.4 L761.8,577.6 L767.3,577.8 L773.0,577.8 L778.8,577.8 L784.6,577.6 L790.5,577.4 L796.4,577.1 L802.2,576.7 L808.0,576.2 L813.7,575.6 L819.2,574.9 L824.5,574.2 L829.7,573.4 L834.6,572.5 L839.2,571.6 L843.5,570.6 L847.5,569.6 L851.2,568.5 L854.4,567.4 L857.3,566.2 L859.8,565.1 L861.8,563.9 L863.4,562.7 L864.6,561.5 L865.3,560.3 L865.5,559.2" fill="none" stroke="#161616" stroke-width="2.4"/><defs><linearGradient id="pinG" x1="0" y1="0" x2="0.25" y2="1"><stop offset="0" stop-color="#7a3c18"/><stop offset="0.3" stop-color="#b85c28"/><stop offset="0.7" stop-color="#c8723e"/><stop offset="1" stop-color="#c98a60"/></linearGradient></defs><path d="M1170,391.5 L1244,372.5 A10.5,19 -14 0 1 1250,410 L1172,429 A10.5,19 -14 0 1 1170,391.5Z" fill="url(#pinG)" opacity="0.95"/><path d="M1165,400 L1240,381" stroke="#7a3a16" stroke-width="3" opacity="0.6"/><ellipse cx="1169" cy="410" rx="10.5" ry="19" transform="rotate(-14 1169 410)" fill="#c47848" stroke="#2fd02f" stroke-width="1" stroke-dasharray="2,1"/><ellipse cx="1171" cy="410" rx="6.5" ry="13" transform="rotate(-14 1171 410)" fill="#a8582a" stroke="#2fd02f" stroke-width="0.9" stroke-dasharray="2,1"/><ellipse cx="1246" cy="391" rx="10.5" ry="19" transform="rotate(-14 1246 391)" fill="none" stroke="#2fd02f" stroke-width="1" stroke-dasharray="2,1"/><ellipse cx="1248" cy="391" rx="6.5" ry="13" transform="rotate(-14 1248 391)" fill="none" stroke="#2fd02f" stroke-width="0.9" stroke-dasharray="2,1"/><path d="M1168,391 L1243,372 M1173,429 L1250,410 M1182,418 L1255,399" stroke="#2fd02f" stroke-width="1" stroke-dasharray="2,1" fill="none"/><path d="M1158,642 L1157,619" stroke="#3ccf3c" stroke-width="1.4"/><circle cx="1157" cy="618.5" r="2.6" fill="#3ccf3c"/><path d="M1158,642 L1139,647" stroke="#e83a3a" stroke-width="1.4"/><circle cx="1139" cy="647" r="2.8" fill="#e83a3a"/><path d="M1158,642 L1145,636.5" stroke="#3cc8d8" stroke-width="1.4"/><circle cx="1145" cy="636.5" r="2.4" fill="#3cc8d8"/><path d="M1611,355 L1611,388 L1619,381 L1625,394 L1631,391 L1625,378.5 L1636,378.5Z" fill="#fff" stroke="#111" stroke-width="1.6" stroke-linejoin="round"/></svg>
</body></html>
